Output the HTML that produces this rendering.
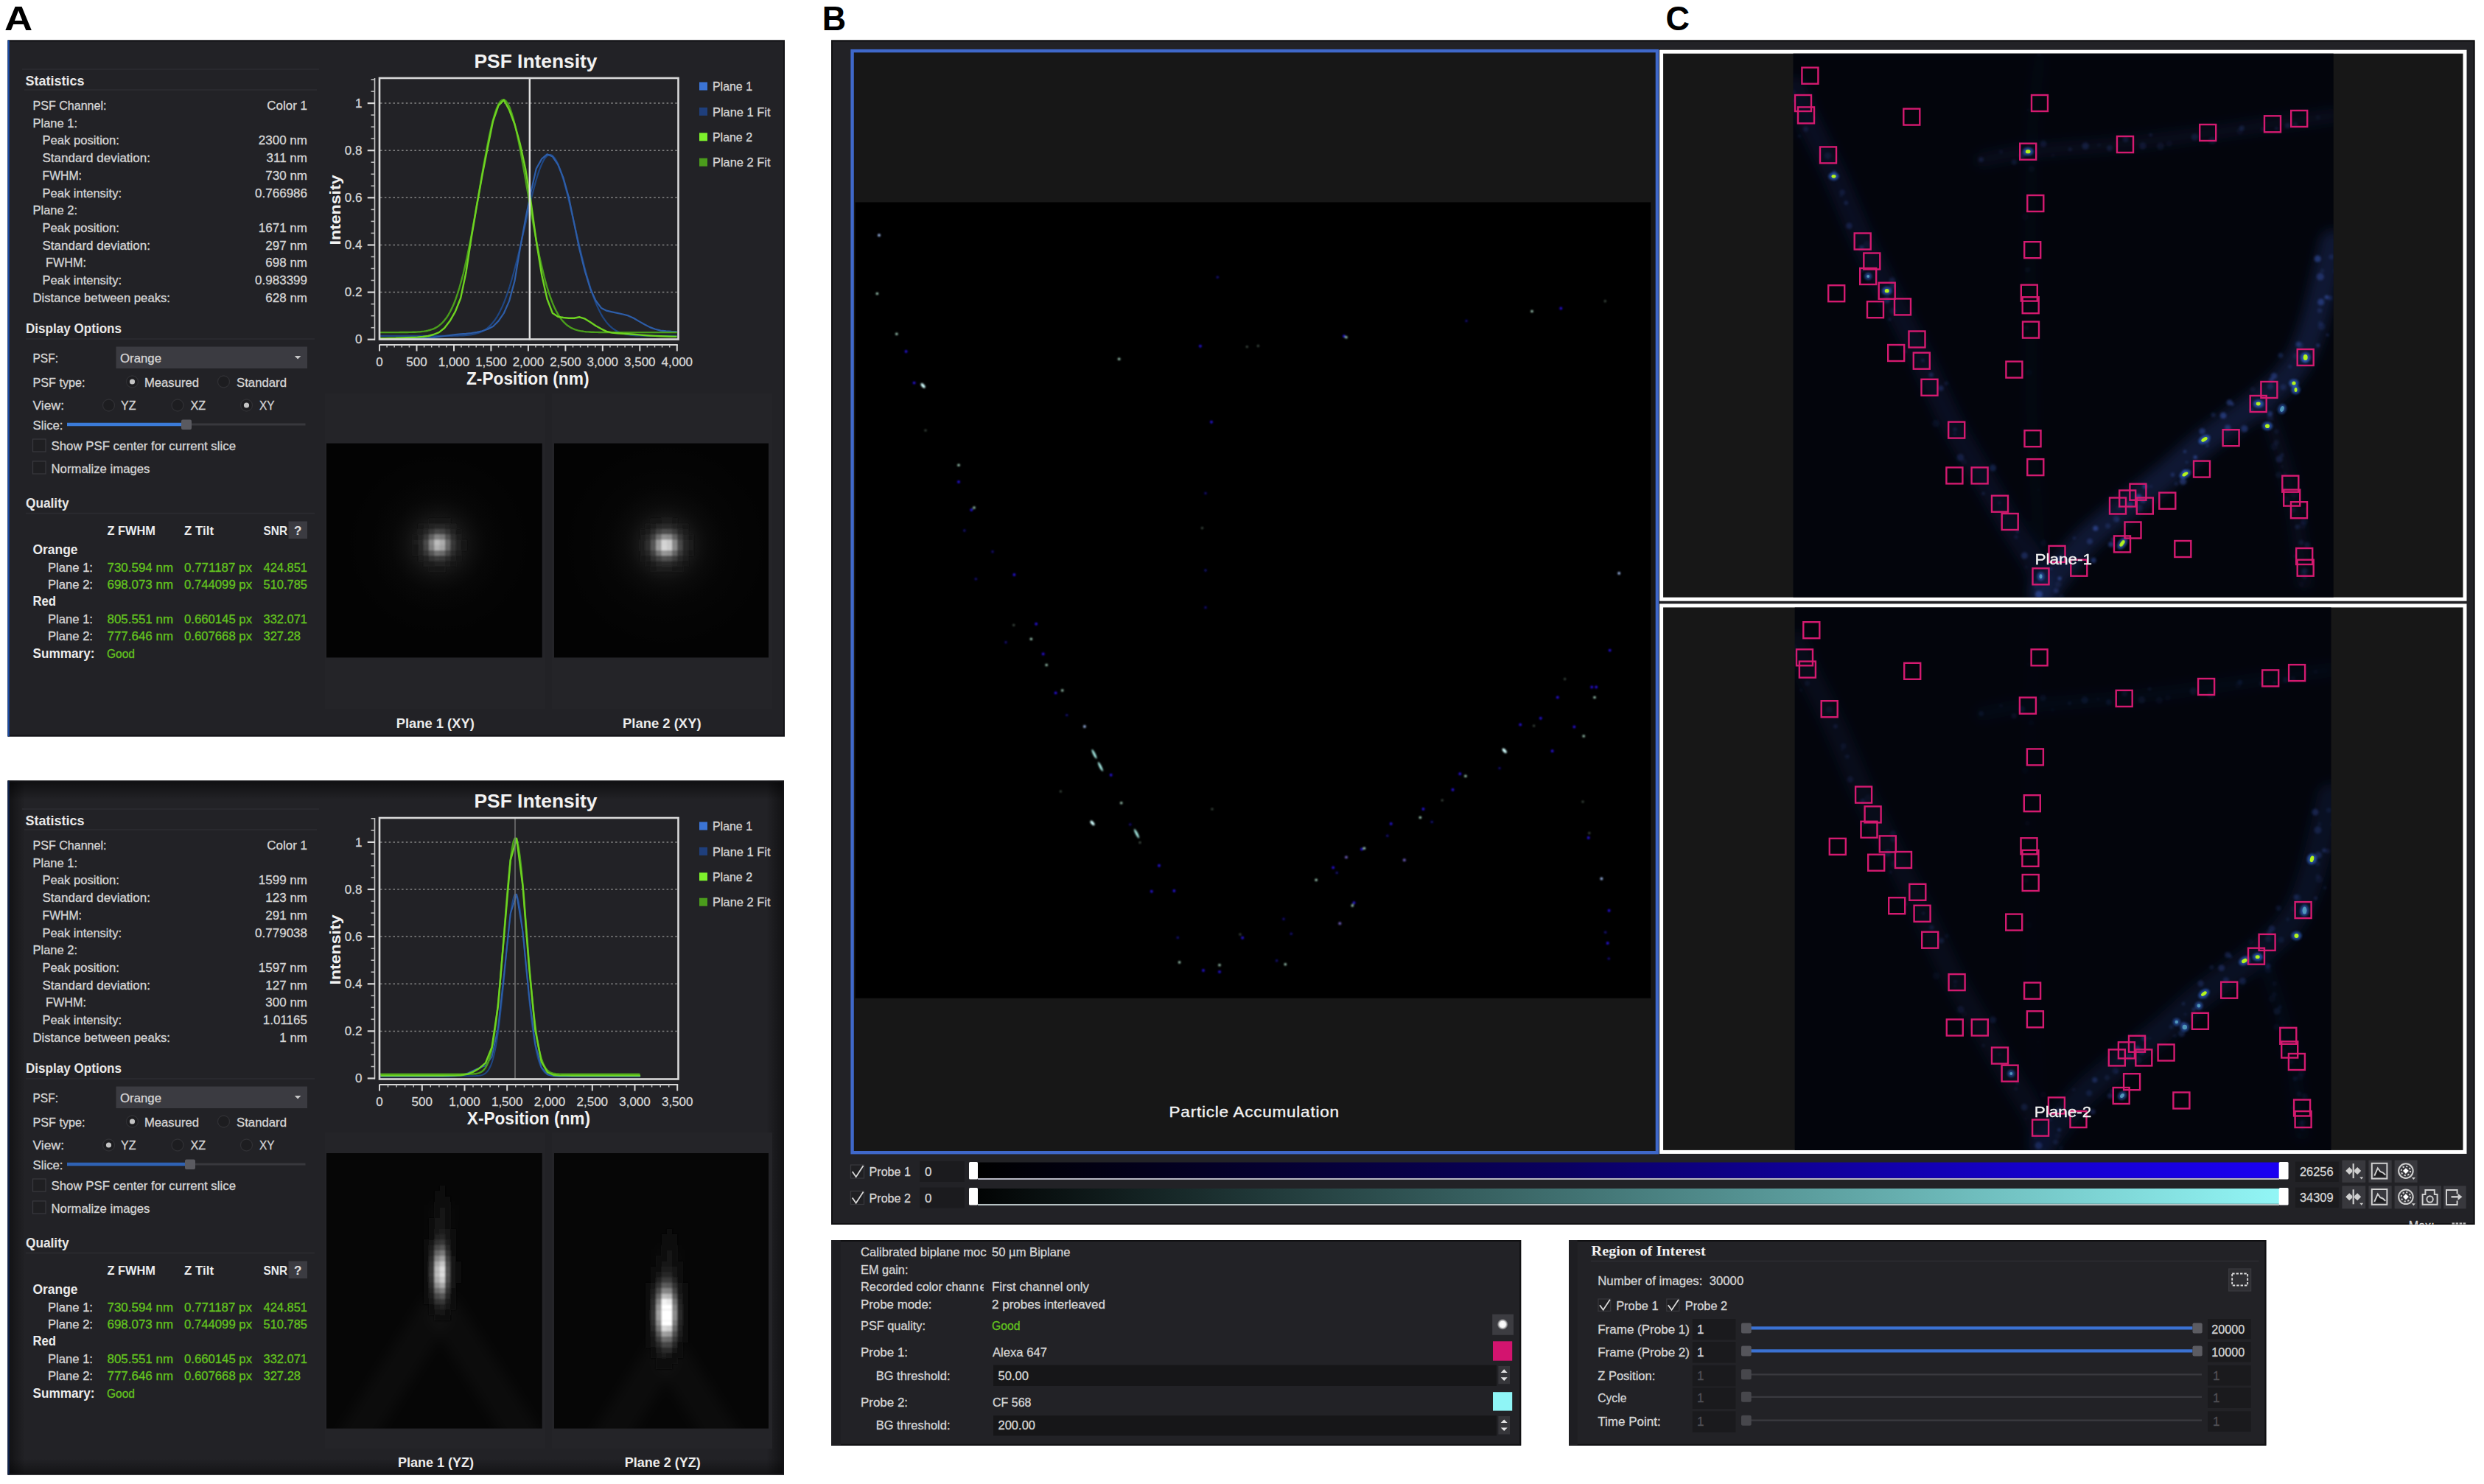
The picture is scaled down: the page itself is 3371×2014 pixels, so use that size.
<!DOCTYPE html>
<html><head><meta charset="utf-8"><title>Figure</title>
<style>
html,body{margin:0;padding:0;background:#ffffff;}
svg{display:block;font-family:"Liberation Sans",sans-serif;filter:blur(0.5px);}
</style></head><body>
<svg width="3371" height="2014" viewBox="0 0 3371 2014">
<defs>
<filter id="b07" x="-50%" y="-50%" width="200%" height="200%"><feGaussianBlur stdDeviation="0.7"/></filter>
<filter id="b1" x="-50%" y="-50%" width="200%" height="200%"><feGaussianBlur stdDeviation="1.0"/></filter>
<filter id="b2" x="-50%" y="-50%" width="200%" height="200%"><feGaussianBlur stdDeviation="1.8"/></filter>
<filter id="b9" x="-20%" y="-20%" width="140%" height="140%"><feGaussianBlur stdDeviation="8"/></filter>
</defs>
<rect x="0" y="0" width="3371" height="2014" fill="#ffffff"/>

<text x="6" y="40.6" font-size="47" font-weight="bold" fill="#000000" textLength="38.2" lengthAdjust="spacingAndGlyphs">A</text>
<text x="1115.8" y="40.6" font-size="47" font-weight="bold" fill="#000000" textLength="32.4" lengthAdjust="spacingAndGlyphs">B</text>
<text x="2260.6" y="40.6" font-size="47" font-weight="bold" fill="#000000" textLength="32.6" lengthAdjust="spacingAndGlyphs">C</text>
<rect x="10.5" y="54.5" width="1054.5" height="945.0" fill="#222226" />
<rect x="11.5" y="55.5" width="1052.5" height="943.0" fill="none" stroke="#131316" stroke-width="2"/>
<rect x="10.5" y="54.5" width="2.2" height="945.0" fill="#1d4ea6" />
<line x1="30.0" y1="94.0" x2="433.0" y2="94.0" stroke="#2d2d32" stroke-width="1.3" />
<line x1="33.0" y1="122.0" x2="430.0" y2="122.0" stroke="#2d2d32" stroke-width="1.3" />
<line x1="35.0" y1="460.0" x2="427.0" y2="460.0" stroke="#2d2d32" stroke-width="1.3" />
<line x1="35.0" y1="696.5" x2="427.0" y2="696.5" stroke="#2d2d32" stroke-width="1.3" />
<text x="34.5" y="115.9" font-size="18" font-weight="bold" textLength="80.0" lengthAdjust="spacingAndGlyphs" fill="#e8e8e8" >Statistics</text>
<text x="44.5" y="149.1" font-size="17" textLength="100.0" lengthAdjust="spacingAndGlyphs" fill="#d6d6d6"  stroke="#d6d6d6" stroke-width="0.3">PSF Channel:</text>
<text x="417.0" y="149.1" font-size="17" text-anchor="end" fill="#d6d6d6"  stroke="#d6d6d6" stroke-width="0.3">Color 1</text>
<text x="44.5" y="172.6" font-size="17" textLength="60.5" lengthAdjust="spacingAndGlyphs" fill="#d6d6d6"  stroke="#d6d6d6" stroke-width="0.3">Plane 1:</text>
<text x="57.5" y="196.1" font-size="17" textLength="104.5" lengthAdjust="spacingAndGlyphs" fill="#d6d6d6"  stroke="#d6d6d6" stroke-width="0.3">Peak position:</text>
<text x="417.0" y="196.1" font-size="17" text-anchor="end" fill="#d6d6d6"  stroke="#d6d6d6" stroke-width="0.3">2300 nm</text>
<text x="57.5" y="220.1" font-size="17" textLength="146.5" lengthAdjust="spacingAndGlyphs" fill="#d6d6d6"  stroke="#d6d6d6" stroke-width="0.3">Standard deviation:</text>
<text x="417.0" y="220.1" font-size="17" text-anchor="end" fill="#d6d6d6"  stroke="#d6d6d6" stroke-width="0.3">311 nm</text>
<text x="57.5" y="243.6" font-size="17" textLength="53.5" lengthAdjust="spacingAndGlyphs" fill="#d6d6d6"  stroke="#d6d6d6" stroke-width="0.3">FWHM:</text>
<text x="417.0" y="243.6" font-size="17" text-anchor="end" fill="#d6d6d6"  stroke="#d6d6d6" stroke-width="0.3">730 nm</text>
<text x="57.5" y="267.6" font-size="17" textLength="107.5" lengthAdjust="spacingAndGlyphs" fill="#d6d6d6"  stroke="#d6d6d6" stroke-width="0.3">Peak intensity:</text>
<text x="417.0" y="267.6" font-size="17" text-anchor="end" fill="#d6d6d6"  stroke="#d6d6d6" stroke-width="0.3">0.766986</text>
<text x="44.5" y="291.1" font-size="17" textLength="60.5" lengthAdjust="spacingAndGlyphs" fill="#d6d6d6"  stroke="#d6d6d6" stroke-width="0.3">Plane 2:</text>
<text x="57.5" y="315.1" font-size="17" textLength="104.5" lengthAdjust="spacingAndGlyphs" fill="#d6d6d6"  stroke="#d6d6d6" stroke-width="0.3">Peak position:</text>
<text x="417.0" y="315.1" font-size="17" text-anchor="end" fill="#d6d6d6"  stroke="#d6d6d6" stroke-width="0.3">1671 nm</text>
<text x="57.5" y="338.6" font-size="17" textLength="146.5" lengthAdjust="spacingAndGlyphs" fill="#d6d6d6"  stroke="#d6d6d6" stroke-width="0.3">Standard deviation:</text>
<text x="417.0" y="338.6" font-size="17" text-anchor="end" fill="#d6d6d6"  stroke="#d6d6d6" stroke-width="0.3">297 nm</text>
<text x="62.0" y="361.6" font-size="17" textLength="55.0" lengthAdjust="spacingAndGlyphs" fill="#d6d6d6"  stroke="#d6d6d6" stroke-width="0.3">FWHM:</text>
<text x="417.0" y="361.6" font-size="17" text-anchor="end" fill="#d6d6d6"  stroke="#d6d6d6" stroke-width="0.3">698 nm</text>
<text x="57.5" y="385.6" font-size="17" textLength="107.5" lengthAdjust="spacingAndGlyphs" fill="#d6d6d6"  stroke="#d6d6d6" stroke-width="0.3">Peak intensity:</text>
<text x="417.0" y="385.6" font-size="17" text-anchor="end" fill="#d6d6d6"  stroke="#d6d6d6" stroke-width="0.3">0.983399</text>
<text x="44.5" y="409.6" font-size="17" textLength="186.5" lengthAdjust="spacingAndGlyphs" fill="#d6d6d6"  stroke="#d6d6d6" stroke-width="0.3">Distance between peaks:</text>
<text x="417.0" y="409.6" font-size="17" text-anchor="end" fill="#d6d6d6"  stroke="#d6d6d6" stroke-width="0.3">628 nm</text>
<text x="35.0" y="451.9" font-size="18" font-weight="bold" textLength="130.0" lengthAdjust="spacingAndGlyphs" fill="#e8e8e8" >Display Options</text>
<text x="44.5" y="491.6" font-size="17" textLength="34.5" lengthAdjust="spacingAndGlyphs" fill="#d6d6d6"  stroke="#d6d6d6" stroke-width="0.3">PSF:</text>
<rect x="157.5" y="470.5" width="259.5" height="29.5" fill="#3b3b41" />
<text x="163.0" y="491.6" font-size="17" textLength="56.0" lengthAdjust="spacingAndGlyphs" fill="#d6d6d6"  stroke="#d6d6d6" stroke-width="0.3">Orange</text>
<path d="M399.8 483.0 h8.6 l-4.3 4.6z" fill="#c8c8c8"/>
<text x="44.5" y="524.6" font-size="17" textLength="71.0" lengthAdjust="spacingAndGlyphs" fill="#d6d6d6"  stroke="#d6d6d6" stroke-width="0.3">PSF type:</text>
<circle cx="179.5" cy="518.0" r="8" fill="#1d1d20" stroke="#303034" stroke-width="1.3"/>
<circle cx="179.5" cy="518.0" r="3.6" fill="#c4c4c4"/>
<text x="196.0" y="524.6" font-size="17" textLength="74.0" lengthAdjust="spacingAndGlyphs" fill="#d6d6d6"  stroke="#d6d6d6" stroke-width="0.3">Measured</text>
<circle cx="303.5" cy="518.0" r="8" fill="#1d1d20" stroke="#303034" stroke-width="1.3"/>
<text x="321.0" y="524.6" font-size="17" textLength="68.0" lengthAdjust="spacingAndGlyphs" fill="#d6d6d6"  stroke="#d6d6d6" stroke-width="0.3">Standard</text>
<text x="44.5" y="555.6" font-size="17" textLength="42.5" lengthAdjust="spacingAndGlyphs" fill="#d6d6d6"  stroke="#d6d6d6" stroke-width="0.3">View:</text>
<circle cx="147.5" cy="550.0" r="8" fill="#1d1d20" stroke="#303034" stroke-width="1.3"/>
<text x="164.0" y="555.6" font-size="17" textLength="20.5" lengthAdjust="spacingAndGlyphs" fill="#d6d6d6"  stroke="#d6d6d6" stroke-width="0.3">YZ</text>
<circle cx="241.0" cy="550.0" r="8" fill="#1d1d20" stroke="#303034" stroke-width="1.3"/>
<text x="258.5" y="555.6" font-size="17" textLength="20.5" lengthAdjust="spacingAndGlyphs" fill="#d6d6d6"  stroke="#d6d6d6" stroke-width="0.3">XZ</text>
<circle cx="334.5" cy="550.0" r="8" fill="#1d1d20" stroke="#303034" stroke-width="1.3"/>
<circle cx="334.5" cy="550.0" r="3.6" fill="#c4c4c4"/>
<text x="352.0" y="555.6" font-size="17" textLength="20.5" lengthAdjust="spacingAndGlyphs" fill="#d6d6d6"  stroke="#d6d6d6" stroke-width="0.3">XY</text>
<text x="44.5" y="583.1" font-size="17" textLength="41.0" lengthAdjust="spacingAndGlyphs" fill="#d6d6d6"  stroke="#d6d6d6" stroke-width="0.3">Slice:</text>
<line x1="260.0" y1="576.0" x2="414.5" y2="576.0" stroke="#38383d" stroke-width="3" />
<line x1="91.0" y1="576.0" x2="246.0" y2="576.0" stroke="#3b7bd8" stroke-width="4.5" />
<rect x="246.0" y="569.5" width="14.0" height="13.5" fill="#5a5a60" rx="2"/>
<rect x="44.5" y="596.0" width="17.5" height="17.0" fill="#1f1f22" stroke="#38383c" stroke-width="1.3"/>
<text x="69.5" y="611.1" font-size="17" textLength="250.5" lengthAdjust="spacingAndGlyphs" fill="#d6d6d6"  stroke="#d6d6d6" stroke-width="0.3">Show PSF center for current slice</text>
<rect x="44.5" y="626.0" width="17.5" height="17.0" fill="#1f1f22" stroke="#38383c" stroke-width="1.3"/>
<text x="69.5" y="641.6" font-size="17" textLength="134.0" lengthAdjust="spacingAndGlyphs" fill="#d6d6d6"  stroke="#d6d6d6" stroke-width="0.3">Normalize images</text>
<text x="35.0" y="688.9" font-size="18" font-weight="bold" textLength="58.5" lengthAdjust="spacingAndGlyphs" fill="#e8e8e8" >Quality</text>
<text x="145.5" y="725.6" font-size="17" font-weight="bold" textLength="65.5" lengthAdjust="spacingAndGlyphs" fill="#ececec" >Z FWHM</text>
<text x="250.0" y="725.6" font-size="17" font-weight="bold" textLength="40.0" lengthAdjust="spacingAndGlyphs" fill="#ececec" >Z Tilt</text>
<text x="357.5" y="725.6" font-size="17" font-weight="bold" textLength="32.5" lengthAdjust="spacingAndGlyphs" fill="#ececec" >SNR</text>
<rect x="391.5" y="707.5" width="25.5" height="23.5" fill="#3b3b41" />
<text x="404.3" y="725.6" font-size="17" font-weight="bold" text-anchor="middle" fill="#e0e0e0" >?</text>
<text x="44.5" y="751.9" font-size="18" font-weight="bold" textLength="61.0" lengthAdjust="spacingAndGlyphs" fill="#ececec" >Orange</text>
<text x="44.5" y="821.9" font-size="18" font-weight="bold" textLength="31.5" lengthAdjust="spacingAndGlyphs" fill="#ececec" >Red</text>
<text x="65.0" y="775.6" font-size="17" textLength="61.0" lengthAdjust="spacingAndGlyphs" fill="#d6d6d6"  stroke="#d6d6d6" stroke-width="0.3">Plane 1:</text>
<text x="145.5" y="775.6" font-size="17" textLength="89.5" lengthAdjust="spacingAndGlyphs" fill="#63c41f"  stroke="#63c41f" stroke-width="0.3">730.594 nm</text>
<text x="250.0" y="775.6" font-size="17" textLength="92.0" lengthAdjust="spacingAndGlyphs" fill="#63c41f"  stroke="#63c41f" stroke-width="0.3">0.771187 px</text>
<text x="357.5" y="775.6" font-size="17" textLength="59.5" lengthAdjust="spacingAndGlyphs" fill="#63c41f"  stroke="#63c41f" stroke-width="0.3">424.851</text>
<text x="65.0" y="798.6" font-size="17" textLength="61.0" lengthAdjust="spacingAndGlyphs" fill="#d6d6d6"  stroke="#d6d6d6" stroke-width="0.3">Plane 2:</text>
<text x="145.5" y="798.6" font-size="17" textLength="89.5" lengthAdjust="spacingAndGlyphs" fill="#63c41f"  stroke="#63c41f" stroke-width="0.3">698.073 nm</text>
<text x="250.0" y="798.6" font-size="17" textLength="92.0" lengthAdjust="spacingAndGlyphs" fill="#63c41f"  stroke="#63c41f" stroke-width="0.3">0.744099 px</text>
<text x="357.5" y="798.6" font-size="17" textLength="59.5" lengthAdjust="spacingAndGlyphs" fill="#63c41f"  stroke="#63c41f" stroke-width="0.3">510.785</text>
<text x="65.0" y="846.1" font-size="17" textLength="61.0" lengthAdjust="spacingAndGlyphs" fill="#d6d6d6"  stroke="#d6d6d6" stroke-width="0.3">Plane 1:</text>
<text x="145.5" y="846.1" font-size="17" textLength="89.5" lengthAdjust="spacingAndGlyphs" fill="#63c41f"  stroke="#63c41f" stroke-width="0.3">805.551 nm</text>
<text x="250.0" y="846.1" font-size="17" textLength="92.0" lengthAdjust="spacingAndGlyphs" fill="#63c41f"  stroke="#63c41f" stroke-width="0.3">0.660145 px</text>
<text x="357.5" y="846.1" font-size="17" textLength="59.5" lengthAdjust="spacingAndGlyphs" fill="#63c41f"  stroke="#63c41f" stroke-width="0.3">332.071</text>
<text x="65.0" y="869.1" font-size="17" textLength="61.0" lengthAdjust="spacingAndGlyphs" fill="#d6d6d6"  stroke="#d6d6d6" stroke-width="0.3">Plane 2:</text>
<text x="145.5" y="869.1" font-size="17" textLength="89.5" lengthAdjust="spacingAndGlyphs" fill="#63c41f"  stroke="#63c41f" stroke-width="0.3">777.646 nm</text>
<text x="250.0" y="869.1" font-size="17" textLength="92.0" lengthAdjust="spacingAndGlyphs" fill="#63c41f"  stroke="#63c41f" stroke-width="0.3">0.607668 px</text>
<text x="357.5" y="869.1" font-size="17" textLength="50.5" lengthAdjust="spacingAndGlyphs" fill="#63c41f"  stroke="#63c41f" stroke-width="0.3">327.28</text>
<text x="44.5" y="893.4" font-size="18" font-weight="bold" textLength="84.0" lengthAdjust="spacingAndGlyphs" fill="#ececec" >Summary:</text>
<text x="145.0" y="893.1" font-size="17" textLength="38.0" lengthAdjust="spacingAndGlyphs" fill="#63c41f"  stroke="#63c41f" stroke-width="0.3">Good</text>
<text x="643.5" y="91.6" font-size="26" font-weight="bold" textLength="167.0" lengthAdjust="spacingAndGlyphs" fill="#f2f2f2" >PSF Intensity</text>
<line x1="516.0" y1="396.6" x2="920.5" y2="396.6" stroke="#828282" stroke-width="1.5" stroke-dasharray="2.6 3.2"/>
<line x1="516.0" y1="332.5" x2="920.5" y2="332.5" stroke="#828282" stroke-width="1.5" stroke-dasharray="2.6 3.2"/>
<line x1="516.0" y1="268.3" x2="920.5" y2="268.3" stroke="#828282" stroke-width="1.5" stroke-dasharray="2.6 3.2"/>
<line x1="516.0" y1="204.2" x2="920.5" y2="204.2" stroke="#828282" stroke-width="1.5" stroke-dasharray="2.6 3.2"/>
<line x1="516.0" y1="140.1" x2="920.5" y2="140.1" stroke="#828282" stroke-width="1.5" stroke-dasharray="2.6 3.2"/>
<clipPath id="clip0"><rect x="515.0" y="106.0" width="405.5" height="354.5"/></clipPath>
<g clip-path="url(#clip0)" fill="none" stroke-linejoin="round">
<path d="M515.0,455.9 L517.5,455.9 L520.0,455.9 L522.6,455.9 L525.1,455.9 L527.6,455.9 L530.1,455.9 L532.7,455.9 L535.2,455.9 L537.7,455.9 L540.2,455.9 L542.8,455.9 L545.3,455.9 L547.8,455.9 L550.3,455.9 L552.9,455.9 L555.4,455.9 L557.9,455.9 L560.4,455.9 L563.0,455.9 L565.5,455.9 L568.0,455.9 L570.5,455.9 L573.0,455.9 L575.6,455.9 L578.1,455.9 L580.6,455.9 L583.1,455.9 L585.7,455.9 L588.2,455.9 L590.7,455.9 L593.2,455.9 L595.8,455.9 L598.3,455.9 L600.8,455.9 L603.3,455.9 L605.9,455.8 L608.4,455.8 L610.9,455.8 L613.4,455.8 L616.0,455.7 L618.5,455.7 L621.0,455.6 L623.5,455.5 L626.0,455.4 L628.6,455.3 L631.1,455.1 L633.6,454.9 L636.1,454.7 L638.7,454.3 L641.2,453.9 L643.7,453.4 L646.2,452.8 L648.8,452.0 L651.3,451.1 L653.8,450.0 L656.3,448.7 L658.9,447.1 L661.4,445.3 L663.9,443.1 L666.4,440.6 L668.9,437.8 L671.5,434.5 L674.0,430.7 L676.5,426.4 L679.0,421.6 L681.6,416.2 L684.1,410.3 L686.6,403.7 L689.1,396.6 L691.7,388.8 L694.2,380.5 L696.7,371.5 L699.2,362.1 L701.8,352.1 L704.3,341.7 L706.8,331.0 L709.3,320.1 L711.9,309.0 L714.4,297.9 L716.9,286.8 L719.4,276.1 L721.9,265.6 L724.5,255.8 L727.0,246.5 L729.5,238.1 L732.0,230.6 L734.6,224.1 L737.1,218.7 L739.6,214.6 L742.1,211.7 L744.7,210.2 L747.2,210.1 L749.7,211.3 L752.2,213.9 L754.8,217.8 L757.3,222.9 L759.8,229.2 L762.3,236.5 L764.9,244.8 L767.4,253.9 L769.9,263.6 L772.4,273.9 L774.9,284.7 L777.5,295.6 L780.0,306.7 L782.5,317.9 L785.0,328.8 L787.6,339.6 L790.1,350.1 L792.6,360.1 L795.1,369.7 L797.7,378.7 L800.2,387.2 L802.7,395.1 L805.2,402.4 L807.8,409.0 L810.3,415.1 L812.8,420.6 L815.3,425.5 L817.8,429.9 L820.4,433.7 L822.9,437.1 L825.4,440.1 L827.9,442.7 L830.5,444.9 L833.0,446.8 L835.5,448.4 L838.0,449.7 L840.6,450.9 L843.1,451.8 L845.6,452.6 L848.1,453.3 L850.7,453.8 L853.2,454.2 L855.7,454.6 L858.2,454.9 L860.8,455.1 L863.3,455.3 L865.8,455.4 L868.3,455.5 L870.8,455.6 L873.4,455.7 L875.9,455.7 L878.4,455.8 L880.9,455.8 L883.5,455.8 L886.0,455.8 L888.5,455.9 L891.0,455.9 L893.6,455.9 L896.1,455.9 L898.6,455.9 L901.1,455.9 L903.7,455.9 L906.2,455.9 L908.7,455.9 L911.2,455.9 L913.8,455.9 L916.3,455.9 L918.8,455.9" stroke="#1f4682" stroke-width="2.2"/>
<path d="M515.0,460.7 L522.3,460.7 L529.7,460.6 L537.0,460.4 L544.4,460.3 L551.7,460.0 L559.0,459.8 L566.4,459.5 L573.7,459.2 L581.1,458.7 L588.4,458.0 L595.7,457.0 L603.1,456.0 L610.4,455.0 L617.7,454.1 L625.1,453.4 L632.4,452.8 L639.8,452.0 L647.1,450.9 L654.4,449.3 L661.8,446.8 L669.1,443.0 L676.5,435.6 L683.8,425.0 L691.1,408.4 L698.5,381.1 L705.8,337.4 L713.2,297.0 L720.5,260.5 L727.8,228.7 L735.2,215.6 L742.5,209.3 L749.9,212.6 L757.2,223.3 L764.5,241.5 L771.9,267.8 L779.2,303.4 L786.5,338.7 L793.9,368.2 L801.2,392.1 L808.6,408.2 L815.9,417.9 L823.2,421.7 L830.6,423.3 L837.9,424.9 L845.3,426.5 L852.6,428.4 L859.9,431.8 L867.3,436.1 L874.6,440.2 L882.0,444.1 L889.3,446.7 L896.6,448.6 L904.0,449.4 L911.3,449.9 L918.6,450.1" stroke="#2d5da8" stroke-width="2.2"/>
<path d="M515.0,451.1 L517.5,451.1 L520.0,451.1 L522.6,451.1 L525.1,451.1 L527.6,451.1 L530.1,451.1 L532.7,451.1 L535.2,451.1 L537.7,451.1 L540.2,451.1 L542.8,451.0 L545.3,451.0 L547.8,451.0 L550.3,451.0 L552.9,451.0 L555.4,450.9 L557.9,450.9 L560.4,450.8 L563.0,450.7 L565.5,450.6 L568.0,450.4 L570.5,450.2 L573.0,449.9 L575.6,449.6 L578.1,449.2 L580.6,448.7 L583.1,448.0 L585.7,447.2 L588.2,446.3 L590.7,445.1 L593.2,443.7 L595.8,441.9 L598.3,439.9 L600.8,437.5 L603.3,434.6 L605.9,431.3 L608.4,427.4 L610.9,423.0 L613.4,417.9 L616.0,412.2 L618.5,405.7 L621.0,398.4 L623.5,390.3 L626.0,381.4 L628.6,371.7 L631.1,361.1 L633.6,349.7 L636.1,337.6 L638.7,324.8 L641.2,311.3 L643.7,297.4 L646.2,283.0 L648.8,268.4 L651.3,253.7 L653.8,239.0 L656.3,224.6 L658.9,210.7 L661.4,197.4 L663.9,184.9 L666.4,173.5 L668.9,163.3 L671.5,154.5 L674.0,147.2 L676.5,141.5 L679.0,137.7 L681.6,135.6 L684.1,135.4 L686.6,137.1 L689.1,140.6 L691.7,145.9 L694.2,152.9 L696.7,161.4 L699.2,171.3 L701.8,182.5 L704.3,194.8 L706.8,207.9 L709.3,221.8 L711.9,236.1 L714.4,250.7 L716.9,265.4 L719.4,280.1 L721.9,294.5 L724.5,308.6 L727.0,322.1 L729.5,335.1 L732.0,347.4 L734.6,358.9 L737.1,369.6 L739.6,379.5 L742.1,388.6 L744.7,396.8 L747.2,404.3 L749.7,410.9 L752.2,416.8 L754.8,422.0 L757.3,426.6 L759.8,430.6 L762.3,434.0 L764.9,436.9 L767.4,439.4 L769.9,441.6 L772.4,443.3 L774.9,444.8 L777.5,446.0 L780.0,447.1 L782.5,447.9 L785.0,448.6 L787.6,449.1 L790.1,449.5 L792.6,449.9 L795.1,450.2 L797.7,450.4 L800.2,450.5 L802.7,450.7 L805.2,450.8 L807.8,450.9 L810.3,450.9 L812.8,451.0 L815.3,451.0 L817.8,451.0 L820.4,451.0 L822.9,451.0 L825.4,451.1 L827.9,451.1 L830.5,451.1 L833.0,451.1 L835.5,451.1 L838.0,451.1 L840.6,451.1 L843.1,451.1 L845.6,451.1 L848.1,451.1 L850.7,451.1 L853.2,451.1 L855.7,451.1 L858.2,451.1 L860.8,451.1 L863.3,451.1 L865.8,451.1 L868.3,451.1 L870.8,451.1 L873.4,451.1 L875.9,451.1 L878.4,451.1 L880.9,451.1 L883.5,451.1 L886.0,451.1 L888.5,451.1 L891.0,451.1 L893.6,451.1 L896.1,451.1 L898.6,451.1 L901.1,451.1 L903.7,451.1 L906.2,451.1 L908.7,451.1 L911.2,451.1 L913.8,451.1 L916.3,451.1 L918.8,451.1" stroke="#4a9e1c" stroke-width="2.4"/>
<path d="M515.0,459.1 L522.3,459.1 L529.7,458.9 L537.0,458.8 L544.4,458.5 L551.7,458.3 L559.0,458.0 L566.4,457.6 L573.7,457.0 L581.1,456.0 L588.4,454.0 L595.7,451.1 L603.1,445.2 L610.4,435.8 L617.7,423.2 L625.1,404.7 L632.4,370.1 L639.8,321.7 L647.1,278.8 L654.4,238.0 L661.8,200.2 L669.1,164.3 L676.5,143.2 L683.8,135.7 L691.1,149.3 L698.5,168.7 L705.8,195.2 L713.2,229.6 L720.5,274.0 L727.8,327.4 L735.2,373.2 L742.5,405.8 L749.9,425.1 L757.2,429.7 L764.5,431.0 L771.9,431.7 L779.2,431.7 L786.5,430.3 L793.9,432.7 L801.2,437.2 L808.6,442.2 L815.9,446.3 L823.2,449.8 L830.6,451.5 L837.9,452.2 L845.3,452.8 L852.6,453.2 L859.9,453.8 L867.3,454.4 L874.6,455.0 L882.0,455.5 L889.3,455.9 L896.6,456.2 L904.0,456.5 L911.3,456.7 L918.6,456.9" stroke="#6ed321" stroke-width="2.4"/>
</g>
<line x1="718.8" y1="105.0" x2="718.8" y2="461.5" stroke="#e0e0e0" stroke-width="2.4" />
<rect x="515.0" y="106.0" width="405.5" height="354.5" fill="none" stroke="#d9d9d9" stroke-width="2.6"/>
<line x1="508.5" y1="106.0" x2="508.5" y2="461.7" stroke="#c8c8c8" stroke-width="1.6" />
<line x1="498.7" y1="460.7" x2="509.0" y2="460.7" stroke="#d8d8d8" stroke-width="2.2" />
<line x1="503.5" y1="444.7" x2="509.0" y2="444.7" stroke="#bdbdbd" stroke-width="1.6" />
<line x1="503.5" y1="428.6" x2="509.0" y2="428.6" stroke="#bdbdbd" stroke-width="1.6" />
<line x1="503.5" y1="412.6" x2="509.0" y2="412.6" stroke="#bdbdbd" stroke-width="1.6" />
<line x1="498.7" y1="396.6" x2="509.0" y2="396.6" stroke="#d8d8d8" stroke-width="2.2" />
<line x1="503.5" y1="380.5" x2="509.0" y2="380.5" stroke="#bdbdbd" stroke-width="1.6" />
<line x1="503.5" y1="364.5" x2="509.0" y2="364.5" stroke="#bdbdbd" stroke-width="1.6" />
<line x1="503.5" y1="348.5" x2="509.0" y2="348.5" stroke="#bdbdbd" stroke-width="1.6" />
<line x1="498.7" y1="332.5" x2="509.0" y2="332.5" stroke="#d8d8d8" stroke-width="2.2" />
<line x1="503.5" y1="316.4" x2="509.0" y2="316.4" stroke="#bdbdbd" stroke-width="1.6" />
<line x1="503.5" y1="300.4" x2="509.0" y2="300.4" stroke="#bdbdbd" stroke-width="1.6" />
<line x1="503.5" y1="284.4" x2="509.0" y2="284.4" stroke="#bdbdbd" stroke-width="1.6" />
<line x1="498.7" y1="268.3" x2="509.0" y2="268.3" stroke="#d8d8d8" stroke-width="2.2" />
<line x1="503.5" y1="252.3" x2="509.0" y2="252.3" stroke="#bdbdbd" stroke-width="1.6" />
<line x1="503.5" y1="236.3" x2="509.0" y2="236.3" stroke="#bdbdbd" stroke-width="1.6" />
<line x1="503.5" y1="220.2" x2="509.0" y2="220.2" stroke="#bdbdbd" stroke-width="1.6" />
<line x1="498.7" y1="204.2" x2="509.0" y2="204.2" stroke="#d8d8d8" stroke-width="2.2" />
<line x1="503.5" y1="188.2" x2="509.0" y2="188.2" stroke="#bdbdbd" stroke-width="1.6" />
<line x1="503.5" y1="172.2" x2="509.0" y2="172.2" stroke="#bdbdbd" stroke-width="1.6" />
<line x1="503.5" y1="156.1" x2="509.0" y2="156.1" stroke="#bdbdbd" stroke-width="1.6" />
<line x1="498.7" y1="140.1" x2="509.0" y2="140.1" stroke="#d8d8d8" stroke-width="2.2" />
<line x1="503.5" y1="124.1" x2="509.0" y2="124.1" stroke="#bdbdbd" stroke-width="1.6" />
<line x1="503.5" y1="108.0" x2="509.0" y2="108.0" stroke="#bdbdbd" stroke-width="1.6" />
<text x="491.5" y="466.3" font-size="17" text-anchor="end" fill="#d6d6d6"  stroke="#d6d6d6" stroke-width="0.3">0</text>
<text x="491.5" y="402.2" font-size="17" text-anchor="end" fill="#d6d6d6"  stroke="#d6d6d6" stroke-width="0.3">0.2</text>
<text x="491.5" y="338.1" font-size="17" text-anchor="end" fill="#d6d6d6"  stroke="#d6d6d6" stroke-width="0.3">0.4</text>
<text x="491.5" y="273.9" font-size="17" text-anchor="end" fill="#d6d6d6"  stroke="#d6d6d6" stroke-width="0.3">0.6</text>
<text x="491.5" y="209.8" font-size="17" text-anchor="end" fill="#d6d6d6"  stroke="#d6d6d6" stroke-width="0.3">0.8</text>
<text x="491.5" y="145.7" font-size="17" text-anchor="end" fill="#d6d6d6"  stroke="#d6d6d6" stroke-width="0.3">1</text>
<text transform="translate(461.9,285.0) rotate(-90)" font-size="21" font-weight="bold" text-anchor="middle" textLength="95" lengthAdjust="spacingAndGlyphs" fill="#f2f2f2">Intensity</text>
<line x1="514.5" y1="468.0" x2="919.8" y2="468.0" stroke="#d8d8d8" stroke-width="2" />
<line x1="515.0" y1="468.0" x2="515.0" y2="476.5" stroke="#d8d8d8" stroke-width="2" />
<text x="515.0" y="496.6" font-size="17" text-anchor="middle" fill="#d6d6d6"  stroke="#d6d6d6" stroke-width="0.3">0</text>
<line x1="525.1" y1="468.0" x2="525.1" y2="471.5" stroke="#c0c0c0" stroke-width="1.5" />
<line x1="535.2" y1="468.0" x2="535.2" y2="471.5" stroke="#c0c0c0" stroke-width="1.5" />
<line x1="545.3" y1="468.0" x2="545.3" y2="471.5" stroke="#c0c0c0" stroke-width="1.5" />
<line x1="555.4" y1="468.0" x2="555.4" y2="471.5" stroke="#c0c0c0" stroke-width="1.5" />
<line x1="565.5" y1="468.0" x2="565.5" y2="476.5" stroke="#d8d8d8" stroke-width="2" />
<text x="565.5" y="496.6" font-size="17" text-anchor="middle" fill="#d6d6d6"  stroke="#d6d6d6" stroke-width="0.3">500</text>
<line x1="575.6" y1="468.0" x2="575.6" y2="471.5" stroke="#c0c0c0" stroke-width="1.5" />
<line x1="585.7" y1="468.0" x2="585.7" y2="471.5" stroke="#c0c0c0" stroke-width="1.5" />
<line x1="595.8" y1="468.0" x2="595.8" y2="471.5" stroke="#c0c0c0" stroke-width="1.5" />
<line x1="605.9" y1="468.0" x2="605.9" y2="471.5" stroke="#c0c0c0" stroke-width="1.5" />
<line x1="616.0" y1="468.0" x2="616.0" y2="476.5" stroke="#d8d8d8" stroke-width="2" />
<text x="616.0" y="496.6" font-size="17" text-anchor="middle" fill="#d6d6d6"  stroke="#d6d6d6" stroke-width="0.3">1,000</text>
<line x1="626.0" y1="468.0" x2="626.0" y2="471.5" stroke="#c0c0c0" stroke-width="1.5" />
<line x1="636.1" y1="468.0" x2="636.1" y2="471.5" stroke="#c0c0c0" stroke-width="1.5" />
<line x1="646.2" y1="468.0" x2="646.2" y2="471.5" stroke="#c0c0c0" stroke-width="1.5" />
<line x1="656.3" y1="468.0" x2="656.3" y2="471.5" stroke="#c0c0c0" stroke-width="1.5" />
<line x1="666.4" y1="468.0" x2="666.4" y2="476.5" stroke="#d8d8d8" stroke-width="2" />
<text x="666.4" y="496.6" font-size="17" text-anchor="middle" fill="#d6d6d6"  stroke="#d6d6d6" stroke-width="0.3">1,500</text>
<line x1="676.5" y1="468.0" x2="676.5" y2="471.5" stroke="#c0c0c0" stroke-width="1.5" />
<line x1="686.6" y1="468.0" x2="686.6" y2="471.5" stroke="#c0c0c0" stroke-width="1.5" />
<line x1="696.7" y1="468.0" x2="696.7" y2="471.5" stroke="#c0c0c0" stroke-width="1.5" />
<line x1="706.8" y1="468.0" x2="706.8" y2="471.5" stroke="#c0c0c0" stroke-width="1.5" />
<line x1="716.9" y1="468.0" x2="716.9" y2="476.5" stroke="#d8d8d8" stroke-width="2" />
<text x="716.9" y="496.6" font-size="17" text-anchor="middle" fill="#d6d6d6"  stroke="#d6d6d6" stroke-width="0.3">2,000</text>
<line x1="727.0" y1="468.0" x2="727.0" y2="471.5" stroke="#c0c0c0" stroke-width="1.5" />
<line x1="737.1" y1="468.0" x2="737.1" y2="471.5" stroke="#c0c0c0" stroke-width="1.5" />
<line x1="747.2" y1="468.0" x2="747.2" y2="471.5" stroke="#c0c0c0" stroke-width="1.5" />
<line x1="757.3" y1="468.0" x2="757.3" y2="471.5" stroke="#c0c0c0" stroke-width="1.5" />
<line x1="767.4" y1="468.0" x2="767.4" y2="476.5" stroke="#d8d8d8" stroke-width="2" />
<text x="767.4" y="496.6" font-size="17" text-anchor="middle" fill="#d6d6d6"  stroke="#d6d6d6" stroke-width="0.3">2,500</text>
<line x1="777.5" y1="468.0" x2="777.5" y2="471.5" stroke="#c0c0c0" stroke-width="1.5" />
<line x1="787.6" y1="468.0" x2="787.6" y2="471.5" stroke="#c0c0c0" stroke-width="1.5" />
<line x1="797.7" y1="468.0" x2="797.7" y2="471.5" stroke="#c0c0c0" stroke-width="1.5" />
<line x1="807.8" y1="468.0" x2="807.8" y2="471.5" stroke="#c0c0c0" stroke-width="1.5" />
<line x1="817.8" y1="468.0" x2="817.8" y2="476.5" stroke="#d8d8d8" stroke-width="2" />
<text x="817.8" y="496.6" font-size="17" text-anchor="middle" fill="#d6d6d6"  stroke="#d6d6d6" stroke-width="0.3">3,000</text>
<line x1="827.9" y1="468.0" x2="827.9" y2="471.5" stroke="#c0c0c0" stroke-width="1.5" />
<line x1="838.0" y1="468.0" x2="838.0" y2="471.5" stroke="#c0c0c0" stroke-width="1.5" />
<line x1="848.1" y1="468.0" x2="848.1" y2="471.5" stroke="#c0c0c0" stroke-width="1.5" />
<line x1="858.2" y1="468.0" x2="858.2" y2="471.5" stroke="#c0c0c0" stroke-width="1.5" />
<line x1="868.3" y1="468.0" x2="868.3" y2="476.5" stroke="#d8d8d8" stroke-width="2" />
<text x="868.3" y="496.6" font-size="17" text-anchor="middle" fill="#d6d6d6"  stroke="#d6d6d6" stroke-width="0.3">3,500</text>
<line x1="878.4" y1="468.0" x2="878.4" y2="471.5" stroke="#c0c0c0" stroke-width="1.5" />
<line x1="888.5" y1="468.0" x2="888.5" y2="471.5" stroke="#c0c0c0" stroke-width="1.5" />
<line x1="898.6" y1="468.0" x2="898.6" y2="471.5" stroke="#c0c0c0" stroke-width="1.5" />
<line x1="908.7" y1="468.0" x2="908.7" y2="471.5" stroke="#c0c0c0" stroke-width="1.5" />
<line x1="918.8" y1="468.0" x2="918.8" y2="476.5" stroke="#d8d8d8" stroke-width="2" />
<text x="918.8" y="496.6" font-size="17" text-anchor="middle" fill="#d6d6d6"  stroke="#d6d6d6" stroke-width="0.3">4,000</text>
<text x="633.0" y="521.6" font-size="23" font-weight="bold" textLength="166.5" lengthAdjust="spacingAndGlyphs" fill="#f2f2f2" >Z-Position (nm)</text>
<rect x="949.0" y="111.5" width="11.0" height="11.0" fill="#3b74d6" />
<text x="967.0" y="123.1" font-size="17" textLength="54.0" lengthAdjust="spacingAndGlyphs" fill="#d6d6d6"  stroke="#d6d6d6" stroke-width="0.3">Plane 1</text>
<rect x="949.0" y="145.9" width="11.0" height="11.0" fill="#1f3f7c" />
<text x="967.0" y="157.5" font-size="17" textLength="78.5" lengthAdjust="spacingAndGlyphs" fill="#d6d6d6"  stroke="#d6d6d6" stroke-width="0.3">Plane 1 Fit</text>
<rect x="949.0" y="180.3" width="11.0" height="11.0" fill="#7df02c" />
<text x="967.0" y="191.9" font-size="17" textLength="54.0" lengthAdjust="spacingAndGlyphs" fill="#d6d6d6"  stroke="#d6d6d6" stroke-width="0.3">Plane 2</text>
<rect x="949.0" y="214.7" width="11.0" height="11.0" fill="#4b9c1c" />
<text x="967.0" y="226.3" font-size="17" textLength="78.5" lengthAdjust="spacingAndGlyphs" fill="#d6d6d6"  stroke="#d6d6d6" stroke-width="0.3">Plane 2 Fit</text>
<rect x="440.6" y="534.0" width="299.4" height="428.0" fill="#242428" />
<rect x="749.0" y="534.0" width="299.0" height="428.0" fill="#242428" />
<rect x="443.0" y="601.7" width="292.7" height="290.7" fill="#030303" />
<rect x="752.0" y="601.7" width="291.0" height="290.7" fill="#030303" />
<radialGradient id="sp1" cx="595.2" cy="738.8" r="130" gradientUnits="userSpaceOnUse"><stop offset="0.000" stop-color="#c5c5c5"/><stop offset="0.071" stop-color="#8c8c8c"/><stop offset="0.143" stop-color="#3e3e3e"/><stop offset="0.214" stop-color="#1f1f1f"/><stop offset="0.286" stop-color="#141414"/><stop offset="0.357" stop-color="#0e0e0e"/><stop offset="0.429" stop-color="#0a0a0a"/><stop offset="0.500" stop-color="#070707"/><stop offset="0.571" stop-color="#060606"/><stop offset="0.643" stop-color="#050505"/><stop offset="0.714" stop-color="#040404"/><stop offset="0.786" stop-color="#040404"/><stop offset="0.857" stop-color="#040404"/><stop offset="0.929" stop-color="#030303"/><stop offset="1.000" stop-color="#030303"/></radialGradient><circle cx="595.2" cy="738.8" r="130" fill="url(#sp1)"/><radialGradient id="sp2" cx="903.8" cy="740" r="135" gradientUnits="userSpaceOnUse"><stop offset="0.000" stop-color="#e5e5e5"/><stop offset="0.071" stop-color="#a5a5a5"/><stop offset="0.143" stop-color="#494949"/><stop offset="0.214" stop-color="#222222"/><stop offset="0.286" stop-color="#151515"/><stop offset="0.357" stop-color="#0e0e0e"/><stop offset="0.429" stop-color="#0a0a0a"/><stop offset="0.500" stop-color="#080808"/><stop offset="0.571" stop-color="#060606"/><stop offset="0.643" stop-color="#050505"/><stop offset="0.714" stop-color="#050505"/><stop offset="0.786" stop-color="#040404"/><stop offset="0.857" stop-color="#040404"/><stop offset="0.929" stop-color="#040404"/><stop offset="1.000" stop-color="#030303"/></radialGradient><circle cx="903.8" cy="740" r="135" fill="url(#sp2)"/><g filter="url(#b1)"><rect x="582.0" y="703.4" width="7.6" height="7.6" fill="#181818"/><rect x="589.4" y="703.4" width="7.6" height="7.6" fill="#191919"/><rect x="596.7" y="703.4" width="7.6" height="7.6" fill="#191919"/><rect x="604.0" y="703.4" width="7.6" height="7.6" fill="#171717"/><rect x="567.4" y="710.7" width="7.6" height="7.6" fill="#171717"/><rect x="574.7" y="710.7" width="7.6" height="7.6" fill="#1c1c1c"/><rect x="582.0" y="710.7" width="7.6" height="7.6" fill="#222222"/><rect x="589.4" y="710.7" width="7.6" height="7.6" fill="#262626"/><rect x="596.7" y="710.7" width="7.6" height="7.6" fill="#252525"/><rect x="604.0" y="710.7" width="7.6" height="7.6" fill="#202020"/><rect x="611.3" y="710.7" width="7.6" height="7.6" fill="#1a1a1a"/><rect x="567.4" y="718.0" width="7.6" height="7.6" fill="#1c1c1c"/><rect x="574.7" y="718.0" width="7.6" height="7.6" fill="#272727"/><rect x="582.0" y="718.0" width="7.6" height="7.6" fill="#383838"/><rect x="589.4" y="718.0" width="7.6" height="7.6" fill="#464646"/><rect x="596.7" y="718.0" width="7.6" height="7.6" fill="#424242"/><rect x="604.0" y="718.0" width="7.6" height="7.6" fill="#313131"/><rect x="611.3" y="718.0" width="7.6" height="7.6" fill="#222222"/><rect x="618.6" y="718.0" width="7.6" height="7.6" fill="#191919"/><rect x="560.1" y="725.2" width="7.6" height="7.6" fill="#181818"/><rect x="567.4" y="725.2" width="7.6" height="7.6" fill="#222222"/><rect x="574.7" y="725.2" width="7.6" height="7.6" fill="#393939"/><rect x="582.0" y="725.2" width="7.6" height="7.6" fill="#616161"/><rect x="589.4" y="725.2" width="7.6" height="7.6" fill="#838383"/><rect x="596.7" y="725.2" width="7.6" height="7.6" fill="#797979"/><rect x="604.0" y="725.2" width="7.6" height="7.6" fill="#505050"/><rect x="611.3" y="725.2" width="7.6" height="7.6" fill="#2e2e2e"/><rect x="618.6" y="725.2" width="7.6" height="7.6" fill="#1d1d1d"/><rect x="560.1" y="732.5" width="7.6" height="7.6" fill="#1a1a1a"/><rect x="567.4" y="732.5" width="7.6" height="7.6" fill="#272727"/><rect x="574.7" y="732.5" width="7.6" height="7.6" fill="#484848"/><rect x="582.0" y="732.5" width="7.6" height="7.6" fill="#868686"/><rect x="589.4" y="732.5" width="7.6" height="7.6" fill="#bcbcbc"/><rect x="596.7" y="732.5" width="7.6" height="7.6" fill="#acacac"/><rect x="604.0" y="732.5" width="7.6" height="7.6" fill="#6b6b6b"/><rect x="611.3" y="732.5" width="7.6" height="7.6" fill="#373737"/><rect x="618.6" y="732.5" width="7.6" height="7.6" fill="#202020"/><rect x="625.9" y="732.5" width="7.6" height="7.6" fill="#161616"/><rect x="560.1" y="739.8" width="7.6" height="7.6" fill="#191919"/><rect x="567.4" y="739.8" width="7.6" height="7.6" fill="#262626"/><rect x="574.7" y="739.8" width="7.6" height="7.6" fill="#454545"/><rect x="582.0" y="739.8" width="7.6" height="7.6" fill="#7f7f7f"/><rect x="589.4" y="739.8" width="7.6" height="7.6" fill="#b1b1b1"/><rect x="596.7" y="739.8" width="7.6" height="7.6" fill="#a3a3a3"/><rect x="604.0" y="739.8" width="7.6" height="7.6" fill="#666666"/><rect x="611.3" y="739.8" width="7.6" height="7.6" fill="#353535"/><rect x="618.6" y="739.8" width="7.6" height="7.6" fill="#202020"/><rect x="625.9" y="739.8" width="7.6" height="7.6" fill="#161616"/><rect x="560.1" y="747.0" width="7.6" height="7.6" fill="#171717"/><rect x="567.4" y="747.0" width="7.6" height="7.6" fill="#212121"/><rect x="574.7" y="747.0" width="7.6" height="7.6" fill="#343434"/><rect x="582.0" y="747.0" width="7.6" height="7.6" fill="#555555"/><rect x="589.4" y="747.0" width="7.6" height="7.6" fill="#717171"/><rect x="596.7" y="747.0" width="7.6" height="7.6" fill="#696969"/><rect x="604.0" y="747.0" width="7.6" height="7.6" fill="#464646"/><rect x="611.3" y="747.0" width="7.6" height="7.6" fill="#2a2a2a"/><rect x="618.6" y="747.0" width="7.6" height="7.6" fill="#1c1c1c"/><rect x="567.4" y="754.3" width="7.6" height="7.6" fill="#1a1a1a"/><rect x="574.7" y="754.3" width="7.6" height="7.6" fill="#242424"/><rect x="582.0" y="754.3" width="7.6" height="7.6" fill="#303030"/><rect x="589.4" y="754.3" width="7.6" height="7.6" fill="#3a3a3a"/><rect x="596.7" y="754.3" width="7.6" height="7.6" fill="#373737"/><rect x="604.0" y="754.3" width="7.6" height="7.6" fill="#2b2b2b"/><rect x="611.3" y="754.3" width="7.6" height="7.6" fill="#1f1f1f"/><rect x="618.6" y="754.3" width="7.6" height="7.6" fill="#181818"/><rect x="574.7" y="761.6" width="7.6" height="7.6" fill="#1a1a1a"/><rect x="582.0" y="761.6" width="7.6" height="7.6" fill="#1e1e1e"/><rect x="589.4" y="761.6" width="7.6" height="7.6" fill="#212121"/><rect x="596.7" y="761.6" width="7.6" height="7.6" fill="#212121"/><rect x="604.0" y="761.6" width="7.6" height="7.6" fill="#1d1d1d"/><rect x="611.3" y="761.6" width="7.6" height="7.6" fill="#181818"/><rect x="582.0" y="768.9" width="7.6" height="7.6" fill="#161616"/><rect x="589.4" y="768.9" width="7.6" height="7.6" fill="#171717"/><rect x="596.7" y="768.9" width="7.6" height="7.6" fill="#171717"/><rect x="883.0" y="703.4" width="7.6" height="7.6" fill="#161616"/><rect x="890.2" y="703.4" width="7.6" height="7.6" fill="#191919"/><rect x="897.5" y="703.4" width="7.6" height="7.6" fill="#1b1b1b"/><rect x="904.8" y="703.4" width="7.6" height="7.6" fill="#1b1b1b"/><rect x="912.0" y="703.4" width="7.6" height="7.6" fill="#191919"/><rect x="875.7" y="710.7" width="7.6" height="7.6" fill="#181818"/><rect x="883.0" y="710.7" width="7.6" height="7.6" fill="#1e1e1e"/><rect x="890.2" y="710.7" width="7.6" height="7.6" fill="#252525"/><rect x="897.5" y="710.7" width="7.6" height="7.6" fill="#2a2a2a"/><rect x="904.8" y="710.7" width="7.6" height="7.6" fill="#292929"/><rect x="912.0" y="710.7" width="7.6" height="7.6" fill="#232323"/><rect x="919.3" y="710.7" width="7.6" height="7.6" fill="#1c1c1c"/><rect x="926.6" y="710.7" width="7.6" height="7.6" fill="#171717"/><rect x="868.4" y="718.0" width="7.6" height="7.6" fill="#171717"/><rect x="875.7" y="718.0" width="7.6" height="7.6" fill="#1f1f1f"/><rect x="883.0" y="718.0" width="7.6" height="7.6" fill="#2c2c2c"/><rect x="890.2" y="718.0" width="7.6" height="7.6" fill="#3f3f3f"/><rect x="897.5" y="718.0" width="7.6" height="7.6" fill="#4e4e4e"/><rect x="904.8" y="718.0" width="7.6" height="7.6" fill="#4b4b4b"/><rect x="912.0" y="718.0" width="7.6" height="7.6" fill="#3a3a3a"/><rect x="919.3" y="718.0" width="7.6" height="7.6" fill="#282828"/><rect x="926.6" y="718.0" width="7.6" height="7.6" fill="#1c1c1c"/><rect x="868.4" y="725.2" width="7.6" height="7.6" fill="#1a1a1a"/><rect x="875.7" y="725.2" width="7.6" height="7.6" fill="#272727"/><rect x="883.0" y="725.2" width="7.6" height="7.6" fill="#414141"/><rect x="890.2" y="725.2" width="7.6" height="7.6" fill="#6d6d6d"/><rect x="897.5" y="725.2" width="7.6" height="7.6" fill="#929292"/><rect x="904.8" y="725.2" width="7.6" height="7.6" fill="#8b8b8b"/><rect x="912.0" y="725.2" width="7.6" height="7.6" fill="#616161"/><rect x="919.3" y="725.2" width="7.6" height="7.6" fill="#383838"/><rect x="926.6" y="725.2" width="7.6" height="7.6" fill="#222222"/><rect x="933.9" y="725.2" width="7.6" height="7.6" fill="#181818"/><rect x="868.4" y="732.5" width="7.6" height="7.6" fill="#1c1c1c"/><rect x="875.7" y="732.5" width="7.6" height="7.6" fill="#2d2d2d"/><rect x="883.0" y="732.5" width="7.6" height="7.6" fill="#555555"/><rect x="890.2" y="732.5" width="7.6" height="7.6" fill="#9a9a9a"/><rect x="897.5" y="732.5" width="7.6" height="7.6" fill="#d4d4d4"/><rect x="904.8" y="732.5" width="7.6" height="7.6" fill="#c9c9c9"/><rect x="912.0" y="732.5" width="7.6" height="7.6" fill="#868686"/><rect x="919.3" y="732.5" width="7.6" height="7.6" fill="#474747"/><rect x="926.6" y="732.5" width="7.6" height="7.6" fill="#272727"/><rect x="933.9" y="732.5" width="7.6" height="7.6" fill="#1a1a1a"/><rect x="868.4" y="739.8" width="7.6" height="7.6" fill="#1c1c1c"/><rect x="875.7" y="739.8" width="7.6" height="7.6" fill="#2d2d2d"/><rect x="883.0" y="739.8" width="7.6" height="7.6" fill="#565656"/><rect x="890.2" y="739.8" width="7.6" height="7.6" fill="#9c9c9c"/><rect x="897.5" y="739.8" width="7.6" height="7.6" fill="#d6d6d6"/><rect x="904.8" y="739.8" width="7.6" height="7.6" fill="#cbcbcb"/><rect x="912.0" y="739.8" width="7.6" height="7.6" fill="#888888"/><rect x="919.3" y="739.8" width="7.6" height="7.6" fill="#484848"/><rect x="926.6" y="739.8" width="7.6" height="7.6" fill="#272727"/><rect x="933.9" y="739.8" width="7.6" height="7.6" fill="#1a1a1a"/><rect x="868.4" y="747.0" width="7.6" height="7.6" fill="#1a1a1a"/><rect x="875.7" y="747.0" width="7.6" height="7.6" fill="#272727"/><rect x="883.0" y="747.0" width="7.6" height="7.6" fill="#434343"/><rect x="890.2" y="747.0" width="7.6" height="7.6" fill="#717171"/><rect x="897.5" y="747.0" width="7.6" height="7.6" fill="#969696"/><rect x="904.8" y="747.0" width="7.6" height="7.6" fill="#8f8f8f"/><rect x="912.0" y="747.0" width="7.6" height="7.6" fill="#636363"/><rect x="919.3" y="747.0" width="7.6" height="7.6" fill="#393939"/><rect x="926.6" y="747.0" width="7.6" height="7.6" fill="#232323"/><rect x="933.9" y="747.0" width="7.6" height="7.6" fill="#181818"/><rect x="868.4" y="754.3" width="7.6" height="7.6" fill="#171717"/><rect x="875.7" y="754.3" width="7.6" height="7.6" fill="#1f1f1f"/><rect x="883.0" y="754.3" width="7.6" height="7.6" fill="#2d2d2d"/><rect x="890.2" y="754.3" width="7.6" height="7.6" fill="#414141"/><rect x="897.5" y="754.3" width="7.6" height="7.6" fill="#515151"/><rect x="904.8" y="754.3" width="7.6" height="7.6" fill="#4e4e4e"/><rect x="912.0" y="754.3" width="7.6" height="7.6" fill="#3b3b3b"/><rect x="919.3" y="754.3" width="7.6" height="7.6" fill="#282828"/><rect x="926.6" y="754.3" width="7.6" height="7.6" fill="#1c1c1c"/><rect x="875.7" y="761.6" width="7.6" height="7.6" fill="#181818"/><rect x="883.0" y="761.6" width="7.6" height="7.6" fill="#1f1f1f"/><rect x="890.2" y="761.6" width="7.6" height="7.6" fill="#262626"/><rect x="897.5" y="761.6" width="7.6" height="7.6" fill="#2b2b2b"/><rect x="904.8" y="761.6" width="7.6" height="7.6" fill="#2a2a2a"/><rect x="912.0" y="761.6" width="7.6" height="7.6" fill="#242424"/><rect x="919.3" y="761.6" width="7.6" height="7.6" fill="#1d1d1d"/><rect x="926.6" y="761.6" width="7.6" height="7.6" fill="#171717"/><rect x="883.0" y="768.9" width="7.6" height="7.6" fill="#171717"/><rect x="890.2" y="768.9" width="7.6" height="7.6" fill="#1a1a1a"/><rect x="897.5" y="768.9" width="7.6" height="7.6" fill="#1c1c1c"/><rect x="904.8" y="768.9" width="7.6" height="7.6" fill="#1b1b1b"/><rect x="912.0" y="768.9" width="7.6" height="7.6" fill="#191919"/><rect x="919.3" y="768.9" width="7.6" height="7.6" fill="#161616"/></g>
<text x="537.8" y="987.9" font-size="18" font-weight="bold" textLength="106.0" lengthAdjust="spacingAndGlyphs" fill="#ececec" >Plane 1 (XY)</text>
<text x="845.0" y="987.9" font-size="18" font-weight="bold" textLength="106.6" lengthAdjust="spacingAndGlyphs" fill="#ececec" >Plane 2 (XY)</text>
<rect x="10.5" y="1059.5" width="1053.5" height="942.0" fill="#222226" />
<linearGradient id="shT" x1="0" y1="0" x2="0" y2="1"><stop offset="0" stop-color="#000" stop-opacity="0.55"/><stop offset="1" stop-color="#000" stop-opacity="0"/></linearGradient>
<linearGradient id="shB" x1="0" y1="1" x2="0" y2="0"><stop offset="0" stop-color="#000" stop-opacity="0.45"/><stop offset="1" stop-color="#000" stop-opacity="0"/></linearGradient>
<linearGradient id="shL" x1="0" y1="0" x2="1" y2="0"><stop offset="0" stop-color="#000" stop-opacity="0.5"/><stop offset="1" stop-color="#000" stop-opacity="0"/></linearGradient>
<linearGradient id="shR" x1="1" y1="0" x2="0" y2="0"><stop offset="0" stop-color="#000" stop-opacity="0.5"/><stop offset="1" stop-color="#000" stop-opacity="0"/></linearGradient>
<rect x="10.5" y="1059.5" width="1053.5" height="26.0" fill="url(#shT)" />
<rect x="10.5" y="1979.5" width="1053.5" height="22.0" fill="url(#shB)" />
<rect x="10.5" y="1059.5" width="23.5" height="942.0" fill="url(#shL)" />
<rect x="1040.0" y="1059.5" width="24.0" height="942.0" fill="url(#shR)" />
<rect x="11.5" y="1060.5" width="1051.5" height="940.0" fill="none" stroke="#131316" stroke-width="2"/>
<rect x="10.5" y="1059.5" width="2.2" height="942.0" fill="#10244f" />
<line x1="30.0" y1="1098.0" x2="433.0" y2="1098.0" stroke="#2d2d32" stroke-width="1.3" />
<line x1="33.0" y1="1126.0" x2="430.0" y2="1126.0" stroke="#2d2d32" stroke-width="1.3" />
<line x1="35.0" y1="1464.0" x2="427.0" y2="1464.0" stroke="#2d2d32" stroke-width="1.3" />
<line x1="35.0" y1="1700.5" x2="427.0" y2="1700.5" stroke="#2d2d32" stroke-width="1.3" />
<text x="34.5" y="1119.9" font-size="18" font-weight="bold" textLength="80.0" lengthAdjust="spacingAndGlyphs" fill="#e8e8e8" >Statistics</text>
<text x="44.5" y="1153.1" font-size="17" textLength="100.0" lengthAdjust="spacingAndGlyphs" fill="#d6d6d6"  stroke="#d6d6d6" stroke-width="0.3">PSF Channel:</text>
<text x="417.0" y="1153.1" font-size="17" text-anchor="end" fill="#d6d6d6"  stroke="#d6d6d6" stroke-width="0.3">Color 1</text>
<text x="44.5" y="1176.6" font-size="17" textLength="60.5" lengthAdjust="spacingAndGlyphs" fill="#d6d6d6"  stroke="#d6d6d6" stroke-width="0.3">Plane 1:</text>
<text x="57.5" y="1200.1" font-size="17" textLength="104.5" lengthAdjust="spacingAndGlyphs" fill="#d6d6d6"  stroke="#d6d6d6" stroke-width="0.3">Peak position:</text>
<text x="417.0" y="1200.1" font-size="17" text-anchor="end" fill="#d6d6d6"  stroke="#d6d6d6" stroke-width="0.3">1599 nm</text>
<text x="57.5" y="1224.1" font-size="17" textLength="146.5" lengthAdjust="spacingAndGlyphs" fill="#d6d6d6"  stroke="#d6d6d6" stroke-width="0.3">Standard deviation:</text>
<text x="417.0" y="1224.1" font-size="17" text-anchor="end" fill="#d6d6d6"  stroke="#d6d6d6" stroke-width="0.3">123 nm</text>
<text x="57.5" y="1247.6" font-size="17" textLength="53.5" lengthAdjust="spacingAndGlyphs" fill="#d6d6d6"  stroke="#d6d6d6" stroke-width="0.3">FWHM:</text>
<text x="417.0" y="1247.6" font-size="17" text-anchor="end" fill="#d6d6d6"  stroke="#d6d6d6" stroke-width="0.3">291 nm</text>
<text x="57.5" y="1271.6" font-size="17" textLength="107.5" lengthAdjust="spacingAndGlyphs" fill="#d6d6d6"  stroke="#d6d6d6" stroke-width="0.3">Peak intensity:</text>
<text x="417.0" y="1271.6" font-size="17" text-anchor="end" fill="#d6d6d6"  stroke="#d6d6d6" stroke-width="0.3">0.779038</text>
<text x="44.5" y="1295.1" font-size="17" textLength="60.5" lengthAdjust="spacingAndGlyphs" fill="#d6d6d6"  stroke="#d6d6d6" stroke-width="0.3">Plane 2:</text>
<text x="57.5" y="1319.1" font-size="17" textLength="104.5" lengthAdjust="spacingAndGlyphs" fill="#d6d6d6"  stroke="#d6d6d6" stroke-width="0.3">Peak position:</text>
<text x="417.0" y="1319.1" font-size="17" text-anchor="end" fill="#d6d6d6"  stroke="#d6d6d6" stroke-width="0.3">1597 nm</text>
<text x="57.5" y="1342.6" font-size="17" textLength="146.5" lengthAdjust="spacingAndGlyphs" fill="#d6d6d6"  stroke="#d6d6d6" stroke-width="0.3">Standard deviation:</text>
<text x="417.0" y="1342.6" font-size="17" text-anchor="end" fill="#d6d6d6"  stroke="#d6d6d6" stroke-width="0.3">127 nm</text>
<text x="62.0" y="1365.6" font-size="17" textLength="55.0" lengthAdjust="spacingAndGlyphs" fill="#d6d6d6"  stroke="#d6d6d6" stroke-width="0.3">FWHM:</text>
<text x="417.0" y="1365.6" font-size="17" text-anchor="end" fill="#d6d6d6"  stroke="#d6d6d6" stroke-width="0.3">300 nm</text>
<text x="57.5" y="1389.6" font-size="17" textLength="107.5" lengthAdjust="spacingAndGlyphs" fill="#d6d6d6"  stroke="#d6d6d6" stroke-width="0.3">Peak intensity:</text>
<text x="417.0" y="1389.6" font-size="17" text-anchor="end" fill="#d6d6d6"  stroke="#d6d6d6" stroke-width="0.3">1.01165</text>
<text x="44.5" y="1413.6" font-size="17" textLength="186.5" lengthAdjust="spacingAndGlyphs" fill="#d6d6d6"  stroke="#d6d6d6" stroke-width="0.3">Distance between peaks:</text>
<text x="417.0" y="1413.6" font-size="17" text-anchor="end" fill="#d6d6d6"  stroke="#d6d6d6" stroke-width="0.3">1 nm</text>
<text x="35.0" y="1455.9" font-size="18" font-weight="bold" textLength="130.0" lengthAdjust="spacingAndGlyphs" fill="#e8e8e8" >Display Options</text>
<text x="44.5" y="1495.6" font-size="17" textLength="34.5" lengthAdjust="spacingAndGlyphs" fill="#d6d6d6"  stroke="#d6d6d6" stroke-width="0.3">PSF:</text>
<rect x="157.5" y="1474.5" width="259.5" height="29.5" fill="#3b3b41" />
<text x="163.0" y="1495.6" font-size="17" textLength="56.0" lengthAdjust="spacingAndGlyphs" fill="#d6d6d6"  stroke="#d6d6d6" stroke-width="0.3">Orange</text>
<path d="M399.8 1487.0 h8.6 l-4.3 4.6z" fill="#c8c8c8"/>
<text x="44.5" y="1528.6" font-size="17" textLength="71.0" lengthAdjust="spacingAndGlyphs" fill="#d6d6d6"  stroke="#d6d6d6" stroke-width="0.3">PSF type:</text>
<circle cx="179.5" cy="1522.0" r="8" fill="#1d1d20" stroke="#303034" stroke-width="1.3"/>
<circle cx="179.5" cy="1522.0" r="3.6" fill="#c4c4c4"/>
<text x="196.0" y="1528.6" font-size="17" textLength="74.0" lengthAdjust="spacingAndGlyphs" fill="#d6d6d6"  stroke="#d6d6d6" stroke-width="0.3">Measured</text>
<circle cx="303.5" cy="1522.0" r="8" fill="#1d1d20" stroke="#303034" stroke-width="1.3"/>
<text x="321.0" y="1528.6" font-size="17" textLength="68.0" lengthAdjust="spacingAndGlyphs" fill="#d6d6d6"  stroke="#d6d6d6" stroke-width="0.3">Standard</text>
<text x="44.5" y="1559.6" font-size="17" textLength="42.5" lengthAdjust="spacingAndGlyphs" fill="#d6d6d6"  stroke="#d6d6d6" stroke-width="0.3">View:</text>
<circle cx="147.5" cy="1554.0" r="8" fill="#1d1d20" stroke="#303034" stroke-width="1.3"/>
<circle cx="147.5" cy="1554.0" r="3.6" fill="#c4c4c4"/>
<text x="164.0" y="1559.6" font-size="17" textLength="20.5" lengthAdjust="spacingAndGlyphs" fill="#d6d6d6"  stroke="#d6d6d6" stroke-width="0.3">YZ</text>
<circle cx="241.0" cy="1554.0" r="8" fill="#1d1d20" stroke="#303034" stroke-width="1.3"/>
<text x="258.5" y="1559.6" font-size="17" textLength="20.5" lengthAdjust="spacingAndGlyphs" fill="#d6d6d6"  stroke="#d6d6d6" stroke-width="0.3">XZ</text>
<circle cx="334.5" cy="1554.0" r="8" fill="#1d1d20" stroke="#303034" stroke-width="1.3"/>
<text x="352.0" y="1559.6" font-size="17" textLength="20.5" lengthAdjust="spacingAndGlyphs" fill="#d6d6d6"  stroke="#d6d6d6" stroke-width="0.3">XY</text>
<text x="44.5" y="1587.1" font-size="17" textLength="41.0" lengthAdjust="spacingAndGlyphs" fill="#d6d6d6"  stroke="#d6d6d6" stroke-width="0.3">Slice:</text>
<line x1="265.0" y1="1580.0" x2="414.5" y2="1580.0" stroke="#38383d" stroke-width="3" />
<line x1="91.0" y1="1580.0" x2="251.0" y2="1580.0" stroke="#2f62b4" stroke-width="4.5" />
<rect x="251.0" y="1573.5" width="14.0" height="13.5" fill="#5a5a60" rx="2"/>
<rect x="44.5" y="1600.0" width="17.5" height="17.0" fill="#1f1f22" stroke="#38383c" stroke-width="1.3"/>
<text x="69.5" y="1615.1" font-size="17" textLength="250.5" lengthAdjust="spacingAndGlyphs" fill="#d6d6d6"  stroke="#d6d6d6" stroke-width="0.3">Show PSF center for current slice</text>
<rect x="44.5" y="1630.0" width="17.5" height="17.0" fill="#1f1f22" stroke="#38383c" stroke-width="1.3"/>
<text x="69.5" y="1645.6" font-size="17" textLength="134.0" lengthAdjust="spacingAndGlyphs" fill="#d6d6d6"  stroke="#d6d6d6" stroke-width="0.3">Normalize images</text>
<text x="35.0" y="1692.9" font-size="18" font-weight="bold" textLength="58.5" lengthAdjust="spacingAndGlyphs" fill="#e8e8e8" >Quality</text>
<text x="145.5" y="1729.6" font-size="17" font-weight="bold" textLength="65.5" lengthAdjust="spacingAndGlyphs" fill="#ececec" >Z FWHM</text>
<text x="250.0" y="1729.6" font-size="17" font-weight="bold" textLength="40.0" lengthAdjust="spacingAndGlyphs" fill="#ececec" >Z Tilt</text>
<text x="357.5" y="1729.6" font-size="17" font-weight="bold" textLength="32.5" lengthAdjust="spacingAndGlyphs" fill="#ececec" >SNR</text>
<rect x="391.5" y="1711.5" width="25.5" height="23.5" fill="#3b3b41" />
<text x="404.3" y="1729.6" font-size="17" font-weight="bold" text-anchor="middle" fill="#e0e0e0" >?</text>
<text x="44.5" y="1755.9" font-size="18" font-weight="bold" textLength="61.0" lengthAdjust="spacingAndGlyphs" fill="#ececec" >Orange</text>
<text x="44.5" y="1825.9" font-size="18" font-weight="bold" textLength="31.5" lengthAdjust="spacingAndGlyphs" fill="#ececec" >Red</text>
<text x="65.0" y="1779.6" font-size="17" textLength="61.0" lengthAdjust="spacingAndGlyphs" fill="#d6d6d6"  stroke="#d6d6d6" stroke-width="0.3">Plane 1:</text>
<text x="145.5" y="1779.6" font-size="17" textLength="89.5" lengthAdjust="spacingAndGlyphs" fill="#63c41f"  stroke="#63c41f" stroke-width="0.3">730.594 nm</text>
<text x="250.0" y="1779.6" font-size="17" textLength="92.0" lengthAdjust="spacingAndGlyphs" fill="#63c41f"  stroke="#63c41f" stroke-width="0.3">0.771187 px</text>
<text x="357.5" y="1779.6" font-size="17" textLength="59.5" lengthAdjust="spacingAndGlyphs" fill="#63c41f"  stroke="#63c41f" stroke-width="0.3">424.851</text>
<text x="65.0" y="1802.6" font-size="17" textLength="61.0" lengthAdjust="spacingAndGlyphs" fill="#d6d6d6"  stroke="#d6d6d6" stroke-width="0.3">Plane 2:</text>
<text x="145.5" y="1802.6" font-size="17" textLength="89.5" lengthAdjust="spacingAndGlyphs" fill="#63c41f"  stroke="#63c41f" stroke-width="0.3">698.073 nm</text>
<text x="250.0" y="1802.6" font-size="17" textLength="92.0" lengthAdjust="spacingAndGlyphs" fill="#63c41f"  stroke="#63c41f" stroke-width="0.3">0.744099 px</text>
<text x="357.5" y="1802.6" font-size="17" textLength="59.5" lengthAdjust="spacingAndGlyphs" fill="#63c41f"  stroke="#63c41f" stroke-width="0.3">510.785</text>
<text x="65.0" y="1850.1" font-size="17" textLength="61.0" lengthAdjust="spacingAndGlyphs" fill="#d6d6d6"  stroke="#d6d6d6" stroke-width="0.3">Plane 1:</text>
<text x="145.5" y="1850.1" font-size="17" textLength="89.5" lengthAdjust="spacingAndGlyphs" fill="#63c41f"  stroke="#63c41f" stroke-width="0.3">805.551 nm</text>
<text x="250.0" y="1850.1" font-size="17" textLength="92.0" lengthAdjust="spacingAndGlyphs" fill="#63c41f"  stroke="#63c41f" stroke-width="0.3">0.660145 px</text>
<text x="357.5" y="1850.1" font-size="17" textLength="59.5" lengthAdjust="spacingAndGlyphs" fill="#63c41f"  stroke="#63c41f" stroke-width="0.3">332.071</text>
<text x="65.0" y="1873.1" font-size="17" textLength="61.0" lengthAdjust="spacingAndGlyphs" fill="#d6d6d6"  stroke="#d6d6d6" stroke-width="0.3">Plane 2:</text>
<text x="145.5" y="1873.1" font-size="17" textLength="89.5" lengthAdjust="spacingAndGlyphs" fill="#63c41f"  stroke="#63c41f" stroke-width="0.3">777.646 nm</text>
<text x="250.0" y="1873.1" font-size="17" textLength="92.0" lengthAdjust="spacingAndGlyphs" fill="#63c41f"  stroke="#63c41f" stroke-width="0.3">0.607668 px</text>
<text x="357.5" y="1873.1" font-size="17" textLength="50.5" lengthAdjust="spacingAndGlyphs" fill="#63c41f"  stroke="#63c41f" stroke-width="0.3">327.28</text>
<text x="44.5" y="1897.4" font-size="18" font-weight="bold" textLength="84.0" lengthAdjust="spacingAndGlyphs" fill="#ececec" >Summary:</text>
<text x="145.0" y="1897.1" font-size="17" textLength="38.0" lengthAdjust="spacingAndGlyphs" fill="#63c41f"  stroke="#63c41f" stroke-width="0.3">Good</text>
<text x="643.5" y="1095.6" font-size="26" font-weight="bold" textLength="167.0" lengthAdjust="spacingAndGlyphs" fill="#f2f2f2" >PSF Intensity</text>
<line x1="516.0" y1="1399.4" x2="920.5" y2="1399.4" stroke="#828282" stroke-width="1.5" stroke-dasharray="2.6 3.2"/>
<line x1="516.0" y1="1335.3" x2="920.5" y2="1335.3" stroke="#828282" stroke-width="1.5" stroke-dasharray="2.6 3.2"/>
<line x1="516.0" y1="1271.1" x2="920.5" y2="1271.1" stroke="#828282" stroke-width="1.5" stroke-dasharray="2.6 3.2"/>
<line x1="516.0" y1="1207.0" x2="920.5" y2="1207.0" stroke="#828282" stroke-width="1.5" stroke-dasharray="2.6 3.2"/>
<line x1="516.0" y1="1142.9" x2="920.5" y2="1142.9" stroke="#828282" stroke-width="1.5" stroke-dasharray="2.6 3.2"/>
<clipPath id="clip1004"><rect x="515.0" y="1110.0" width="405.5" height="354.5"/></clipPath>
<g clip-path="url(#clip1004)" fill="none" stroke-linejoin="round">
<path d="M515.0,1460.3 L516.7,1460.3 L518.5,1460.3 L520.2,1460.3 L521.9,1460.3 L523.7,1460.3 L525.4,1460.3 L527.1,1460.3 L528.9,1460.3 L530.6,1460.3 L532.3,1460.3 L534.1,1460.3 L535.8,1460.3 L537.5,1460.3 L539.3,1460.3 L541.0,1460.3 L542.7,1460.3 L544.5,1460.3 L546.2,1460.3 L547.9,1460.3 L549.6,1460.3 L551.4,1460.3 L553.1,1460.3 L554.8,1460.3 L556.6,1460.3 L558.3,1460.3 L560.0,1460.3 L561.8,1460.3 L563.5,1460.3 L565.2,1460.3 L567.0,1460.3 L568.7,1460.3 L570.4,1460.3 L572.2,1460.3 L573.9,1460.3 L575.6,1460.3 L577.4,1460.3 L579.1,1460.3 L580.8,1460.3 L582.6,1460.3 L584.3,1460.3 L586.0,1460.3 L587.8,1460.3 L589.5,1460.3 L591.2,1460.3 L593.0,1460.3 L594.7,1460.3 L596.4,1460.3 L598.2,1460.3 L599.9,1460.3 L601.6,1460.3 L603.4,1460.3 L605.1,1460.3 L606.8,1460.3 L608.6,1460.3 L610.3,1460.3 L612.0,1460.3 L613.8,1460.3 L615.5,1460.3 L617.2,1460.3 L619.0,1460.3 L620.7,1460.3 L622.4,1460.3 L624.1,1460.3 L625.9,1460.3 L627.6,1460.3 L629.3,1460.3 L631.1,1460.3 L632.8,1460.3 L634.5,1460.3 L636.3,1460.3 L638.0,1460.3 L639.7,1460.3 L641.5,1460.2 L643.2,1460.2 L644.9,1460.2 L646.7,1460.1 L648.4,1460.0 L650.1,1459.8 L651.9,1459.5 L653.6,1459.1 L655.3,1458.6 L657.1,1457.7 L658.8,1456.6 L660.5,1455.1 L662.3,1453.0 L664.0,1450.3 L665.7,1446.8 L667.5,1442.2 L669.2,1436.5 L670.9,1429.5 L672.7,1421.1 L674.4,1411.0 L676.1,1399.3 L677.9,1385.9 L679.6,1371.0 L681.3,1354.7 L683.1,1337.3 L684.8,1319.1 L686.5,1300.8 L688.2,1282.7 L690.0,1265.5 L691.7,1249.9 L693.4,1236.5 L695.2,1225.7 L696.9,1218.2 L698.6,1214.1 L700.4,1213.7 L702.1,1217.1 L703.8,1223.9 L705.6,1234.1 L707.3,1247.0 L709.0,1262.3 L710.8,1279.2 L712.5,1297.1 L714.2,1315.5 L716.0,1333.7 L717.7,1351.3 L719.4,1367.9 L721.2,1383.1 L722.9,1396.8 L724.6,1408.8 L726.4,1419.2 L728.1,1428.0 L729.8,1435.3 L731.6,1441.2 L733.3,1445.9 L735.0,1449.7 L736.8,1452.5 L738.5,1454.7 L740.2,1456.4 L742.0,1457.6 L743.7,1458.4 L745.4,1459.0 L747.2,1459.4 L748.9,1459.7 L750.6,1459.9 L752.4,1460.1 L754.1,1460.2 L755.8,1460.2 L757.5,1460.2 L759.3,1460.3 L761.0,1460.3 L762.7,1460.3 L764.5,1460.3 L766.2,1460.3 L767.9,1460.3 L769.7,1460.3 L771.4,1460.3 L773.1,1460.3 L774.9,1460.3 L776.6,1460.3 L778.3,1460.3 L780.1,1460.3 L781.8,1460.3 L783.5,1460.3 L785.3,1460.3 L787.0,1460.3 L788.7,1460.3 L790.5,1460.3 L792.2,1460.3 L793.9,1460.3 L795.7,1460.3 L797.4,1460.3 L799.1,1460.3 L800.9,1460.3 L802.6,1460.3 L804.3,1460.3 L806.1,1460.3 L807.8,1460.3 L809.5,1460.3 L811.3,1460.3 L813.0,1460.3 L814.7,1460.3 L816.5,1460.3 L818.2,1460.3 L819.9,1460.3 L821.7,1460.3 L823.4,1460.3 L825.1,1460.3 L826.9,1460.3 L828.6,1460.3 L830.3,1460.3 L832.0,1460.3 L833.8,1460.3 L835.5,1460.3 L837.2,1460.3 L839.0,1460.3 L840.7,1460.3 L842.4,1460.3 L844.2,1460.3 L845.9,1460.3 L847.6,1460.3 L849.4,1460.3 L851.1,1460.3 L852.8,1460.3 L854.6,1460.3 L856.3,1460.3 L858.0,1460.3 L859.8,1460.3 L861.5,1460.3 L863.2,1460.3 L865.0,1460.3 L866.7,1460.3 L868.4,1460.3" stroke="#1f4682" stroke-width="2.0"/>
<path d="M516.4,1460.9 L524.8,1460.9 L533.2,1460.9 L541.6,1460.9 L550.0,1460.9 L558.4,1460.9 L566.8,1460.9 L575.2,1460.9 L583.6,1460.9 L592.0,1460.9 L600.4,1460.9 L608.8,1460.9 L617.1,1460.6 L625.5,1459.5 L633.9,1456.8 L642.3,1452.8 L650.7,1449.2 L659.1,1446.1 L667.5,1434.2 L675.9,1395.1 L684.3,1320.2 L692.7,1240.0 L701.1,1213.7 L709.5,1264.6 L717.9,1350.4 L726.3,1416.8 L734.7,1448.4 L743.1,1458.4 L751.5,1460.6 L759.9,1460.9 L768.3,1460.9 L776.7,1460.9 L785.1,1460.9 L793.5,1460.9 L801.9,1460.9 L810.3,1460.9 L818.7,1460.9 L827.1,1460.9 L835.5,1460.9 L843.9,1460.9 L852.3,1460.9 L860.7,1460.9 L869.1,1460.9" stroke="#2d5da8" stroke-width="2.0"/>
<path d="M515.0,1457.7 L516.7,1457.7 L518.5,1457.7 L520.2,1457.7 L521.9,1457.7 L523.7,1457.7 L525.4,1457.7 L527.1,1457.7 L528.9,1457.7 L530.6,1457.7 L532.3,1457.7 L534.1,1457.7 L535.8,1457.7 L537.5,1457.7 L539.3,1457.7 L541.0,1457.7 L542.7,1457.7 L544.5,1457.7 L546.2,1457.7 L547.9,1457.7 L549.6,1457.7 L551.4,1457.7 L553.1,1457.7 L554.8,1457.7 L556.6,1457.7 L558.3,1457.7 L560.0,1457.7 L561.8,1457.7 L563.5,1457.7 L565.2,1457.7 L567.0,1457.7 L568.7,1457.7 L570.4,1457.7 L572.2,1457.7 L573.9,1457.7 L575.6,1457.7 L577.4,1457.7 L579.1,1457.7 L580.8,1457.7 L582.6,1457.7 L584.3,1457.7 L586.0,1457.7 L587.8,1457.7 L589.5,1457.7 L591.2,1457.7 L593.0,1457.7 L594.7,1457.7 L596.4,1457.7 L598.2,1457.7 L599.9,1457.7 L601.6,1457.7 L603.4,1457.7 L605.1,1457.7 L606.8,1457.7 L608.6,1457.7 L610.3,1457.7 L612.0,1457.7 L613.8,1457.7 L615.5,1457.7 L617.2,1457.7 L619.0,1457.7 L620.7,1457.7 L622.4,1457.7 L624.1,1457.7 L625.9,1457.7 L627.6,1457.7 L629.3,1457.7 L631.1,1457.7 L632.8,1457.7 L634.5,1457.7 L636.3,1457.7 L638.0,1457.6 L639.7,1457.6 L641.5,1457.5 L643.2,1457.4 L644.9,1457.2 L646.7,1457.0 L648.4,1456.6 L650.1,1456.1 L651.9,1455.4 L653.6,1454.5 L655.3,1453.2 L657.1,1451.4 L658.8,1449.1 L660.5,1446.0 L662.3,1442.1 L664.0,1437.2 L665.7,1431.0 L667.5,1423.4 L669.2,1414.3 L670.9,1403.5 L672.7,1390.9 L674.4,1376.4 L676.1,1360.1 L677.9,1342.0 L679.6,1322.3 L681.3,1301.4 L683.1,1279.6 L684.8,1257.3 L686.5,1235.3 L688.2,1214.0 L690.0,1194.2 L691.7,1176.4 L693.4,1161.4 L695.2,1149.7 L696.9,1141.6 L698.6,1137.6 L700.4,1137.7 L702.1,1142.0 L703.8,1150.3 L705.6,1162.3 L707.3,1177.5 L709.0,1195.4 L710.8,1215.4 L712.5,1236.7 L714.2,1258.8 L716.0,1281.0 L717.7,1302.8 L719.4,1323.7 L721.2,1343.2 L722.9,1361.2 L724.6,1377.4 L726.4,1391.8 L728.1,1404.3 L729.8,1415.0 L731.6,1424.0 L733.3,1431.4 L735.0,1437.5 L736.8,1442.4 L738.5,1446.2 L740.2,1449.2 L742.0,1451.5 L743.7,1453.3 L745.4,1454.6 L747.2,1455.5 L748.9,1456.2 L750.6,1456.7 L752.4,1457.0 L754.1,1457.3 L755.8,1457.4 L757.5,1457.5 L759.3,1457.6 L761.0,1457.6 L762.7,1457.7 L764.5,1457.7 L766.2,1457.7 L767.9,1457.7 L769.7,1457.7 L771.4,1457.7 L773.1,1457.7 L774.9,1457.7 L776.6,1457.7 L778.3,1457.7 L780.1,1457.7 L781.8,1457.7 L783.5,1457.7 L785.3,1457.7 L787.0,1457.7 L788.7,1457.7 L790.5,1457.7 L792.2,1457.7 L793.9,1457.7 L795.7,1457.7 L797.4,1457.7 L799.1,1457.7 L800.9,1457.7 L802.6,1457.7 L804.3,1457.7 L806.1,1457.7 L807.8,1457.7 L809.5,1457.7 L811.3,1457.7 L813.0,1457.7 L814.7,1457.7 L816.5,1457.7 L818.2,1457.7 L819.9,1457.7 L821.7,1457.7 L823.4,1457.7 L825.1,1457.7 L826.9,1457.7 L828.6,1457.7 L830.3,1457.7 L832.0,1457.7 L833.8,1457.7 L835.5,1457.7 L837.2,1457.7 L839.0,1457.7 L840.7,1457.7 L842.4,1457.7 L844.2,1457.7 L845.9,1457.7 L847.6,1457.7 L849.4,1457.7 L851.1,1457.7 L852.8,1457.7 L854.6,1457.7 L856.3,1457.7 L858.0,1457.7 L859.8,1457.7 L861.5,1457.7 L863.2,1457.7 L865.0,1457.7 L866.7,1457.7 L868.4,1457.7" stroke="#4a9e1c" stroke-width="2.4"/>
<path d="M516.4,1459.7 L524.8,1459.7 L533.2,1459.7 L541.6,1459.7 L550.0,1459.7 L558.4,1459.7 L566.8,1459.7 L575.2,1459.7 L583.6,1459.7 L592.0,1459.7 L600.4,1459.7 L608.8,1459.6 L617.1,1459.6 L625.5,1459.2 L633.9,1457.8 L642.3,1454.6 L650.7,1449.7 L659.1,1442.3 L667.5,1421.3 L675.9,1365.2 L684.3,1266.9 L692.7,1167.6 L701.1,1137.9 L709.5,1202.8 L717.9,1311.1 L726.3,1397.4 L734.7,1440.8 L743.1,1455.5 L751.5,1459.0 L759.9,1459.6 L768.3,1459.6 L776.7,1459.7 L785.1,1459.7 L793.5,1459.7 L801.9,1459.7 L810.3,1459.7 L818.7,1459.7 L827.1,1459.7 L835.5,1459.7 L843.9,1459.7 L852.3,1459.7 L860.7,1459.7 L869.1,1459.7" stroke="#6ed321" stroke-width="2.4"/>
</g>
<line x1="699.0" y1="1109.0" x2="699.0" y2="1465.5" stroke="#7a7a7a" stroke-width="1.4" />
<rect x="515.0" y="1110.0" width="405.5" height="354.5" fill="none" stroke="#d9d9d9" stroke-width="2.6"/>
<line x1="508.5" y1="1110.0" x2="508.5" y2="1464.5" stroke="#c8c8c8" stroke-width="1.6" />
<line x1="498.7" y1="1463.5" x2="509.0" y2="1463.5" stroke="#d8d8d8" stroke-width="2.2" />
<line x1="503.5" y1="1447.5" x2="509.0" y2="1447.5" stroke="#bdbdbd" stroke-width="1.6" />
<line x1="503.5" y1="1431.4" x2="509.0" y2="1431.4" stroke="#bdbdbd" stroke-width="1.6" />
<line x1="503.5" y1="1415.4" x2="509.0" y2="1415.4" stroke="#bdbdbd" stroke-width="1.6" />
<line x1="498.7" y1="1399.4" x2="509.0" y2="1399.4" stroke="#d8d8d8" stroke-width="2.2" />
<line x1="503.5" y1="1383.3" x2="509.0" y2="1383.3" stroke="#bdbdbd" stroke-width="1.6" />
<line x1="503.5" y1="1367.3" x2="509.0" y2="1367.3" stroke="#bdbdbd" stroke-width="1.6" />
<line x1="503.5" y1="1351.3" x2="509.0" y2="1351.3" stroke="#bdbdbd" stroke-width="1.6" />
<line x1="498.7" y1="1335.3" x2="509.0" y2="1335.3" stroke="#d8d8d8" stroke-width="2.2" />
<line x1="503.5" y1="1319.2" x2="509.0" y2="1319.2" stroke="#bdbdbd" stroke-width="1.6" />
<line x1="503.5" y1="1303.2" x2="509.0" y2="1303.2" stroke="#bdbdbd" stroke-width="1.6" />
<line x1="503.5" y1="1287.2" x2="509.0" y2="1287.2" stroke="#bdbdbd" stroke-width="1.6" />
<line x1="498.7" y1="1271.1" x2="509.0" y2="1271.1" stroke="#d8d8d8" stroke-width="2.2" />
<line x1="503.5" y1="1255.1" x2="509.0" y2="1255.1" stroke="#bdbdbd" stroke-width="1.6" />
<line x1="503.5" y1="1239.1" x2="509.0" y2="1239.1" stroke="#bdbdbd" stroke-width="1.6" />
<line x1="503.5" y1="1223.0" x2="509.0" y2="1223.0" stroke="#bdbdbd" stroke-width="1.6" />
<line x1="498.7" y1="1207.0" x2="509.0" y2="1207.0" stroke="#d8d8d8" stroke-width="2.2" />
<line x1="503.5" y1="1191.0" x2="509.0" y2="1191.0" stroke="#bdbdbd" stroke-width="1.6" />
<line x1="503.5" y1="1175.0" x2="509.0" y2="1175.0" stroke="#bdbdbd" stroke-width="1.6" />
<line x1="503.5" y1="1158.9" x2="509.0" y2="1158.9" stroke="#bdbdbd" stroke-width="1.6" />
<line x1="498.7" y1="1142.9" x2="509.0" y2="1142.9" stroke="#d8d8d8" stroke-width="2.2" />
<line x1="503.5" y1="1126.9" x2="509.0" y2="1126.9" stroke="#bdbdbd" stroke-width="1.6" />
<line x1="503.5" y1="1110.8" x2="509.0" y2="1110.8" stroke="#bdbdbd" stroke-width="1.6" />
<text x="491.5" y="1469.1" font-size="17" text-anchor="end" fill="#d6d6d6"  stroke="#d6d6d6" stroke-width="0.3">0</text>
<text x="491.5" y="1405.0" font-size="17" text-anchor="end" fill="#d6d6d6"  stroke="#d6d6d6" stroke-width="0.3">0.2</text>
<text x="491.5" y="1340.9" font-size="17" text-anchor="end" fill="#d6d6d6"  stroke="#d6d6d6" stroke-width="0.3">0.4</text>
<text x="491.5" y="1276.7" font-size="17" text-anchor="end" fill="#d6d6d6"  stroke="#d6d6d6" stroke-width="0.3">0.6</text>
<text x="491.5" y="1212.6" font-size="17" text-anchor="end" fill="#d6d6d6"  stroke="#d6d6d6" stroke-width="0.3">0.8</text>
<text x="491.5" y="1148.5" font-size="17" text-anchor="end" fill="#d6d6d6"  stroke="#d6d6d6" stroke-width="0.3">1</text>
<text transform="translate(461.9,1289.0) rotate(-90)" font-size="21" font-weight="bold" text-anchor="middle" textLength="95" lengthAdjust="spacingAndGlyphs" fill="#f2f2f2">Intensity</text>
<line x1="514.5" y1="1472.0" x2="920.2" y2="1472.0" stroke="#d8d8d8" stroke-width="2" />
<line x1="515.0" y1="1472.0" x2="515.0" y2="1480.5" stroke="#d8d8d8" stroke-width="2" />
<text x="515.0" y="1500.6" font-size="17" text-anchor="middle" fill="#d6d6d6"  stroke="#d6d6d6" stroke-width="0.3">0</text>
<line x1="526.5" y1="1472.0" x2="526.5" y2="1475.5" stroke="#c0c0c0" stroke-width="1.5" />
<line x1="538.1" y1="1472.0" x2="538.1" y2="1475.5" stroke="#c0c0c0" stroke-width="1.5" />
<line x1="549.6" y1="1472.0" x2="549.6" y2="1475.5" stroke="#c0c0c0" stroke-width="1.5" />
<line x1="561.2" y1="1472.0" x2="561.2" y2="1475.5" stroke="#c0c0c0" stroke-width="1.5" />
<line x1="572.8" y1="1472.0" x2="572.8" y2="1480.5" stroke="#d8d8d8" stroke-width="2" />
<text x="572.8" y="1500.6" font-size="17" text-anchor="middle" fill="#d6d6d6"  stroke="#d6d6d6" stroke-width="0.3">500</text>
<line x1="584.3" y1="1472.0" x2="584.3" y2="1475.5" stroke="#c0c0c0" stroke-width="1.5" />
<line x1="595.9" y1="1472.0" x2="595.9" y2="1475.5" stroke="#c0c0c0" stroke-width="1.5" />
<line x1="607.4" y1="1472.0" x2="607.4" y2="1475.5" stroke="#c0c0c0" stroke-width="1.5" />
<line x1="619.0" y1="1472.0" x2="619.0" y2="1475.5" stroke="#c0c0c0" stroke-width="1.5" />
<line x1="630.5" y1="1472.0" x2="630.5" y2="1480.5" stroke="#d8d8d8" stroke-width="2" />
<text x="630.5" y="1500.6" font-size="17" text-anchor="middle" fill="#d6d6d6"  stroke="#d6d6d6" stroke-width="0.3">1,000</text>
<line x1="642.0" y1="1472.0" x2="642.0" y2="1475.5" stroke="#c0c0c0" stroke-width="1.5" />
<line x1="653.6" y1="1472.0" x2="653.6" y2="1475.5" stroke="#c0c0c0" stroke-width="1.5" />
<line x1="665.1" y1="1472.0" x2="665.1" y2="1475.5" stroke="#c0c0c0" stroke-width="1.5" />
<line x1="676.7" y1="1472.0" x2="676.7" y2="1475.5" stroke="#c0c0c0" stroke-width="1.5" />
<line x1="688.2" y1="1472.0" x2="688.2" y2="1480.5" stroke="#d8d8d8" stroke-width="2" />
<text x="688.2" y="1500.6" font-size="17" text-anchor="middle" fill="#d6d6d6"  stroke="#d6d6d6" stroke-width="0.3">1,500</text>
<line x1="699.8" y1="1472.0" x2="699.8" y2="1475.5" stroke="#c0c0c0" stroke-width="1.5" />
<line x1="711.4" y1="1472.0" x2="711.4" y2="1475.5" stroke="#c0c0c0" stroke-width="1.5" />
<line x1="722.9" y1="1472.0" x2="722.9" y2="1475.5" stroke="#c0c0c0" stroke-width="1.5" />
<line x1="734.5" y1="1472.0" x2="734.5" y2="1475.5" stroke="#c0c0c0" stroke-width="1.5" />
<line x1="746.0" y1="1472.0" x2="746.0" y2="1480.5" stroke="#d8d8d8" stroke-width="2" />
<text x="746.0" y="1500.6" font-size="17" text-anchor="middle" fill="#d6d6d6"  stroke="#d6d6d6" stroke-width="0.3">2,000</text>
<line x1="757.5" y1="1472.0" x2="757.5" y2="1475.5" stroke="#c0c0c0" stroke-width="1.5" />
<line x1="769.1" y1="1472.0" x2="769.1" y2="1475.5" stroke="#c0c0c0" stroke-width="1.5" />
<line x1="780.7" y1="1472.0" x2="780.7" y2="1475.5" stroke="#c0c0c0" stroke-width="1.5" />
<line x1="792.2" y1="1472.0" x2="792.2" y2="1475.5" stroke="#c0c0c0" stroke-width="1.5" />
<line x1="803.8" y1="1472.0" x2="803.8" y2="1480.5" stroke="#d8d8d8" stroke-width="2" />
<text x="803.8" y="1500.6" font-size="17" text-anchor="middle" fill="#d6d6d6"  stroke="#d6d6d6" stroke-width="0.3">2,500</text>
<line x1="815.3" y1="1472.0" x2="815.3" y2="1475.5" stroke="#c0c0c0" stroke-width="1.5" />
<line x1="826.9" y1="1472.0" x2="826.9" y2="1475.5" stroke="#c0c0c0" stroke-width="1.5" />
<line x1="838.4" y1="1472.0" x2="838.4" y2="1475.5" stroke="#c0c0c0" stroke-width="1.5" />
<line x1="850.0" y1="1472.0" x2="850.0" y2="1475.5" stroke="#c0c0c0" stroke-width="1.5" />
<line x1="861.5" y1="1472.0" x2="861.5" y2="1480.5" stroke="#d8d8d8" stroke-width="2" />
<text x="861.5" y="1500.6" font-size="17" text-anchor="middle" fill="#d6d6d6"  stroke="#d6d6d6" stroke-width="0.3">3,000</text>
<line x1="873.0" y1="1472.0" x2="873.0" y2="1475.5" stroke="#c0c0c0" stroke-width="1.5" />
<line x1="884.6" y1="1472.0" x2="884.6" y2="1475.5" stroke="#c0c0c0" stroke-width="1.5" />
<line x1="896.2" y1="1472.0" x2="896.2" y2="1475.5" stroke="#c0c0c0" stroke-width="1.5" />
<line x1="907.7" y1="1472.0" x2="907.7" y2="1475.5" stroke="#c0c0c0" stroke-width="1.5" />
<line x1="919.2" y1="1472.0" x2="919.2" y2="1480.5" stroke="#d8d8d8" stroke-width="2" />
<text x="919.2" y="1500.6" font-size="17" text-anchor="middle" fill="#d6d6d6"  stroke="#d6d6d6" stroke-width="0.3">3,500</text>
<text x="633.8" y="1525.6" font-size="23" font-weight="bold" textLength="167.2" lengthAdjust="spacingAndGlyphs" fill="#f2f2f2" >X-Position (nm)</text>
<rect x="949.0" y="1115.5" width="11.0" height="11.0" fill="#3b74d6" />
<text x="967.0" y="1127.1" font-size="17" textLength="54.0" lengthAdjust="spacingAndGlyphs" fill="#d6d6d6"  stroke="#d6d6d6" stroke-width="0.3">Plane 1</text>
<rect x="949.0" y="1149.9" width="11.0" height="11.0" fill="#1f3f7c" />
<text x="967.0" y="1161.5" font-size="17" textLength="78.5" lengthAdjust="spacingAndGlyphs" fill="#d6d6d6"  stroke="#d6d6d6" stroke-width="0.3">Plane 1 Fit</text>
<rect x="949.0" y="1184.3" width="11.0" height="11.0" fill="#7df02c" />
<text x="967.0" y="1195.9" font-size="17" textLength="54.0" lengthAdjust="spacingAndGlyphs" fill="#d6d6d6"  stroke="#d6d6d6" stroke-width="0.3">Plane 2</text>
<rect x="949.0" y="1218.7" width="11.0" height="11.0" fill="#4b9c1c" />
<text x="967.0" y="1230.3" font-size="17" textLength="78.5" lengthAdjust="spacingAndGlyphs" fill="#d6d6d6"  stroke="#d6d6d6" stroke-width="0.3">Plane 2 Fit</text>
<rect x="440.6" y="1537.0" width="299.4" height="429.0" fill="#242428" />
<rect x="749.0" y="1537.0" width="299.0" height="429.0" fill="#242428" />
<rect x="443.0" y="1565.0" width="292.7" height="373.6" fill="#060606" />
<rect x="752.0" y="1565.0" width="291.0" height="373.6" fill="#060606" />
<clipPath id="ci1"><rect x="443" y="1565" width="292.7" height="373.6"/></clipPath><clipPath id="ci2"><rect x="752" y="1565" width="291" height="373.6"/></clipPath><g clip-path="url(#ci1)" filter="url(#b9)" stroke="#ffffff" stroke-opacity="0.022" stroke-width="46" fill="none"><path d="M597 1770 L407 2070"/><path d="M597 1770 L787 2070"/><path d="M597 1700 L600 1635" stroke-width="26"/></g><g clip-path="url(#ci2)" filter="url(#b9)" stroke="#ffffff" stroke-opacity="0.022" stroke-width="46" fill="none"><path d="M904 1830 L714 2130"/><path d="M904 1830 L1094 2130"/><path d="M904 1760 L907 1695" stroke-width="26"/></g><g filter="url(#b1)"><rect x="596.7" y="1609.0" width="7.6" height="7.6" fill="#0a0a0a"/><rect x="589.4" y="1616.3" width="7.6" height="7.6" fill="#0a0a0a"/><rect x="596.7" y="1616.3" width="7.6" height="7.6" fill="#0c0c0c"/><rect x="589.4" y="1623.6" width="7.6" height="7.6" fill="#0b0b0b"/><rect x="596.7" y="1623.6" width="7.6" height="7.6" fill="#0e0e0e"/><rect x="604.0" y="1623.6" width="7.6" height="7.6" fill="#0b0b0b"/><rect x="589.4" y="1630.9" width="7.6" height="7.6" fill="#0d0d0d"/><rect x="596.7" y="1630.9" width="7.6" height="7.6" fill="#101010"/><rect x="604.0" y="1630.9" width="7.6" height="7.6" fill="#0c0c0c"/><rect x="589.4" y="1638.3" width="7.6" height="7.6" fill="#0f0f0f"/><rect x="596.7" y="1638.3" width="7.6" height="7.6" fill="#131313"/><rect x="604.0" y="1638.3" width="7.6" height="7.6" fill="#0e0e0e"/><rect x="589.4" y="1645.6" width="7.6" height="7.6" fill="#101010"/><rect x="596.7" y="1645.6" width="7.6" height="7.6" fill="#151515"/><rect x="604.0" y="1645.6" width="7.6" height="7.6" fill="#0f0f0f"/><rect x="582.0" y="1652.9" width="7.6" height="7.6" fill="#0a0a0a"/><rect x="589.4" y="1652.9" width="7.6" height="7.6" fill="#121212"/><rect x="596.7" y="1652.9" width="7.6" height="7.6" fill="#171717"/><rect x="604.0" y="1652.9" width="7.6" height="7.6" fill="#101010"/><rect x="582.0" y="1660.2" width="7.6" height="7.6" fill="#0b0b0b"/><rect x="589.4" y="1660.2" width="7.6" height="7.6" fill="#141414"/><rect x="596.7" y="1660.2" width="7.6" height="7.6" fill="#191919"/><rect x="604.0" y="1660.2" width="7.6" height="7.6" fill="#111111"/><rect x="582.0" y="1667.6" width="7.6" height="7.6" fill="#0d0d0d"/><rect x="589.4" y="1667.6" width="7.6" height="7.6" fill="#191919"/><rect x="596.7" y="1667.6" width="7.6" height="7.6" fill="#1e1e1e"/><rect x="604.0" y="1667.6" width="7.6" height="7.6" fill="#131313"/><rect x="611.3" y="1667.6" width="7.6" height="7.6" fill="#0a0a0a"/><rect x="582.0" y="1674.9" width="7.6" height="7.6" fill="#101010"/><rect x="589.4" y="1674.9" width="7.6" height="7.6" fill="#222222"/><rect x="596.7" y="1674.9" width="7.6" height="7.6" fill="#282828"/><rect x="604.0" y="1674.9" width="7.6" height="7.6" fill="#171717"/><rect x="611.3" y="1674.9" width="7.6" height="7.6" fill="#0b0b0b"/><rect x="574.7" y="1682.2" width="7.6" height="7.6" fill="#0a0a0a"/><rect x="582.0" y="1682.2" width="7.6" height="7.6" fill="#141414"/><rect x="589.4" y="1682.2" width="7.6" height="7.6" fill="#313131"/><rect x="596.7" y="1682.2" width="7.6" height="7.6" fill="#393939"/><rect x="604.0" y="1682.2" width="7.6" height="7.6" fill="#1d1d1d"/><rect x="611.3" y="1682.2" width="7.6" height="7.6" fill="#0c0c0c"/><rect x="574.7" y="1689.5" width="7.6" height="7.6" fill="#0b0b0b"/><rect x="582.0" y="1689.5" width="7.6" height="7.6" fill="#1a1a1a"/><rect x="589.4" y="1689.5" width="7.6" height="7.6" fill="#484848"/><rect x="596.7" y="1689.5" width="7.6" height="7.6" fill="#545454"/><rect x="604.0" y="1689.5" width="7.6" height="7.6" fill="#262626"/><rect x="611.3" y="1689.5" width="7.6" height="7.6" fill="#0e0e0e"/><rect x="574.7" y="1696.9" width="7.6" height="7.6" fill="#0c0c0c"/><rect x="582.0" y="1696.9" width="7.6" height="7.6" fill="#222222"/><rect x="589.4" y="1696.9" width="7.6" height="7.6" fill="#666666"/><rect x="596.7" y="1696.9" width="7.6" height="7.6" fill="#787878"/><rect x="604.0" y="1696.9" width="7.6" height="7.6" fill="#323232"/><rect x="611.3" y="1696.9" width="7.6" height="7.6" fill="#101010"/><rect x="574.7" y="1704.2" width="7.6" height="7.6" fill="#0e0e0e"/><rect x="582.0" y="1704.2" width="7.6" height="7.6" fill="#2a2a2a"/><rect x="589.4" y="1704.2" width="7.6" height="7.6" fill="#888888"/><rect x="596.7" y="1704.2" width="7.6" height="7.6" fill="#a1a1a1"/><rect x="604.0" y="1704.2" width="7.6" height="7.6" fill="#3f3f3f"/><rect x="611.3" y="1704.2" width="7.6" height="7.6" fill="#121212"/><rect x="574.7" y="1711.5" width="7.6" height="7.6" fill="#0f0f0f"/><rect x="582.0" y="1711.5" width="7.6" height="7.6" fill="#323232"/><rect x="589.4" y="1711.5" width="7.6" height="7.6" fill="#a7a7a7"/><rect x="596.7" y="1711.5" width="7.6" height="7.6" fill="#c5c5c5"/><rect x="604.0" y="1711.5" width="7.6" height="7.6" fill="#4c4c4c"/><rect x="611.3" y="1711.5" width="7.6" height="7.6" fill="#131313"/><rect x="618.6" y="1711.5" width="7.6" height="7.6" fill="#0a0a0a"/><rect x="574.7" y="1718.8" width="7.6" height="7.6" fill="#0f0f0f"/><rect x="582.0" y="1718.8" width="7.6" height="7.6" fill="#363636"/><rect x="589.4" y="1718.8" width="7.6" height="7.6" fill="#bababa"/><rect x="596.7" y="1718.8" width="7.6" height="7.6" fill="#dcdcdc"/><rect x="604.0" y="1718.8" width="7.6" height="7.6" fill="#535353"/><rect x="611.3" y="1718.8" width="7.6" height="7.6" fill="#141414"/><rect x="618.6" y="1718.8" width="7.6" height="7.6" fill="#0a0a0a"/><rect x="574.7" y="1726.2" width="7.6" height="7.6" fill="#0f0f0f"/><rect x="582.0" y="1726.2" width="7.6" height="7.6" fill="#373737"/><rect x="589.4" y="1726.2" width="7.6" height="7.6" fill="#bcbcbc"/><rect x="596.7" y="1726.2" width="7.6" height="7.6" fill="#dedede"/><rect x="604.0" y="1726.2" width="7.6" height="7.6" fill="#545454"/><rect x="611.3" y="1726.2" width="7.6" height="7.6" fill="#141414"/><rect x="618.6" y="1726.2" width="7.6" height="7.6" fill="#0a0a0a"/><rect x="574.7" y="1733.5" width="7.6" height="7.6" fill="#0f0f0f"/><rect x="582.0" y="1733.5" width="7.6" height="7.6" fill="#333333"/><rect x="589.4" y="1733.5" width="7.6" height="7.6" fill="#acacac"/><rect x="596.7" y="1733.5" width="7.6" height="7.6" fill="#cbcbcb"/><rect x="604.0" y="1733.5" width="7.6" height="7.6" fill="#4d4d4d"/><rect x="611.3" y="1733.5" width="7.6" height="7.6" fill="#131313"/><rect x="618.6" y="1733.5" width="7.6" height="7.6" fill="#0a0a0a"/><rect x="574.7" y="1740.8" width="7.6" height="7.6" fill="#0e0e0e"/><rect x="582.0" y="1740.8" width="7.6" height="7.6" fill="#2c2c2c"/><rect x="589.4" y="1740.8" width="7.6" height="7.6" fill="#8e8e8e"/><rect x="596.7" y="1740.8" width="7.6" height="7.6" fill="#a8a8a8"/><rect x="604.0" y="1740.8" width="7.6" height="7.6" fill="#414141"/><rect x="611.3" y="1740.8" width="7.6" height="7.6" fill="#121212"/><rect x="574.7" y="1748.1" width="7.6" height="7.6" fill="#0d0d0d"/><rect x="582.0" y="1748.1" width="7.6" height="7.6" fill="#232323"/><rect x="589.4" y="1748.1" width="7.6" height="7.6" fill="#6b6b6b"/><rect x="596.7" y="1748.1" width="7.6" height="7.6" fill="#7e7e7e"/><rect x="604.0" y="1748.1" width="7.6" height="7.6" fill="#333333"/><rect x="611.3" y="1748.1" width="7.6" height="7.6" fill="#101010"/><rect x="574.7" y="1755.5" width="7.6" height="7.6" fill="#0b0b0b"/><rect x="582.0" y="1755.5" width="7.6" height="7.6" fill="#1b1b1b"/><rect x="589.4" y="1755.5" width="7.6" height="7.6" fill="#4a4a4a"/><rect x="596.7" y="1755.5" width="7.6" height="7.6" fill="#575757"/><rect x="604.0" y="1755.5" width="7.6" height="7.6" fill="#252525"/><rect x="611.3" y="1755.5" width="7.6" height="7.6" fill="#0d0d0d"/><rect x="574.7" y="1762.8" width="7.6" height="7.6" fill="#0a0a0a"/><rect x="582.0" y="1762.8" width="7.6" height="7.6" fill="#141414"/><rect x="589.4" y="1762.8" width="7.6" height="7.6" fill="#303030"/><rect x="596.7" y="1762.8" width="7.6" height="7.6" fill="#383838"/><rect x="604.0" y="1762.8" width="7.6" height="7.6" fill="#1a1a1a"/><rect x="611.3" y="1762.8" width="7.6" height="7.6" fill="#0b0b0b"/><rect x="582.0" y="1770.1" width="7.6" height="7.6" fill="#0f0f0f"/><rect x="589.4" y="1770.1" width="7.6" height="7.6" fill="#1e1e1e"/><rect x="596.7" y="1770.1" width="7.6" height="7.6" fill="#222222"/><rect x="604.0" y="1770.1" width="7.6" height="7.6" fill="#121212"/><rect x="611.3" y="1770.1" width="7.6" height="7.6" fill="#0a0a0a"/><rect x="582.0" y="1777.4" width="7.6" height="7.6" fill="#0b0b0b"/><rect x="589.4" y="1777.4" width="7.6" height="7.6" fill="#131313"/><rect x="596.7" y="1777.4" width="7.6" height="7.6" fill="#151515"/><rect x="604.0" y="1777.4" width="7.6" height="7.6" fill="#0d0d0d"/><rect x="589.4" y="1784.8" width="7.6" height="7.6" fill="#0c0c0c"/><rect x="596.7" y="1784.8" width="7.6" height="7.6" fill="#0d0d0d"/><rect x="604.0" y="1784.8" width="7.6" height="7.6" fill="#0a0a0a"/><rect x="904.8" y="1667.6" width="7.6" height="7.6" fill="#0b0b0b"/><rect x="897.5" y="1674.9" width="7.6" height="7.6" fill="#0b0b0b"/><rect x="904.8" y="1674.9" width="7.6" height="7.6" fill="#0d0d0d"/><rect x="912.0" y="1674.9" width="7.6" height="7.6" fill="#0a0a0a"/><rect x="897.5" y="1682.2" width="7.6" height="7.6" fill="#0c0c0c"/><rect x="904.8" y="1682.2" width="7.6" height="7.6" fill="#0f0f0f"/><rect x="912.0" y="1682.2" width="7.6" height="7.6" fill="#0b0b0b"/><rect x="897.5" y="1689.5" width="7.6" height="7.6" fill="#0e0e0e"/><rect x="904.8" y="1689.5" width="7.6" height="7.6" fill="#111111"/><rect x="912.0" y="1689.5" width="7.6" height="7.6" fill="#0d0d0d"/><rect x="897.5" y="1696.9" width="7.6" height="7.6" fill="#0f0f0f"/><rect x="904.8" y="1696.9" width="7.6" height="7.6" fill="#131313"/><rect x="912.0" y="1696.9" width="7.6" height="7.6" fill="#0e0e0e"/><rect x="890.2" y="1704.2" width="7.6" height="7.6" fill="#0b0b0b"/><rect x="897.5" y="1704.2" width="7.6" height="7.6" fill="#111111"/><rect x="904.8" y="1704.2" width="7.6" height="7.6" fill="#151515"/><rect x="912.0" y="1704.2" width="7.6" height="7.6" fill="#0f0f0f"/><rect x="890.2" y="1711.5" width="7.6" height="7.6" fill="#0d0d0d"/><rect x="897.5" y="1711.5" width="7.6" height="7.6" fill="#151515"/><rect x="904.8" y="1711.5" width="7.6" height="7.6" fill="#181818"/><rect x="912.0" y="1711.5" width="7.6" height="7.6" fill="#111111"/><rect x="919.3" y="1711.5" width="7.6" height="7.6" fill="#0a0a0a"/><rect x="883.0" y="1718.8" width="7.6" height="7.6" fill="#0a0a0a"/><rect x="890.2" y="1718.8" width="7.6" height="7.6" fill="#111111"/><rect x="897.5" y="1718.8" width="7.6" height="7.6" fill="#1b1b1b"/><rect x="904.8" y="1718.8" width="7.6" height="7.6" fill="#1d1d1d"/><rect x="912.0" y="1718.8" width="7.6" height="7.6" fill="#141414"/><rect x="919.3" y="1718.8" width="7.6" height="7.6" fill="#0b0b0b"/><rect x="883.0" y="1726.2" width="7.6" height="7.6" fill="#0d0d0d"/><rect x="890.2" y="1726.2" width="7.6" height="7.6" fill="#181818"/><rect x="897.5" y="1726.2" width="7.6" height="7.6" fill="#272727"/><rect x="904.8" y="1726.2" width="7.6" height="7.6" fill="#282828"/><rect x="912.0" y="1726.2" width="7.6" height="7.6" fill="#191919"/><rect x="919.3" y="1726.2" width="7.6" height="7.6" fill="#0d0d0d"/><rect x="883.0" y="1733.5" width="7.6" height="7.6" fill="#101010"/><rect x="890.2" y="1733.5" width="7.6" height="7.6" fill="#232323"/><rect x="897.5" y="1733.5" width="7.6" height="7.6" fill="#3b3b3b"/><rect x="904.8" y="1733.5" width="7.6" height="7.6" fill="#3b3b3b"/><rect x="912.0" y="1733.5" width="7.6" height="7.6" fill="#222222"/><rect x="919.3" y="1733.5" width="7.6" height="7.6" fill="#101010"/><rect x="875.7" y="1740.8" width="7.6" height="7.6" fill="#0b0b0b"/><rect x="883.0" y="1740.8" width="7.6" height="7.6" fill="#151515"/><rect x="890.2" y="1740.8" width="7.6" height="7.6" fill="#333333"/><rect x="897.5" y="1740.8" width="7.6" height="7.6" fill="#5b5b5b"/><rect x="904.8" y="1740.8" width="7.6" height="7.6" fill="#595959"/><rect x="912.0" y="1740.8" width="7.6" height="7.6" fill="#303030"/><rect x="919.3" y="1740.8" width="7.6" height="7.6" fill="#141414"/><rect x="926.6" y="1740.8" width="7.6" height="7.6" fill="#0a0a0a"/><rect x="875.7" y="1748.1" width="7.6" height="7.6" fill="#0c0c0c"/><rect x="883.0" y="1748.1" width="7.6" height="7.6" fill="#1b1b1b"/><rect x="890.2" y="1748.1" width="7.6" height="7.6" fill="#4a4a4a"/><rect x="897.5" y="1748.1" width="7.6" height="7.6" fill="#878787"/><rect x="904.8" y="1748.1" width="7.6" height="7.6" fill="#838383"/><rect x="912.0" y="1748.1" width="7.6" height="7.6" fill="#434343"/><rect x="919.3" y="1748.1" width="7.6" height="7.6" fill="#181818"/><rect x="926.6" y="1748.1" width="7.6" height="7.6" fill="#0b0b0b"/><rect x="875.7" y="1755.5" width="7.6" height="7.6" fill="#0e0e0e"/><rect x="883.0" y="1755.5" width="7.6" height="7.6" fill="#222222"/><rect x="890.2" y="1755.5" width="7.6" height="7.6" fill="#656565"/><rect x="897.5" y="1755.5" width="7.6" height="7.6" fill="#bdbdbd"/><rect x="904.8" y="1755.5" width="7.6" height="7.6" fill="#b5b5b5"/><rect x="912.0" y="1755.5" width="7.6" height="7.6" fill="#5a5a5a"/><rect x="919.3" y="1755.5" width="7.6" height="7.6" fill="#1e1e1e"/><rect x="926.6" y="1755.5" width="7.6" height="7.6" fill="#0d0d0d"/><rect x="875.7" y="1762.8" width="7.6" height="7.6" fill="#0f0f0f"/><rect x="883.0" y="1762.8" width="7.6" height="7.6" fill="#292929"/><rect x="890.2" y="1762.8" width="7.6" height="7.6" fill="#808080"/><rect x="897.5" y="1762.8" width="7.6" height="7.6" fill="#f3f3f3"/><rect x="904.8" y="1762.8" width="7.6" height="7.6" fill="#e8e8e8"/><rect x="912.0" y="1762.8" width="7.6" height="7.6" fill="#727272"/><rect x="919.3" y="1762.8" width="7.6" height="7.6" fill="#242424"/><rect x="926.6" y="1762.8" width="7.6" height="7.6" fill="#0e0e0e"/><rect x="875.7" y="1770.1" width="7.6" height="7.6" fill="#101010"/><rect x="883.0" y="1770.1" width="7.6" height="7.6" fill="#2f2f2f"/><rect x="890.2" y="1770.1" width="7.6" height="7.6" fill="#969696"/><rect x="897.5" y="1770.1" width="7.6" height="7.6" fill="#ffffff"/><rect x="904.8" y="1770.1" width="7.6" height="7.6" fill="#ffffff"/><rect x="912.0" y="1770.1" width="7.6" height="7.6" fill="#848484"/><rect x="919.3" y="1770.1" width="7.6" height="7.6" fill="#282828"/><rect x="926.6" y="1770.1" width="7.6" height="7.6" fill="#0e0e0e"/><rect x="875.7" y="1777.4" width="7.6" height="7.6" fill="#101010"/><rect x="883.0" y="1777.4" width="7.6" height="7.6" fill="#323232"/><rect x="890.2" y="1777.4" width="7.6" height="7.6" fill="#a1a1a1"/><rect x="897.5" y="1777.4" width="7.6" height="7.6" fill="#ffffff"/><rect x="904.8" y="1777.4" width="7.6" height="7.6" fill="#ffffff"/><rect x="912.0" y="1777.4" width="7.6" height="7.6" fill="#8d8d8d"/><rect x="919.3" y="1777.4" width="7.6" height="7.6" fill="#2a2a2a"/><rect x="926.6" y="1777.4" width="7.6" height="7.6" fill="#0f0f0f"/><rect x="875.7" y="1784.8" width="7.6" height="7.6" fill="#101010"/><rect x="883.0" y="1784.8" width="7.6" height="7.6" fill="#313131"/><rect x="890.2" y="1784.8" width="7.6" height="7.6" fill="#9d9d9d"/><rect x="897.5" y="1784.8" width="7.6" height="7.6" fill="#ffffff"/><rect x="904.8" y="1784.8" width="7.6" height="7.6" fill="#ffffff"/><rect x="912.0" y="1784.8" width="7.6" height="7.6" fill="#8a8a8a"/><rect x="919.3" y="1784.8" width="7.6" height="7.6" fill="#292929"/><rect x="926.6" y="1784.8" width="7.6" height="7.6" fill="#0f0f0f"/><rect x="875.7" y="1792.1" width="7.6" height="7.6" fill="#0f0f0f"/><rect x="883.0" y="1792.1" width="7.6" height="7.6" fill="#2d2d2d"/><rect x="890.2" y="1792.1" width="7.6" height="7.6" fill="#8c8c8c"/><rect x="897.5" y="1792.1" width="7.6" height="7.6" fill="#ffffff"/><rect x="904.8" y="1792.1" width="7.6" height="7.6" fill="#ffffff"/><rect x="912.0" y="1792.1" width="7.6" height="7.6" fill="#7c7c7c"/><rect x="919.3" y="1792.1" width="7.6" height="7.6" fill="#262626"/><rect x="926.6" y="1792.1" width="7.6" height="7.6" fill="#0e0e0e"/><rect x="875.7" y="1799.4" width="7.6" height="7.6" fill="#0e0e0e"/><rect x="883.0" y="1799.4" width="7.6" height="7.6" fill="#262626"/><rect x="890.2" y="1799.4" width="7.6" height="7.6" fill="#737373"/><rect x="897.5" y="1799.4" width="7.6" height="7.6" fill="#d8d8d8"/><rect x="904.8" y="1799.4" width="7.6" height="7.6" fill="#cfcfcf"/><rect x="912.0" y="1799.4" width="7.6" height="7.6" fill="#666666"/><rect x="919.3" y="1799.4" width="7.6" height="7.6" fill="#212121"/><rect x="926.6" y="1799.4" width="7.6" height="7.6" fill="#0d0d0d"/><rect x="875.7" y="1806.7" width="7.6" height="7.6" fill="#0d0d0d"/><rect x="883.0" y="1806.7" width="7.6" height="7.6" fill="#1f1f1f"/><rect x="890.2" y="1806.7" width="7.6" height="7.6" fill="#575757"/><rect x="897.5" y="1806.7" width="7.6" height="7.6" fill="#a0a0a0"/><rect x="904.8" y="1806.7" width="7.6" height="7.6" fill="#999999"/><rect x="912.0" y="1806.7" width="7.6" height="7.6" fill="#4d4d4d"/><rect x="919.3" y="1806.7" width="7.6" height="7.6" fill="#1b1b1b"/><rect x="926.6" y="1806.7" width="7.6" height="7.6" fill="#0c0c0c"/><rect x="875.7" y="1814.1" width="7.6" height="7.6" fill="#0b0b0b"/><rect x="883.0" y="1814.1" width="7.6" height="7.6" fill="#181818"/><rect x="890.2" y="1814.1" width="7.6" height="7.6" fill="#3e3e3e"/><rect x="897.5" y="1814.1" width="7.6" height="7.6" fill="#6e6e6e"/><rect x="904.8" y="1814.1" width="7.6" height="7.6" fill="#696969"/><rect x="912.0" y="1814.1" width="7.6" height="7.6" fill="#373737"/><rect x="919.3" y="1814.1" width="7.6" height="7.6" fill="#151515"/><rect x="926.6" y="1814.1" width="7.6" height="7.6" fill="#0b0b0b"/><rect x="875.7" y="1821.4" width="7.6" height="7.6" fill="#0a0a0a"/><rect x="883.0" y="1821.4" width="7.6" height="7.6" fill="#121212"/><rect x="890.2" y="1821.4" width="7.6" height="7.6" fill="#292929"/><rect x="897.5" y="1821.4" width="7.6" height="7.6" fill="#464646"/><rect x="904.8" y="1821.4" width="7.6" height="7.6" fill="#444444"/><rect x="912.0" y="1821.4" width="7.6" height="7.6" fill="#252525"/><rect x="919.3" y="1821.4" width="7.6" height="7.6" fill="#111111"/><rect x="883.0" y="1828.7" width="7.6" height="7.6" fill="#0e0e0e"/><rect x="890.2" y="1828.7" width="7.6" height="7.6" fill="#1b1b1b"/><rect x="897.5" y="1828.7" width="7.6" height="7.6" fill="#2b2b2b"/><rect x="904.8" y="1828.7" width="7.6" height="7.6" fill="#292929"/><rect x="912.0" y="1828.7" width="7.6" height="7.6" fill="#191919"/><rect x="919.3" y="1828.7" width="7.6" height="7.6" fill="#0d0d0d"/><rect x="883.0" y="1836.0" width="7.6" height="7.6" fill="#0b0b0b"/><rect x="890.2" y="1836.0" width="7.6" height="7.6" fill="#121212"/><rect x="897.5" y="1836.0" width="7.6" height="7.6" fill="#1a1a1a"/><rect x="904.8" y="1836.0" width="7.6" height="7.6" fill="#191919"/><rect x="912.0" y="1836.0" width="7.6" height="7.6" fill="#111111"/><rect x="919.3" y="1836.0" width="7.6" height="7.6" fill="#0a0a0a"/><rect x="890.2" y="1843.4" width="7.6" height="7.6" fill="#0d0d0d"/><rect x="897.5" y="1843.4" width="7.6" height="7.6" fill="#101010"/><rect x="904.8" y="1843.4" width="7.6" height="7.6" fill="#101010"/><rect x="912.0" y="1843.4" width="7.6" height="7.6" fill="#0c0c0c"/><rect x="890.2" y="1850.7" width="7.6" height="7.6" fill="#0a0a0a"/><rect x="897.5" y="1850.7" width="7.6" height="7.6" fill="#0b0b0b"/><rect x="904.8" y="1850.7" width="7.6" height="7.6" fill="#0b0b0b"/></g>
<text x="540.0" y="1991.4" font-size="18" font-weight="bold" textLength="103.0" lengthAdjust="spacingAndGlyphs" fill="#ececec" >Plane 1 (YZ)</text>
<text x="847.8" y="1991.4" font-size="18" font-weight="bold" textLength="103.0" lengthAdjust="spacingAndGlyphs" fill="#ececec" >Plane 2 (YZ)</text>
<rect x="1128.0" y="54.5" width="2230.5" height="1607.5" fill="#222226" />
<rect x="1129" y="55.5" width="2228.5" height="1605.5" fill="none" stroke="#101012" stroke-width="2"/>
<rect x="1156.6" y="69.1" width="1092.3" height="1495.1" fill="#171717" stroke="#3f68ca" stroke-width="4.4"/>
<rect x="1160.6" y="274.5" width="1079.6" height="1080.2" fill="#000000" />
<g filter="url(#b1)">
<circle cx="1193" cy="319.2" r="1.94" fill="#a4c0f4" fill-opacity="0.9"/>
<circle cx="1190.4" cy="398.5" r="1.76" fill="#b4e6cf" fill-opacity="0.9"/>
<circle cx="1216.8" cy="453.2" r="1.76" fill="#b4e6cf" fill-opacity="0.9"/>
<circle cx="1229.6" cy="477" r="1.94" fill="#2a12e8" fill-opacity="0.9"/>
<circle cx="1240.6" cy="519.6" r="1.94" fill="#2a12e8" fill-opacity="0.9"/>
<ellipse cx="1252.6" cy="523.4" rx="2" ry="4" fill="#d2ffff" transform="rotate(-40 1252.6 523.4)"/>
<circle cx="1256" cy="584" r="1.58" fill="#4a5a50" fill-opacity="0.9"/>
<circle cx="1301" cy="631.3" r="1.76" fill="#b4e6cf" fill-opacity="0.9"/>
<circle cx="1301" cy="654" r="1.94" fill="#2a12e8" fill-opacity="0.9"/>
<circle cx="1322" cy="689" r="1.76" fill="#b4e6cf" fill-opacity="0.9"/>
<circle cx="1318.3" cy="692" r="1.94" fill="#2a12e8" fill-opacity="0.9"/>
<circle cx="1308.9" cy="720" r="1.94" fill="#140a70" fill-opacity="0.9"/>
<circle cx="1347" cy="748.7" r="1.94" fill="#140a70" fill-opacity="0.9"/>
<circle cx="1376.4" cy="780" r="1.94" fill="#2a12e8" fill-opacity="0.9"/>
<circle cx="1324.3" cy="785.7" r="1.94" fill="#140a70" fill-opacity="0.9"/>
<circle cx="1518.7" cy="487.2" r="1.76" fill="#b4e6cf" fill-opacity="0.9"/>
<circle cx="1652.3" cy="376.2" r="1.94" fill="#140a70" fill-opacity="0.9"/>
<circle cx="1628.9" cy="469.8" r="1.94" fill="#2a12e8" fill-opacity="0.9"/>
<circle cx="1692.3" cy="470.6" r="1.58" fill="#4a5a50" fill-opacity="0.9"/>
<circle cx="1707.4" cy="469.4" r="1.58" fill="#4a5a50" fill-opacity="0.9"/>
<circle cx="1644" cy="572.8" r="1.94" fill="#2a12e8" fill-opacity="0.9"/>
<circle cx="1636" cy="669.4" r="1.94" fill="#140a70" fill-opacity="0.9"/>
<circle cx="1631.5" cy="716.6" r="1.58" fill="#4a5a50" fill-opacity="0.9"/>
<circle cx="1636" cy="774" r="1.94" fill="#140a70" fill-opacity="0.9"/>
<circle cx="1824" cy="456.2" r="1.94" fill="#2a12e8" fill-opacity="0.9"/>
<circle cx="1827" cy="457.7" r="1.76" fill="#b4e6cf" fill-opacity="0.9"/>
<circle cx="1990" cy="435.5" r="1.94" fill="#140a70" fill-opacity="0.9"/>
<circle cx="2079" cy="422.6" r="1.76" fill="#b4e6cf" fill-opacity="0.9"/>
<circle cx="2118.3" cy="418.5" r="1.94" fill="#2a12e8" fill-opacity="0.9"/>
<circle cx="2178.3" cy="408.7" r="1.58" fill="#4a5a50" fill-opacity="0.9"/>
<circle cx="2197.2" cy="778" r="1.94" fill="#a4c0f4" fill-opacity="0.9"/>
<circle cx="1375.7" cy="848.3" r="1.58" fill="#4a5a50" fill-opacity="0.9"/>
<circle cx="1406.2" cy="846.8" r="1.94" fill="#2a12e8" fill-opacity="0.9"/>
<circle cx="1399.4" cy="867.2" r="1.76" fill="#b4e6cf" fill-opacity="0.9"/>
<circle cx="1365" cy="871.7" r="1.94" fill="#140a70" fill-opacity="0.9"/>
<circle cx="1415.7" cy="887.5" r="1.94" fill="#2a12e8" fill-opacity="0.9"/>
<circle cx="1420.2" cy="902.6" r="1.76" fill="#b4e6cf" fill-opacity="0.9"/>
<circle cx="1432.6" cy="940.4" r="1.94" fill="#2a12e8" fill-opacity="0.9"/>
<circle cx="1441.7" cy="937" r="1.76" fill="#b4e6cf" fill-opacity="0.9"/>
<circle cx="1447.7" cy="970.6" r="1.94" fill="#140a70" fill-opacity="0.9"/>
<circle cx="1471.9" cy="986" r="1.94" fill="#a4c0f4" fill-opacity="0.9"/>
<ellipse cx="1485" cy="1023.4" rx="1.6" ry="7" fill="#a8f0e8" transform="rotate(-27 1485 1023.4)"/>
<ellipse cx="1493.4" cy="1040.4" rx="1.6" ry="7" fill="#a8f0e8" transform="rotate(-27 1493.4 1040.4)"/>
<circle cx="1507.7" cy="1051.7" r="1.94" fill="#2a12e8" fill-opacity="0.9"/>
<circle cx="1439.4" cy="1074" r="1.58" fill="#4a5a50" fill-opacity="0.9"/>
<circle cx="1521.7" cy="1089.8" r="1.76" fill="#b4e6cf" fill-opacity="0.9"/>
<ellipse cx="1482.5" cy="1117" rx="2" ry="4" fill="#d2ffff" transform="rotate(-40 1482.5 1117)"/>
<circle cx="1533.8" cy="1118.9" r="1.94" fill="#140a70" fill-opacity="0.9"/>
<ellipse cx="1542.5" cy="1131.3" rx="1.6" ry="7" fill="#a8f0e8" transform="rotate(-27 1542.5 1131.3)"/>
<circle cx="1547" cy="1143.4" r="1.58" fill="#4a5a50" fill-opacity="0.9"/>
<circle cx="1573" cy="1174.7" r="1.94" fill="#2a12e8" fill-opacity="0.9"/>
<circle cx="1562.8" cy="1209.8" r="1.94" fill="#2a12e8" fill-opacity="0.9"/>
<circle cx="1593.4" cy="1209" r="1.94" fill="#2a12e8" fill-opacity="0.9"/>
<circle cx="1598.3" cy="1272.5" r="1.94" fill="#140a70" fill-opacity="0.9"/>
<circle cx="1686.2" cy="1272.8" r="1.94" fill="#2a12e8" fill-opacity="0.9"/>
<circle cx="1683" cy="1268" r="1.58" fill="#4a5a50" fill-opacity="0.9"/>
<circle cx="1600.6" cy="1306" r="1.76" fill="#b4e6cf" fill-opacity="0.9"/>
<circle cx="1655" cy="1309.8" r="1.76" fill="#b4e6cf" fill-opacity="0.9"/>
<circle cx="1633" cy="1317" r="1.94" fill="#2a12e8" fill-opacity="0.9"/>
<circle cx="1655" cy="1318.9" r="1.94" fill="#2a12e8" fill-opacity="0.9"/>
<circle cx="1645" cy="1098" r="1.58" fill="#4a5a50" fill-opacity="0.9"/>
<circle cx="1636" cy="824.5" r="1.94" fill="#140a70" fill-opacity="0.9"/>
<circle cx="2184.7" cy="882.6" r="1.94" fill="#2a12e8" fill-opacity="0.9"/>
<circle cx="2123.6" cy="921.5" r="1.58" fill="#4a5a50" fill-opacity="0.9"/>
<circle cx="2160.2" cy="932.5" r="1.94" fill="#2a12e8" fill-opacity="0.9"/>
<circle cx="2166.2" cy="932.5" r="1.94" fill="#2a12e8" fill-opacity="0.9"/>
<circle cx="2113.8" cy="946.4" r="1.94" fill="#2a12e8" fill-opacity="0.9"/>
<circle cx="2164" cy="946.4" r="1.76" fill="#b4e6cf" fill-opacity="0.9"/>
<circle cx="2090.8" cy="974.7" r="1.94" fill="#2a12e8" fill-opacity="0.9"/>
<circle cx="2063.2" cy="983.4" r="1.94" fill="#2a12e8" fill-opacity="0.9"/>
<circle cx="2081.7" cy="985" r="1.58" fill="#4a5a50" fill-opacity="0.9"/>
<circle cx="2136.4" cy="986.4" r="1.94" fill="#2a12e8" fill-opacity="0.9"/>
<circle cx="2149.2" cy="998.9" r="1.76" fill="#b4e6cf" fill-opacity="0.9"/>
<ellipse cx="2041.7" cy="1018.9" rx="2" ry="4" fill="#d2ffff" transform="rotate(-40 2041.7 1018.9)"/>
<circle cx="2106.6" cy="1019.2" r="1.94" fill="#2a12e8" fill-opacity="0.9"/>
<circle cx="2035" cy="1042.6" r="1.94" fill="#140a70" fill-opacity="0.9"/>
<circle cx="1981.3" cy="1050.2" r="1.94" fill="#2a12e8" fill-opacity="0.9"/>
<circle cx="1988.9" cy="1053.2" r="1.76" fill="#b4e6cf" fill-opacity="0.9"/>
<circle cx="1971.5" cy="1071.7" r="1.94" fill="#2a12e8" fill-opacity="0.9"/>
<circle cx="1957.2" cy="1086" r="1.58" fill="#4a5a50" fill-opacity="0.9"/>
<circle cx="1931.5" cy="1098" r="1.94" fill="#2a12e8" fill-opacity="0.9"/>
<circle cx="1927.4" cy="1109.4" r="1.76" fill="#b4e6cf" fill-opacity="0.9"/>
<circle cx="1943.2" cy="1115.5" r="1.94" fill="#140a70" fill-opacity="0.9"/>
<circle cx="1887.7" cy="1118" r="1.94" fill="#2a12e8" fill-opacity="0.9"/>
<circle cx="1882.8" cy="1134.3" r="1.94" fill="#140a70" fill-opacity="0.9"/>
<circle cx="1851.5" cy="1151.3" r="1.76" fill="#b4e6cf" fill-opacity="0.9"/>
<circle cx="1848" cy="1152.5" r="1.94" fill="#2a12e8" fill-opacity="0.9"/>
<circle cx="1827" cy="1163.4" r="1.94" fill="#7a68d0" fill-opacity="0.9"/>
<circle cx="1905.8" cy="1167.2" r="1.94" fill="#7a68d0" fill-opacity="0.9"/>
<circle cx="1809.2" cy="1177.4" r="1.94" fill="#2a12e8" fill-opacity="0.9"/>
<circle cx="1814.2" cy="1184.5" r="1.94" fill="#140a70" fill-opacity="0.9"/>
<circle cx="1786.2" cy="1194.3" r="1.76" fill="#b4e6cf" fill-opacity="0.9"/>
<circle cx="1837.5" cy="1225.3" r="1.94" fill="#2a12e8" fill-opacity="0.9"/>
<circle cx="1835.3" cy="1229" r="1.76" fill="#b4e6cf" fill-opacity="0.9"/>
<circle cx="1742" cy="1247.2" r="1.94" fill="#140a70" fill-opacity="0.9"/>
<circle cx="1818.3" cy="1253.2" r="1.94" fill="#7a68d0" fill-opacity="0.9"/>
<circle cx="1752.3" cy="1267.2" r="1.94" fill="#140a70" fill-opacity="0.9"/>
<circle cx="1732.6" cy="1303.8" r="1.94" fill="#140a70" fill-opacity="0.9"/>
<circle cx="1744.3" cy="1308.7" r="1.76" fill="#b4e6cf" fill-opacity="0.9"/>
<circle cx="2148" cy="1088" r="1.58" fill="#4a5a50" fill-opacity="0.9"/>
<circle cx="2156.8" cy="1130.6" r="1.58" fill="#4a5a50" fill-opacity="0.9"/>
<circle cx="2155.7" cy="1137" r="1.94" fill="#2a12e8" fill-opacity="0.9"/>
<circle cx="2173.4" cy="1192.5" r="1.94" fill="#a4c0f4" fill-opacity="0.9"/>
<circle cx="2183.6" cy="1235.8" r="1.94" fill="#2a12e8" fill-opacity="0.9"/>
<circle cx="2178.7" cy="1265.3" r="1.94" fill="#140a70" fill-opacity="0.9"/>
<circle cx="2181.7" cy="1280" r="1.94" fill="#2a12e8" fill-opacity="0.9"/>
<circle cx="2183.2" cy="1301" r="1.94" fill="#140a70" fill-opacity="0.9"/>
</g>
<text transform="translate(1586.6 1515.8) scale(1.13 1)" x="0" y="0" font-size="20" textLength="203.9" lengthAdjust="spacing" fill="#f2f2f2" stroke="#f2f2f2" stroke-width="0.35">Particle Accumulation</text>
<rect x="1154.5" y="1581.0" width="18.0" height="18.0" fill="#1f1f22" stroke="#38383c" stroke-width="1.3"/>
<path d="M1156.7 1590.0 L1161.7 1597.2 L1171.6 1581.9" fill="none" stroke="#d8d8d8" stroke-width="1.8"/>
<text x="1179.5" y="1596.1" font-size="17" textLength="56.5" lengthAdjust="spacingAndGlyphs" fill="#d6d6d6"  stroke="#d6d6d6" stroke-width="0.3">Probe 1</text>
<rect x="1248.0" y="1576.0" width="60.7" height="28.0" fill="#1b1b1e" />
<text x="1255.0" y="1596.1" font-size="17" fill="#d6d6d6"  stroke="#d6d6d6" stroke-width="0.3">0</text>
<rect x="1154.5" y="1616.5" width="18.0" height="18.0" fill="#1f1f22" stroke="#38383c" stroke-width="1.3"/>
<path d="M1156.7 1625.5 L1161.7 1632.7 L1171.6 1617.4" fill="none" stroke="#d8d8d8" stroke-width="1.8"/>
<text x="1179.5" y="1631.6" font-size="17" textLength="56.5" lengthAdjust="spacingAndGlyphs" fill="#d6d6d6"  stroke="#d6d6d6" stroke-width="0.3">Probe 2</text>
<rect x="1248.0" y="1611.5" width="60.7" height="28.0" fill="#1b1b1e" />
<text x="1255.0" y="1631.6" font-size="17" fill="#d6d6d6"  stroke="#d6d6d6" stroke-width="0.3">0</text>
<linearGradient id="gb1" x1="0" x2="1" y1="0" y2="0"><stop offset="0" stop-color="#000000"/><stop offset="0.45" stop-color="#0a0060"/><stop offset="0.8" stop-color="#1500c8"/><stop offset="1" stop-color="#1a00f2"/></linearGradient>
<linearGradient id="gb2" x1="0" x2="1" y1="0" y2="0"><stop offset="0" stop-color="#020404"/><stop offset="0.5" stop-color="#477c7c"/><stop offset="1" stop-color="#92f6f6"/></linearGradient>
<rect x="1327.0" y="1577.5" width="1766.0" height="21.3" fill="url(#gb1)" />
<line x1="1327.0" y1="1600.0" x2="3093.0" y2="1600.0" stroke="#e8e8f8" stroke-width="1.6" />
<rect x="1327.0" y="1613.0" width="1766.0" height="20.8" fill="url(#gb2)" />
<line x1="1327.0" y1="1635.0" x2="3093.0" y2="1635.0" stroke="#e8f8f8" stroke-width="1.6" />
<rect x="1315.0" y="1577.0" width="12.0" height="23.6" fill="#ffffff" rx="1.5"/>
<rect x="3092.7" y="1577.0" width="12.9" height="23.6" fill="#ffffff" rx="1.5"/>
<rect x="1315.0" y="1612.0" width="12.0" height="23.6" fill="#ffffff" rx="1.5"/>
<rect x="3092.7" y="1612.0" width="12.9" height="23.6" fill="#ffffff" rx="1.5"/>
<rect x="3115.0" y="1576.5" width="58.7" height="27.5" fill="#1b1b1e" />
<rect x="3115.0" y="1611.5" width="58.7" height="27.5" fill="#1b1b1e" />
<text x="3121.0" y="1596.1" font-size="17" textLength="45.6" lengthAdjust="spacingAndGlyphs" fill="#d6d6d6"  stroke="#d6d6d6" stroke-width="0.3">26256</text>
<text x="3121.0" y="1631.2" font-size="17" textLength="45.6" lengthAdjust="spacingAndGlyphs" fill="#d6d6d6"  stroke="#d6d6d6" stroke-width="0.3">34309</text>
<rect x="3178.4" y="1574.6" width="31.8" height="30.2" fill="#38383d" />
<rect x="3214.4" y="1574.6" width="31.3" height="30.2" fill="#38383d" />
<rect x="3249.6" y="1574.6" width="31.0" height="30.2" fill="#38383d" />
<g fill="#d0d0d0" stroke="none">
<rect x="3192.6" y="1579.1" width="2.2" height="20"/>
<path d="M3183.2 1589.1 l5 -5 l4 3.6 v2.8 l-4 3.6z M3204.2 1589.1 l-5 -5 l-4 3.6 v2.8 l4 3.6z"/>
<path d="M3202.2 1597.6 h5 l-2.5 3z"/>
</g>
<rect x="3218.8" y="1578.8" width="20.6" height="20.8" fill="none" stroke="#d0d0d0" stroke-width="2"/>
<path d="M3222.0 1597.1 L3226.8 1585.3 L3230.3 1590.1 Q3233.8 1590.6 3237.2 1594.7 V1597.1z" fill="#1c1c1f"/>
<path d="M3222.3 1595.6 L3226.8 1585.3 L3230.3 1590.1 Q3233.8 1590.6 3237.2 1594.7" fill="none" stroke="#d0d0d0" stroke-width="1.9"/>
<circle cx="3264.9" cy="1589.1" r="9.8" fill="none" stroke="#d0d0d0" stroke-width="2"/>
<circle cx="3264.9" cy="1589.1" r="6.2" fill="none" stroke="#d0d0d0" stroke-width="2" stroke-dasharray="2.2 2.6"/>
<rect x="3262.1" y="1586.3" width="5.6" height="5.6" fill="#ffffff" transform="rotate(45 3264.9 1589.1)"/>
<path d="M3272.9 1598.1 h5 l-2.5 3z" fill="#d0d0d0"/>
<rect x="3178.4" y="1609.4" width="31.8" height="31.0" fill="#38383d" />
<rect x="3214.4" y="1609.4" width="31.3" height="31.0" fill="#38383d" />
<rect x="3249.6" y="1609.4" width="31.0" height="31.0" fill="#38383d" />
<rect x="3283.2" y="1609.4" width="29.8" height="31.0" fill="#38383d" />
<rect x="3316.1" y="1609.4" width="30.6" height="31.0" fill="#38383d" />
<g fill="#d0d0d0" stroke="none">
<rect x="3192.6" y="1614.3" width="2.2" height="20"/>
<path d="M3183.2 1624.3 l5 -5 l4 3.6 v2.8 l-4 3.6z M3204.2 1624.3 l-5 -5 l-4 3.6 v2.8 l4 3.6z"/>
<path d="M3202.2 1632.8 h5 l-2.5 3z"/>
</g>
<rect x="3218.8" y="1614.0" width="20.6" height="20.8" fill="none" stroke="#d0d0d0" stroke-width="2"/>
<path d="M3222.0 1632.3 L3226.8 1620.5 L3230.3 1625.3 Q3233.8 1625.8 3237.2 1629.9 V1632.3z" fill="#1c1c1f"/>
<path d="M3222.3 1630.8 L3226.8 1620.5 L3230.3 1625.3 Q3233.8 1625.8 3237.2 1629.9" fill="none" stroke="#d0d0d0" stroke-width="1.9"/>
<circle cx="3264.9" cy="1624.3" r="9.8" fill="none" stroke="#d0d0d0" stroke-width="2"/>
<circle cx="3264.9" cy="1624.3" r="6.2" fill="none" stroke="#d0d0d0" stroke-width="2" stroke-dasharray="2.2 2.6"/>
<rect x="3262.1" y="1621.5" width="5.6" height="5.6" fill="#ffffff" transform="rotate(45 3264.9 1624.3)"/>
<path d="M3272.9 1633.3 h5 l-2.5 3z" fill="#d0d0d0"/>
<path d="M3287.6 1621.1 h3.8 v-6 h12.4 v6 h3.8 v13.6 h-20z" fill="none" stroke="#d0d0d0" stroke-width="2"/>
<circle cx="3297.6" cy="1627.5" r="4.2" fill="none" stroke="#d0d0d0" stroke-width="1.9"/>
<path d="M3334.6 1620.3 v-5.4 h-14.6 v20 h14.6 v-5.4" fill="none" stroke="#d0d0d0" stroke-width="2"/>
<path d="M3326.5 1624.3 h10" fill="none" stroke="#d0d0d0" stroke-width="2.4"/>
<path d="M3335.5 1619.7 l6 4.6 l-6 4.6z" fill="#d0d0d0"/>
<clipPath id="cmx"><rect x="3200" y="1640" width="158" height="21.7"/></clipPath>
<g clip-path="url(#cmx)">
<text x="3268.7" y="1669.1" font-size="17" textLength="35.0" lengthAdjust="spacingAndGlyphs" fill="#d6d6d6"  stroke="#d6d6d6" stroke-width="0.3">Max:</text>
<rect x="3327.6" y="1659.3" width="3.6" height="2.4" fill="#b8b8b8" />
<rect x="3332.6" y="1659.3" width="3.6" height="2.4" fill="#b8b8b8" />
<rect x="3337.6" y="1659.3" width="3.6" height="2.4" fill="#b8b8b8" />
<rect x="3342.6" y="1659.3" width="3.6" height="2.4" fill="#b8b8b8" />
</g>
<rect x="2254.6" y="70.2" width="1090.4" height="743" fill="#171717" stroke="#ffffff" stroke-width="5"/>
<rect x="2433.5" y="72.7" width="733.2" height="737.8" fill="#03050c" />
<clipPath id="cp1"><rect x="2433.5" y="72.7" width="733.2" height="737.8"/></clipPath>
<g clip-path="url(#cp1)">
<g >
<g filter="url(#b9)" fill="none" stroke-linecap="round">
<path d="M2436.0 120.0 C2438.7 126.7 2443.2 140.7 2452.0 160.0 C2460.8 179.3 2476.7 208.8 2489.0 236.0 C2501.3 263.2 2514.2 297.2 2526.0 323.0 C2537.8 348.8 2546.5 364.0 2560.0 391.0 C2573.5 418.0 2592.3 454.7 2607.0 485.0 C2621.7 515.3 2632.2 542.7 2648.0 573.0 C2663.8 603.3 2688.5 643.5 2702.0 667.0 C2715.5 690.5 2719.0 697.2 2729.0 714.0 C2739.0 730.8 2754.8 752.7 2762.0 768.0 C2769.2 783.3 2770.3 799.7 2772.0 806.0" stroke="#2b4aa6" stroke-width="32" stroke-opacity="0.14"/>
<path d="M2690.0 217.0 C2700.2 215.2 2718.7 209.7 2751.0 206.0 C2783.3 202.3 2843.3 199.2 2884.0 195.0 C2924.7 190.8 2962.0 185.4 2995.0 181.0 C3028.0 176.6 3053.5 172.5 3082.0 168.5 C3110.5 164.5 3152.0 158.9 3166.0 157.0" stroke="#2b4aa6" stroke-width="20" stroke-opacity="0.10"/>
<path d="M2768.0 80.0 C2766.2 100.0 2759.0 138.3 2757.0 200.0 C2755.0 261.7 2755.8 383.3 2756.0 450.0 C2756.2 516.7 2756.5 558.3 2758.0 600.0 C2759.5 641.7 2763.0 665.7 2765.0 700.0 C2767.0 734.3 2769.2 788.3 2770.0 806.0" stroke="#2b4aa6" stroke-width="16" stroke-opacity="0.04"/>
<path d="M2772.0 806.0 C2780.5 795.2 2805.5 759.7 2823.0 741.0 C2840.5 722.3 2858.0 709.7 2877.0 694.0 C2896.0 678.3 2918.0 662.7 2937.0 647.0 C2956.0 631.3 2969.7 616.8 2991.0 600.0 C3012.3 583.2 3044.7 562.8 3065.0 546.0 C3085.3 529.2 3100.5 517.0 3113.0 499.0 C3125.5 481.0 3131.2 466.2 3140.0 438.0 C3148.8 409.8 3161.7 348.0 3166.0 330.0" stroke="#2b4aa6" stroke-width="36" stroke-opacity="0.25"/>
<path d="M3078.0 560.0 C3081.7 571.7 3093.7 606.7 3100.0 630.0 C3106.3 653.3 3111.5 673.3 3116.0 700.0 C3120.5 726.7 3125.2 775.0 3127.0 790.0" stroke="#2b4aa6" stroke-width="20" stroke-opacity="0.10"/>
</g>
<g filter="url(#b2)">
<circle cx="2433.3" cy="125.4" r="3.9" fill="#4468d8" fill-opacity="0.07"/>
<circle cx="2433.7" cy="136.5" r="2.0" fill="#4468d8" fill-opacity="0.17"/>
<circle cx="2461.9" cy="160.0" r="2.0" fill="#4468d8" fill-opacity="0.08"/>
<circle cx="2442.0" cy="184.6" r="2.2" fill="#4468d8" fill-opacity="0.11"/>
<circle cx="2450.6" cy="175.3" r="3.6" fill="#4468d8" fill-opacity="0.15"/>
<circle cx="2480.5" cy="211.3" r="4.5" fill="#4468d8" fill-opacity="0.12"/>
<circle cx="2489.3" cy="234.1" r="2.8" fill="#4468d8" fill-opacity="0.24"/>
<circle cx="2500.1" cy="261.0" r="3.8" fill="#4468d8" fill-opacity="0.14"/>
<circle cx="2498.5" cy="265.8" r="2.0" fill="#4468d8" fill-opacity="0.10"/>
<circle cx="2505.3" cy="275.3" r="2.8" fill="#4468d8" fill-opacity="0.19"/>
<circle cx="2509.4" cy="306.5" r="4.3" fill="#4468d8" fill-opacity="0.21"/>
<circle cx="2526.3" cy="336.3" r="3.5" fill="#4468d8" fill-opacity="0.25"/>
<circle cx="2533.6" cy="331.9" r="4.9" fill="#4468d8" fill-opacity="0.08"/>
<circle cx="2528.3" cy="367.3" r="2.3" fill="#4468d8" fill-opacity="0.17"/>
<circle cx="2568.0" cy="380.4" r="4.2" fill="#4468d8" fill-opacity="0.18"/>
<circle cx="2568.3" cy="388.1" r="4.0" fill="#4468d8" fill-opacity="0.19"/>
<circle cx="2560.6" cy="407.0" r="4.5" fill="#4468d8" fill-opacity="0.27"/>
<circle cx="2564.4" cy="433.2" r="2.0" fill="#4468d8" fill-opacity="0.21"/>
<circle cx="2568.8" cy="422.1" r="4.4" fill="#4468d8" fill-opacity="0.12"/>
<circle cx="2586.0" cy="477.0" r="1.9" fill="#4468d8" fill-opacity="0.16"/>
<circle cx="2609.4" cy="489.3" r="2.0" fill="#4468d8" fill-opacity="0.23"/>
<circle cx="2620.8" cy="508.7" r="3.1" fill="#4468d8" fill-opacity="0.25"/>
<circle cx="2634.0" cy="526.8" r="3.6" fill="#4468d8" fill-opacity="0.25"/>
<circle cx="2641.3" cy="520.3" r="2.7" fill="#4468d8" fill-opacity="0.15"/>
<circle cx="2627.0" cy="574.7" r="4.9" fill="#4468d8" fill-opacity="0.09"/>
<circle cx="2653.1" cy="582.7" r="2.5" fill="#4468d8" fill-opacity="0.17"/>
<circle cx="2652.7" cy="588.9" r="1.8" fill="#4468d8" fill-opacity="0.15"/>
<circle cx="2660.4" cy="620.8" r="4.8" fill="#4468d8" fill-opacity="0.21"/>
<circle cx="2665.2" cy="626.8" r="4.0" fill="#4468d8" fill-opacity="0.07"/>
<circle cx="2704.6" cy="634.9" r="4.6" fill="#4468d8" fill-opacity="0.24"/>
<circle cx="2691.5" cy="669.9" r="2.1" fill="#4468d8" fill-opacity="0.20"/>
<circle cx="2713.5" cy="682.2" r="2.5" fill="#4468d8" fill-opacity="0.09"/>
<circle cx="2718.0" cy="701.1" r="1.8" fill="#4468d8" fill-opacity="0.09"/>
<circle cx="2738.0" cy="721.6" r="1.9" fill="#4468d8" fill-opacity="0.25"/>
<circle cx="2736.0" cy="728.8" r="2.6" fill="#4468d8" fill-opacity="0.13"/>
<circle cx="2747.4" cy="754.0" r="4.5" fill="#4468d8" fill-opacity="0.28"/>
<circle cx="2749.6" cy="769.7" r="2.1" fill="#4468d8" fill-opacity="0.08"/>
<circle cx="2762.3" cy="793.4" r="4.5" fill="#4468d8" fill-opacity="0.09"/>
<circle cx="2797.7" cy="809.8" r="3.5" fill="#4468d8" fill-opacity="0.09"/>
<circle cx="2688.5" cy="216.6" r="3.5" fill="#4468d8" fill-opacity="0.18"/>
<circle cx="2715.6" cy="205.9" r="2.6" fill="#4468d8" fill-opacity="0.09"/>
<circle cx="2733.4" cy="220.0" r="3.5" fill="#4468d8" fill-opacity="0.15"/>
<circle cx="2744.4" cy="210.9" r="4.4" fill="#4468d8" fill-opacity="0.18"/>
<circle cx="2773.0" cy="195.2" r="4.4" fill="#4468d8" fill-opacity="0.15"/>
<circle cx="2786.1" cy="211.1" r="2.9" fill="#4468d8" fill-opacity="0.04"/>
<circle cx="2809.3" cy="202.5" r="2.6" fill="#4468d8" fill-opacity="0.14"/>
<circle cx="2830.1" cy="198.1" r="4.8" fill="#4468d8" fill-opacity="0.19"/>
<circle cx="2848.3" cy="196.7" r="2.5" fill="#4468d8" fill-opacity="0.07"/>
<circle cx="2862.9" cy="201.1" r="3.8" fill="#4468d8" fill-opacity="0.17"/>
<circle cx="2884.6" cy="188.9" r="3.9" fill="#4468d8" fill-opacity="0.16"/>
<circle cx="2908.0" cy="198.0" r="4.7" fill="#4468d8" fill-opacity="0.15"/>
<circle cx="2918.7" cy="183.1" r="2.4" fill="#4468d8" fill-opacity="0.16"/>
<circle cx="2931.9" cy="198.5" r="4.9" fill="#4468d8" fill-opacity="0.10"/>
<circle cx="2943.8" cy="195.1" r="4.1" fill="#4468d8" fill-opacity="0.06"/>
<circle cx="2978.5" cy="186.1" r="4.7" fill="#4468d8" fill-opacity="0.16"/>
<circle cx="3002.4" cy="190.8" r="4.9" fill="#4468d8" fill-opacity="0.14"/>
<circle cx="3009.0" cy="185.0" r="2.2" fill="#4468d8" fill-opacity="0.04"/>
<circle cx="3042.3" cy="173.8" r="3.5" fill="#4468d8" fill-opacity="0.18"/>
<circle cx="3039.7" cy="178.2" r="4.4" fill="#4468d8" fill-opacity="0.07"/>
<circle cx="3070.8" cy="175.6" r="2.6" fill="#4468d8" fill-opacity="0.13"/>
<circle cx="3089.5" cy="174.3" r="2.2" fill="#4468d8" fill-opacity="0.17"/>
<circle cx="3104.5" cy="170.6" r="3.7" fill="#4468d8" fill-opacity="0.17"/>
<circle cx="3115.0" cy="169.3" r="3.4" fill="#4468d8" fill-opacity="0.12"/>
<circle cx="3145.7" cy="159.4" r="3.2" fill="#4468d8" fill-opacity="0.06"/>
<circle cx="3177.8" cy="157.3" r="2.4" fill="#4468d8" fill-opacity="0.11"/>
<circle cx="2767.0" cy="73.3" r="2.8" fill="#4468d8" fill-opacity="0.05"/>
<circle cx="2752.7" cy="149.2" r="2.1" fill="#4468d8" fill-opacity="0.05"/>
<circle cx="2756.9" cy="229.1" r="4.3" fill="#4468d8" fill-opacity="0.05"/>
<circle cx="2748.4" cy="294.2" r="4.7" fill="#4468d8" fill-opacity="0.04"/>
<circle cx="2751.6" cy="366.2" r="3.4" fill="#4468d8" fill-opacity="0.06"/>
<circle cx="2749.8" cy="444.9" r="3.3" fill="#4468d8" fill-opacity="0.07"/>
<circle cx="2753.5" cy="505.4" r="4.8" fill="#4468d8" fill-opacity="0.03"/>
<circle cx="2746.1" cy="583.7" r="4.5" fill="#4468d8" fill-opacity="0.02"/>
<circle cx="2766.4" cy="664.8" r="2.0" fill="#4468d8" fill-opacity="0.03"/>
<circle cx="2773.6" cy="736.9" r="4.3" fill="#4468d8" fill-opacity="0.07"/>
<circle cx="2774.7" cy="812.9" r="3.9" fill="#4468d8" fill-opacity="0.02"/>
<circle cx="2795.1" cy="785.1" r="2.5" fill="#4468d8" fill-opacity="0.47"/>
<circle cx="2766.9" cy="806.7" r="5.0" fill="#4468d8" fill-opacity="0.42"/>
<circle cx="2790.4" cy="801.7" r="3.4" fill="#4468d8" fill-opacity="0.23"/>
<circle cx="2793.1" cy="793.3" r="4.1" fill="#4468d8" fill-opacity="0.10"/>
<circle cx="2783.5" cy="771.7" r="1.9" fill="#4468d8" fill-opacity="0.22"/>
<circle cx="2791.3" cy="758.5" r="2.0" fill="#4468d8" fill-opacity="0.48"/>
<circle cx="2814.9" cy="730.2" r="2.1" fill="#4468d8" fill-opacity="0.20"/>
<circle cx="2833.2" cy="758.6" r="2.7" fill="#4468d8" fill-opacity="0.15"/>
<circle cx="2796.0" cy="758.3" r="4.4" fill="#4468d8" fill-opacity="0.20"/>
<circle cx="2841.1" cy="760.4" r="3.6" fill="#4468d8" fill-opacity="0.37"/>
<circle cx="2836.0" cy="734.8" r="4.0" fill="#4468d8" fill-opacity="0.26"/>
<circle cx="2865.0" cy="738.7" r="3.8" fill="#4468d8" fill-opacity="0.41"/>
<circle cx="2867.2" cy="731.9" r="2.0" fill="#4468d8" fill-opacity="0.43"/>
<circle cx="2843.8" cy="717.0" r="3.6" fill="#4468d8" fill-opacity="0.46"/>
<circle cx="2860.6" cy="713.8" r="3.5" fill="#4468d8" fill-opacity="0.19"/>
<circle cx="2874.0" cy="705.9" r="2.0" fill="#4468d8" fill-opacity="0.17"/>
<circle cx="2871.9" cy="704.5" r="4.2" fill="#4468d8" fill-opacity="0.21"/>
<circle cx="2875.7" cy="689.2" r="2.9" fill="#4468d8" fill-opacity="0.10"/>
<circle cx="2890.7" cy="685.4" r="4.1" fill="#4468d8" fill-opacity="0.31"/>
<circle cx="2903.2" cy="689.9" r="4.8" fill="#4468d8" fill-opacity="0.14"/>
<circle cx="2911.0" cy="660.1" r="3.4" fill="#4468d8" fill-opacity="0.42"/>
<circle cx="2902.1" cy="674.5" r="4.0" fill="#4468d8" fill-opacity="0.48"/>
<circle cx="2908.3" cy="678.5" r="4.1" fill="#4468d8" fill-opacity="0.34"/>
<circle cx="2919.1" cy="660.1" r="2.0" fill="#4468d8" fill-opacity="0.15"/>
<circle cx="2953.3" cy="656.4" r="2.6" fill="#4468d8" fill-opacity="0.16"/>
<circle cx="2962.6" cy="653.4" r="4.6" fill="#4468d8" fill-opacity="0.36"/>
<circle cx="2948.4" cy="644.3" r="2.7" fill="#4468d8" fill-opacity="0.27"/>
<circle cx="2964.4" cy="640.1" r="2.6" fill="#4468d8" fill-opacity="0.47"/>
<circle cx="2979.2" cy="620.5" r="2.6" fill="#4468d8" fill-opacity="0.47"/>
<circle cx="2967.6" cy="627.2" r="1.8" fill="#4468d8" fill-opacity="0.24"/>
<circle cx="2965.0" cy="612.8" r="2.4" fill="#4468d8" fill-opacity="0.29"/>
<circle cx="2995.4" cy="604.6" r="2.1" fill="#4468d8" fill-opacity="0.25"/>
<circle cx="2995.9" cy="598.9" r="2.8" fill="#4468d8" fill-opacity="0.19"/>
<circle cx="2988.6" cy="585.2" r="4.2" fill="#4468d8" fill-opacity="0.35"/>
<circle cx="3003.6" cy="563.1" r="3.0" fill="#4468d8" fill-opacity="0.22"/>
<circle cx="3023.2" cy="580.7" r="4.1" fill="#4468d8" fill-opacity="0.35"/>
<circle cx="3045.9" cy="581.9" r="4.7" fill="#4468d8" fill-opacity="0.34"/>
<circle cx="3029.7" cy="548.5" r="2.2" fill="#4468d8" fill-opacity="0.30"/>
<circle cx="3017.1" cy="563.9" r="4.4" fill="#4468d8" fill-opacity="0.42"/>
<circle cx="3025.6" cy="546.3" r="4.0" fill="#4468d8" fill-opacity="0.36"/>
<circle cx="3055.4" cy="556.3" r="2.2" fill="#4468d8" fill-opacity="0.24"/>
<circle cx="3080.6" cy="561.5" r="3.6" fill="#4468d8" fill-opacity="0.34"/>
<circle cx="3057.2" cy="528.5" r="3.4" fill="#4468d8" fill-opacity="0.10"/>
<circle cx="3082.4" cy="515.8" r="3.4" fill="#4468d8" fill-opacity="0.30"/>
<circle cx="3081.0" cy="524.3" r="4.2" fill="#4468d8" fill-opacity="0.19"/>
<circle cx="3098.5" cy="525.5" r="4.1" fill="#4468d8" fill-opacity="0.18"/>
<circle cx="3095.0" cy="482.3" r="3.4" fill="#4468d8" fill-opacity="0.24"/>
<circle cx="3086.0" cy="510.3" r="4.3" fill="#4468d8" fill-opacity="0.34"/>
<circle cx="3107.7" cy="497.6" r="2.3" fill="#4468d8" fill-opacity="0.19"/>
<circle cx="3115.1" cy="483.2" r="3.6" fill="#4468d8" fill-opacity="0.10"/>
<circle cx="3128.1" cy="488.1" r="4.0" fill="#4468d8" fill-opacity="0.36"/>
<circle cx="3118.8" cy="467.1" r="3.5" fill="#4468d8" fill-opacity="0.28"/>
<circle cx="3121.3" cy="468.4" r="4.7" fill="#4468d8" fill-opacity="0.17"/>
<circle cx="3158.6" cy="454.6" r="1.9" fill="#4468d8" fill-opacity="0.27"/>
<circle cx="3148.1" cy="421.5" r="3.2" fill="#4468d8" fill-opacity="0.20"/>
<circle cx="3145.8" cy="468.8" r="2.5" fill="#4468d8" fill-opacity="0.32"/>
<circle cx="3150.6" cy="443.2" r="4.8" fill="#4468d8" fill-opacity="0.15"/>
<circle cx="3149.7" cy="409.9" r="4.6" fill="#4468d8" fill-opacity="0.37"/>
<circle cx="3148.9" cy="438.6" r="3.4" fill="#4468d8" fill-opacity="0.11"/>
<circle cx="3162.0" cy="404.4" r="3.2" fill="#4468d8" fill-opacity="0.21"/>
<circle cx="3157.3" cy="403.3" r="2.8" fill="#4468d8" fill-opacity="0.42"/>
<circle cx="3172.4" cy="385.8" r="4.5" fill="#4468d8" fill-opacity="0.14"/>
<circle cx="3171.6" cy="368.0" r="4.7" fill="#4468d8" fill-opacity="0.21"/>
<circle cx="3148.8" cy="375.6" r="5.0" fill="#4468d8" fill-opacity="0.32"/>
<circle cx="3151.3" cy="367.4" r="2.7" fill="#4468d8" fill-opacity="0.12"/>
<circle cx="3179.6" cy="362.0" r="2.7" fill="#4468d8" fill-opacity="0.46"/>
<circle cx="3163.8" cy="348.6" r="3.4" fill="#4468d8" fill-opacity="0.17"/>
<circle cx="3145.2" cy="351.2" r="4.6" fill="#4468d8" fill-opacity="0.41"/>
<circle cx="3068.1" cy="549.3" r="4.8" fill="#4468d8" fill-opacity="0.12"/>
<circle cx="3080.4" cy="566.9" r="4.1" fill="#4468d8" fill-opacity="0.10"/>
<circle cx="3083.8" cy="568.5" r="2.7" fill="#4468d8" fill-opacity="0.04"/>
<circle cx="3089.6" cy="585.5" r="3.3" fill="#4468d8" fill-opacity="0.09"/>
<circle cx="3086.1" cy="606.3" r="4.9" fill="#4468d8" fill-opacity="0.08"/>
<circle cx="3089.0" cy="600.4" r="3.6" fill="#4468d8" fill-opacity="0.10"/>
<circle cx="3096.9" cy="617.4" r="2.5" fill="#4468d8" fill-opacity="0.17"/>
<circle cx="3093.1" cy="623.1" r="4.7" fill="#4468d8" fill-opacity="0.19"/>
<circle cx="3097.0" cy="633.2" r="2.4" fill="#4468d8" fill-opacity="0.05"/>
<circle cx="3101.0" cy="643.7" r="2.6" fill="#4468d8" fill-opacity="0.08"/>
<circle cx="3092.2" cy="644.6" r="4.2" fill="#4468d8" fill-opacity="0.10"/>
<circle cx="3099.9" cy="663.8" r="3.0" fill="#4468d8" fill-opacity="0.09"/>
<circle cx="3113.8" cy="670.9" r="4.9" fill="#4468d8" fill-opacity="0.06"/>
<circle cx="3101.7" cy="677.8" r="4.6" fill="#4468d8" fill-opacity="0.07"/>
<circle cx="3112.4" cy="692.2" r="3.1" fill="#4468d8" fill-opacity="0.10"/>
<circle cx="3127.5" cy="692.8" r="4.6" fill="#4468d8" fill-opacity="0.04"/>
<circle cx="3126.9" cy="707.8" r="4.7" fill="#4468d8" fill-opacity="0.11"/>
<circle cx="3117.7" cy="715.0" r="3.1" fill="#4468d8" fill-opacity="0.18"/>
<circle cx="3124.9" cy="712.9" r="4.9" fill="#4468d8" fill-opacity="0.07"/>
<circle cx="3123.1" cy="736.2" r="3.5" fill="#4468d8" fill-opacity="0.14"/>
<circle cx="3131.1" cy="739.4" r="3.9" fill="#4468d8" fill-opacity="0.15"/>
<circle cx="3114.4" cy="754.8" r="1.9" fill="#4468d8" fill-opacity="0.15"/>
<circle cx="3125.2" cy="776.6" r="3.9" fill="#4468d8" fill-opacity="0.08"/>
<circle cx="3128.2" cy="774.9" r="3.8" fill="#4468d8" fill-opacity="0.14"/>
<circle cx="3127.8" cy="782.3" r="3.5" fill="#4468d8" fill-opacity="0.12"/>
<circle cx="3123.4" cy="793.0" r="3.7" fill="#4468d8" fill-opacity="0.04"/>
</g>
</g>
<g filter="url(#b2)">
<ellipse cx="2488.5" cy="239.3" rx="7" ry="5.4" fill="#3a78f0" fill-opacity="0.55" transform="rotate(0 2488.5 239.3)"/>
<ellipse cx="2752.2" cy="205.7" rx="7.4" ry="5.6" fill="#3a78f0" fill-opacity="0.55" transform="rotate(0 2752.2 205.7)"/>
<ellipse cx="2560.7" cy="394.7" rx="7" ry="5.6" fill="#3a78f0" fill-opacity="0.55" transform="rotate(0 2560.7 394.7)"/>
<ellipse cx="3128.7" cy="485" rx="7" ry="7" fill="#3a78f0" fill-opacity="0.55" transform="rotate(0 3128.7 485)"/>
<ellipse cx="3113" cy="520" rx="6.6" ry="5.6" fill="#3a78f0" fill-opacity="0.55" transform="rotate(0 3113 520)"/>
<ellipse cx="3115.5" cy="529" rx="6" ry="6" fill="#3a78f0" fill-opacity="0.55" transform="rotate(0 3115.5 529)"/>
<ellipse cx="3064.7" cy="548" rx="7" ry="5.4" fill="#3a78f0" fill-opacity="0.55" transform="rotate(0 3064.7 548)"/>
<ellipse cx="3077" cy="578.2" rx="7" ry="5.8" fill="#3a78f0" fill-opacity="0.55" transform="rotate(0 3077 578.2)"/>
<ellipse cx="2991.5" cy="596.4" rx="8.6" ry="5.4" fill="#3a78f0" fill-opacity="0.55" transform="rotate(-30 2991.5 596.4)"/>
<ellipse cx="2965.4" cy="643.5" rx="8.4" ry="5.2" fill="#3a78f0" fill-opacity="0.55" transform="rotate(-30 2965.4 643.5)"/>
<ellipse cx="2880" cy="737.4" rx="9" ry="5.4" fill="#3a78f0" fill-opacity="0.55" transform="rotate(-55 2880 737.4)"/>
<ellipse cx="3097" cy="555" rx="5.6" ry="7" fill="#3a70e0" fill-opacity="0.5" transform="rotate(20 3097 555)"/>
<ellipse cx="2769.5" cy="782.3" rx="5" ry="6" fill="#3a70e0" fill-opacity="0.5" transform="rotate(0 2769.5 782.3)"/>
<ellipse cx="2535.2" cy="375" rx="5" ry="5" fill="#3a70e0" fill-opacity="0.5" transform="rotate(0 2535.2 375)"/>
</g>
<g filter="url(#b07)">
<ellipse cx="2488.5" cy="239.3" rx="3" ry="2.4" fill="#b4f41c" transform="rotate(0 2488.5 239.3)"/>
<ellipse cx="2752.2" cy="205.7" rx="3.4" ry="2.6" fill="#b4f41c" transform="rotate(0 2752.2 205.7)"/>
<ellipse cx="2560.7" cy="394.7" rx="3" ry="2.6" fill="#b4f41c" transform="rotate(0 2560.7 394.7)"/>
<ellipse cx="3128.7" cy="485" rx="3" ry="4" fill="#b4f41c" transform="rotate(0 3128.7 485)"/>
<ellipse cx="3113" cy="520" rx="2.6" ry="2.6" fill="#b4f41c" transform="rotate(0 3113 520)"/>
<ellipse cx="3115.5" cy="529" rx="2" ry="3" fill="#b4f41c" transform="rotate(0 3115.5 529)"/>
<ellipse cx="3064.7" cy="548" rx="3" ry="2.4" fill="#b4f41c" transform="rotate(0 3064.7 548)"/>
<ellipse cx="3077" cy="578.2" rx="3" ry="2.8" fill="#b4f41c" transform="rotate(0 3077 578.2)"/>
<ellipse cx="2991.5" cy="596.4" rx="4.6" ry="2.4" fill="#b4f41c" transform="rotate(-30 2991.5 596.4)"/>
<ellipse cx="2965.4" cy="643.5" rx="4.4" ry="2.2" fill="#b4f41c" transform="rotate(-30 2965.4 643.5)"/>
<ellipse cx="2880" cy="737.4" rx="5" ry="2.4" fill="#b4f41c" transform="rotate(-55 2880 737.4)"/>
<ellipse cx="3097" cy="555" rx="2.6" ry="4" fill="#58a6c4" fill-opacity="0.85" transform="rotate(20 3097 555)"/>
<ellipse cx="2769.5" cy="782.3" rx="2" ry="3" fill="#58a6c4" fill-opacity="0.85" transform="rotate(0 2769.5 782.3)"/>
<ellipse cx="2535.2" cy="375" rx="2" ry="2" fill="#58a6c4" fill-opacity="0.85" transform="rotate(0 2535.2 375)"/>
</g>
</g>
<g fill="none" stroke="#d41a70" stroke-width="2.4">
<rect x="2445.4" y="91.7" width="22" height="22"/>
<rect x="2436.0" y="129.0" width="22" height="22"/>
<rect x="2440.0" y="145.4" width="22" height="22"/>
<rect x="2583.3" y="147.6" width="22" height="22"/>
<rect x="2757.0" y="129.0" width="22" height="22"/>
<rect x="2470.0" y="199.4" width="22" height="22"/>
<rect x="2741.2" y="194.7" width="22" height="22"/>
<rect x="2873.0" y="185.0" width="22" height="22"/>
<rect x="2985.2" y="169.0" width="22" height="22"/>
<rect x="3073.0" y="157.3" width="22" height="22"/>
<rect x="3109.2" y="150.0" width="22" height="22"/>
<rect x="2751.3" y="265.0" width="22" height="22"/>
<rect x="2516.7" y="316.5" width="22" height="22"/>
<rect x="2529.3" y="343.5" width="22" height="22"/>
<rect x="2524.2" y="364.0" width="22" height="22"/>
<rect x="2481.2" y="387.2" width="22" height="22"/>
<rect x="2549.7" y="383.7" width="22" height="22"/>
<rect x="2534.0" y="409.2" width="22" height="22"/>
<rect x="2571.0" y="405.4" width="22" height="22"/>
<rect x="2747.2" y="328.2" width="22" height="22"/>
<rect x="2742.8" y="386.6" width="22" height="22"/>
<rect x="2744.7" y="403.2" width="22" height="22"/>
<rect x="2745.0" y="436.6" width="22" height="22"/>
<rect x="2590.5" y="449.5" width="22" height="22"/>
<rect x="2562.2" y="468.0" width="22" height="22"/>
<rect x="2596.8" y="478.7" width="22" height="22"/>
<rect x="2722.4" y="490.6" width="22" height="22"/>
<rect x="2607.5" y="514.8" width="22" height="22"/>
<rect x="2644.2" y="572.6" width="22" height="22"/>
<rect x="2747.5" y="584.2" width="22" height="22"/>
<rect x="2751.3" y="623.1" width="22" height="22"/>
<rect x="2641.4" y="634.4" width="22" height="22"/>
<rect x="2675.6" y="634.4" width="22" height="22"/>
<rect x="2703.0" y="672.7" width="22" height="22"/>
<rect x="2716.7" y="697.0" width="22" height="22"/>
<rect x="3117.7" y="474.0" width="22" height="22"/>
<rect x="3068.4" y="518.0" width="22" height="22"/>
<rect x="3053.7" y="537.0" width="22" height="22"/>
<rect x="3016.6" y="583.2" width="22" height="22"/>
<rect x="2977.0" y="625.6" width="22" height="22"/>
<rect x="2890.4" y="656.7" width="22" height="22"/>
<rect x="2876.2" y="665.5" width="22" height="22"/>
<rect x="2863.0" y="675.5" width="22" height="22"/>
<rect x="2899.8" y="675.5" width="22" height="22"/>
<rect x="2930.3" y="668.6" width="22" height="22"/>
<rect x="2883.5" y="708.5" width="22" height="22"/>
<rect x="2869.0" y="727.4" width="22" height="22"/>
<rect x="2951.3" y="734.0" width="22" height="22"/>
<rect x="3097.3" y="645.7" width="22" height="22"/>
<rect x="3099.2" y="664.6" width="22" height="22"/>
<rect x="3109.0" y="681.2" width="22" height="22"/>
<rect x="3116.2" y="744.0" width="22" height="22"/>
<rect x="3117.7" y="759.7" width="22" height="22"/>
<rect x="2780.5" y="740.9" width="22" height="22"/>
<rect x="2810.3" y="759.7" width="22" height="22"/>
<rect x="2758.5" y="771.3" width="22" height="22"/>
</g>
<text transform="translate(2761.6 766.1) scale(1.13 1)" x="0" y="0" font-size="20" textLength="68.6" lengthAdjust="spacing" fill="#f2f2f2" stroke="#f2f2f2" stroke-width="0.35">Plane-1</text>
<rect x="2254.6" y="821.9" width="1090.4" height="741.5" fill="#171717" stroke="#ffffff" stroke-width="5"/>
<rect x="2435.7" y="824.5" width="727.8" height="736.5" fill="#03050c" />
<clipPath id="cp2"><rect x="2435.7" y="824.5" width="727.8" height="736.5"/></clipPath>
<g clip-path="url(#cp2)">
<g transform="translate(20.32 753.14) scale(0.9925 0.9938)">
<g filter="url(#b9)" fill="none" stroke-linecap="round">
<path d="M2436.0 120.0 C2438.7 126.7 2443.2 140.7 2452.0 160.0 C2460.8 179.3 2476.7 208.8 2489.0 236.0 C2501.3 263.2 2514.2 297.2 2526.0 323.0 C2537.8 348.8 2546.5 364.0 2560.0 391.0 C2573.5 418.0 2592.3 454.7 2607.0 485.0 C2621.7 515.3 2632.2 542.7 2648.0 573.0 C2663.8 603.3 2688.5 643.5 2702.0 667.0 C2715.5 690.5 2719.0 697.2 2729.0 714.0 C2739.0 730.8 2754.8 752.7 2762.0 768.0 C2769.2 783.3 2770.3 799.7 2772.0 806.0" stroke="#2b4aa6" stroke-width="32" stroke-opacity="0.09"/>
<path d="M2690.0 217.0 C2700.2 215.2 2718.7 209.7 2751.0 206.0 C2783.3 202.3 2843.3 199.2 2884.0 195.0 C2924.7 190.8 2962.0 185.4 2995.0 181.0 C3028.0 176.6 3053.5 172.5 3082.0 168.5 C3110.5 164.5 3152.0 158.9 3166.0 157.0" stroke="#2b4aa6" stroke-width="20" stroke-opacity="0.06"/>
<path d="M2768.0 80.0 C2766.2 100.0 2759.0 138.3 2757.0 200.0 C2755.0 261.7 2755.8 383.3 2756.0 450.0 C2756.2 516.7 2756.5 558.3 2758.0 600.0 C2759.5 641.7 2763.0 665.7 2765.0 700.0 C2767.0 734.3 2769.2 788.3 2770.0 806.0" stroke="#2b4aa6" stroke-width="16" stroke-opacity="0.02"/>
<path d="M2772.0 806.0 C2780.5 795.2 2805.5 759.7 2823.0 741.0 C2840.5 722.3 2858.0 709.7 2877.0 694.0 C2896.0 678.3 2918.0 662.7 2937.0 647.0 C2956.0 631.3 2969.7 616.8 2991.0 600.0 C3012.3 583.2 3044.7 562.8 3065.0 546.0 C3085.3 529.2 3100.5 517.0 3113.0 499.0 C3125.5 481.0 3131.2 466.2 3140.0 438.0 C3148.8 409.8 3161.7 348.0 3166.0 330.0" stroke="#2b4aa6" stroke-width="36" stroke-opacity="0.15"/>
<path d="M3078.0 560.0 C3081.7 571.7 3093.7 606.7 3100.0 630.0 C3106.3 653.3 3111.5 673.3 3116.0 700.0 C3120.5 726.7 3125.2 775.0 3127.0 790.0" stroke="#2b4aa6" stroke-width="20" stroke-opacity="0.06"/>
</g>
<g filter="url(#b2)">
<circle cx="2433.3" cy="125.4" r="3.9" fill="#4468d8" fill-opacity="0.04"/>
<circle cx="2433.7" cy="136.5" r="2.0" fill="#4468d8" fill-opacity="0.11"/>
<circle cx="2461.9" cy="160.0" r="2.0" fill="#4468d8" fill-opacity="0.05"/>
<circle cx="2442.0" cy="184.6" r="2.2" fill="#4468d8" fill-opacity="0.07"/>
<circle cx="2450.6" cy="175.3" r="3.6" fill="#4468d8" fill-opacity="0.09"/>
<circle cx="2480.5" cy="211.3" r="4.5" fill="#4468d8" fill-opacity="0.08"/>
<circle cx="2489.3" cy="234.1" r="2.8" fill="#4468d8" fill-opacity="0.15"/>
<circle cx="2500.1" cy="261.0" r="3.8" fill="#4468d8" fill-opacity="0.09"/>
<circle cx="2498.5" cy="265.8" r="2.0" fill="#4468d8" fill-opacity="0.06"/>
<circle cx="2505.3" cy="275.3" r="2.8" fill="#4468d8" fill-opacity="0.12"/>
<circle cx="2509.4" cy="306.5" r="4.3" fill="#4468d8" fill-opacity="0.13"/>
<circle cx="2526.3" cy="336.3" r="3.5" fill="#4468d8" fill-opacity="0.16"/>
<circle cx="2533.6" cy="331.9" r="4.9" fill="#4468d8" fill-opacity="0.05"/>
<circle cx="2528.3" cy="367.3" r="2.3" fill="#4468d8" fill-opacity="0.10"/>
<circle cx="2568.0" cy="380.4" r="4.2" fill="#4468d8" fill-opacity="0.11"/>
<circle cx="2568.3" cy="388.1" r="4.0" fill="#4468d8" fill-opacity="0.12"/>
<circle cx="2560.6" cy="407.0" r="4.5" fill="#4468d8" fill-opacity="0.17"/>
<circle cx="2564.4" cy="433.2" r="2.0" fill="#4468d8" fill-opacity="0.13"/>
<circle cx="2568.8" cy="422.1" r="4.4" fill="#4468d8" fill-opacity="0.07"/>
<circle cx="2586.0" cy="477.0" r="1.9" fill="#4468d8" fill-opacity="0.10"/>
<circle cx="2609.4" cy="489.3" r="2.0" fill="#4468d8" fill-opacity="0.14"/>
<circle cx="2620.8" cy="508.7" r="3.1" fill="#4468d8" fill-opacity="0.16"/>
<circle cx="2634.0" cy="526.8" r="3.6" fill="#4468d8" fill-opacity="0.16"/>
<circle cx="2641.3" cy="520.3" r="2.7" fill="#4468d8" fill-opacity="0.09"/>
<circle cx="2627.0" cy="574.7" r="4.9" fill="#4468d8" fill-opacity="0.06"/>
<circle cx="2653.1" cy="582.7" r="2.5" fill="#4468d8" fill-opacity="0.10"/>
<circle cx="2652.7" cy="588.9" r="1.8" fill="#4468d8" fill-opacity="0.09"/>
<circle cx="2660.4" cy="620.8" r="4.8" fill="#4468d8" fill-opacity="0.13"/>
<circle cx="2665.2" cy="626.8" r="4.0" fill="#4468d8" fill-opacity="0.04"/>
<circle cx="2704.6" cy="634.9" r="4.6" fill="#4468d8" fill-opacity="0.15"/>
<circle cx="2691.5" cy="669.9" r="2.1" fill="#4468d8" fill-opacity="0.12"/>
<circle cx="2713.5" cy="682.2" r="2.5" fill="#4468d8" fill-opacity="0.06"/>
<circle cx="2718.0" cy="701.1" r="1.8" fill="#4468d8" fill-opacity="0.06"/>
<circle cx="2738.0" cy="721.6" r="1.9" fill="#4468d8" fill-opacity="0.16"/>
<circle cx="2736.0" cy="728.8" r="2.6" fill="#4468d8" fill-opacity="0.08"/>
<circle cx="2747.4" cy="754.0" r="4.5" fill="#4468d8" fill-opacity="0.17"/>
<circle cx="2749.6" cy="769.7" r="2.1" fill="#4468d8" fill-opacity="0.05"/>
<circle cx="2762.3" cy="793.4" r="4.5" fill="#4468d8" fill-opacity="0.06"/>
<circle cx="2797.7" cy="809.8" r="3.5" fill="#4468d8" fill-opacity="0.06"/>
<circle cx="2688.5" cy="216.6" r="3.5" fill="#4468d8" fill-opacity="0.11"/>
<circle cx="2715.6" cy="205.9" r="2.6" fill="#4468d8" fill-opacity="0.06"/>
<circle cx="2733.4" cy="220.0" r="3.5" fill="#4468d8" fill-opacity="0.10"/>
<circle cx="2744.4" cy="210.9" r="4.4" fill="#4468d8" fill-opacity="0.11"/>
<circle cx="2773.0" cy="195.2" r="4.4" fill="#4468d8" fill-opacity="0.09"/>
<circle cx="2786.1" cy="211.1" r="2.9" fill="#4468d8" fill-opacity="0.03"/>
<circle cx="2809.3" cy="202.5" r="2.6" fill="#4468d8" fill-opacity="0.09"/>
<circle cx="2830.1" cy="198.1" r="4.8" fill="#4468d8" fill-opacity="0.11"/>
<circle cx="2848.3" cy="196.7" r="2.5" fill="#4468d8" fill-opacity="0.04"/>
<circle cx="2862.9" cy="201.1" r="3.8" fill="#4468d8" fill-opacity="0.11"/>
<circle cx="2884.6" cy="188.9" r="3.9" fill="#4468d8" fill-opacity="0.10"/>
<circle cx="2908.0" cy="198.0" r="4.7" fill="#4468d8" fill-opacity="0.10"/>
<circle cx="2918.7" cy="183.1" r="2.4" fill="#4468d8" fill-opacity="0.10"/>
<circle cx="2931.9" cy="198.5" r="4.9" fill="#4468d8" fill-opacity="0.06"/>
<circle cx="2943.8" cy="195.1" r="4.1" fill="#4468d8" fill-opacity="0.04"/>
<circle cx="2978.5" cy="186.1" r="4.7" fill="#4468d8" fill-opacity="0.10"/>
<circle cx="3002.4" cy="190.8" r="4.9" fill="#4468d8" fill-opacity="0.08"/>
<circle cx="3009.0" cy="185.0" r="2.2" fill="#4468d8" fill-opacity="0.02"/>
<circle cx="3042.3" cy="173.8" r="3.5" fill="#4468d8" fill-opacity="0.11"/>
<circle cx="3039.7" cy="178.2" r="4.4" fill="#4468d8" fill-opacity="0.04"/>
<circle cx="3070.8" cy="175.6" r="2.6" fill="#4468d8" fill-opacity="0.08"/>
<circle cx="3089.5" cy="174.3" r="2.2" fill="#4468d8" fill-opacity="0.11"/>
<circle cx="3104.5" cy="170.6" r="3.7" fill="#4468d8" fill-opacity="0.11"/>
<circle cx="3115.0" cy="169.3" r="3.4" fill="#4468d8" fill-opacity="0.07"/>
<circle cx="3145.7" cy="159.4" r="3.2" fill="#4468d8" fill-opacity="0.04"/>
<circle cx="3177.8" cy="157.3" r="2.4" fill="#4468d8" fill-opacity="0.07"/>
<circle cx="2767.0" cy="73.3" r="2.8" fill="#4468d8" fill-opacity="0.03"/>
<circle cx="2752.7" cy="149.2" r="2.1" fill="#4468d8" fill-opacity="0.03"/>
<circle cx="2756.9" cy="229.1" r="4.3" fill="#4468d8" fill-opacity="0.03"/>
<circle cx="2748.4" cy="294.2" r="4.7" fill="#4468d8" fill-opacity="0.03"/>
<circle cx="2751.6" cy="366.2" r="3.4" fill="#4468d8" fill-opacity="0.04"/>
<circle cx="2749.8" cy="444.9" r="3.3" fill="#4468d8" fill-opacity="0.05"/>
<circle cx="2753.5" cy="505.4" r="4.8" fill="#4468d8" fill-opacity="0.02"/>
<circle cx="2746.1" cy="583.7" r="4.5" fill="#4468d8" fill-opacity="0.01"/>
<circle cx="2766.4" cy="664.8" r="2.0" fill="#4468d8" fill-opacity="0.02"/>
<circle cx="2773.6" cy="736.9" r="4.3" fill="#4468d8" fill-opacity="0.04"/>
<circle cx="2774.7" cy="812.9" r="3.9" fill="#4468d8" fill-opacity="0.02"/>
<circle cx="2795.1" cy="785.1" r="2.5" fill="#4468d8" fill-opacity="0.29"/>
<circle cx="2766.9" cy="806.7" r="5.0" fill="#4468d8" fill-opacity="0.26"/>
<circle cx="2790.4" cy="801.7" r="3.4" fill="#4468d8" fill-opacity="0.14"/>
<circle cx="2793.1" cy="793.3" r="4.1" fill="#4468d8" fill-opacity="0.06"/>
<circle cx="2783.5" cy="771.7" r="1.9" fill="#4468d8" fill-opacity="0.14"/>
<circle cx="2791.3" cy="758.5" r="2.0" fill="#4468d8" fill-opacity="0.30"/>
<circle cx="2814.9" cy="730.2" r="2.1" fill="#4468d8" fill-opacity="0.12"/>
<circle cx="2833.2" cy="758.6" r="2.7" fill="#4468d8" fill-opacity="0.09"/>
<circle cx="2796.0" cy="758.3" r="4.4" fill="#4468d8" fill-opacity="0.12"/>
<circle cx="2841.1" cy="760.4" r="3.6" fill="#4468d8" fill-opacity="0.23"/>
<circle cx="2836.0" cy="734.8" r="4.0" fill="#4468d8" fill-opacity="0.16"/>
<circle cx="2865.0" cy="738.7" r="3.8" fill="#4468d8" fill-opacity="0.25"/>
<circle cx="2867.2" cy="731.9" r="2.0" fill="#4468d8" fill-opacity="0.27"/>
<circle cx="2843.8" cy="717.0" r="3.6" fill="#4468d8" fill-opacity="0.28"/>
<circle cx="2860.6" cy="713.8" r="3.5" fill="#4468d8" fill-opacity="0.12"/>
<circle cx="2874.0" cy="705.9" r="2.0" fill="#4468d8" fill-opacity="0.11"/>
<circle cx="2871.9" cy="704.5" r="4.2" fill="#4468d8" fill-opacity="0.13"/>
<circle cx="2875.7" cy="689.2" r="2.9" fill="#4468d8" fill-opacity="0.06"/>
<circle cx="2890.7" cy="685.4" r="4.1" fill="#4468d8" fill-opacity="0.19"/>
<circle cx="2903.2" cy="689.9" r="4.8" fill="#4468d8" fill-opacity="0.09"/>
<circle cx="2911.0" cy="660.1" r="3.4" fill="#4468d8" fill-opacity="0.26"/>
<circle cx="2902.1" cy="674.5" r="4.0" fill="#4468d8" fill-opacity="0.30"/>
<circle cx="2908.3" cy="678.5" r="4.1" fill="#4468d8" fill-opacity="0.21"/>
<circle cx="2919.1" cy="660.1" r="2.0" fill="#4468d8" fill-opacity="0.09"/>
<circle cx="2953.3" cy="656.4" r="2.6" fill="#4468d8" fill-opacity="0.10"/>
<circle cx="2962.6" cy="653.4" r="4.6" fill="#4468d8" fill-opacity="0.22"/>
<circle cx="2948.4" cy="644.3" r="2.7" fill="#4468d8" fill-opacity="0.17"/>
<circle cx="2964.4" cy="640.1" r="2.6" fill="#4468d8" fill-opacity="0.29"/>
<circle cx="2979.2" cy="620.5" r="2.6" fill="#4468d8" fill-opacity="0.29"/>
<circle cx="2967.6" cy="627.2" r="1.8" fill="#4468d8" fill-opacity="0.15"/>
<circle cx="2965.0" cy="612.8" r="2.4" fill="#4468d8" fill-opacity="0.18"/>
<circle cx="2995.4" cy="604.6" r="2.1" fill="#4468d8" fill-opacity="0.16"/>
<circle cx="2995.9" cy="598.9" r="2.8" fill="#4468d8" fill-opacity="0.12"/>
<circle cx="2988.6" cy="585.2" r="4.2" fill="#4468d8" fill-opacity="0.22"/>
<circle cx="3003.6" cy="563.1" r="3.0" fill="#4468d8" fill-opacity="0.14"/>
<circle cx="3023.2" cy="580.7" r="4.1" fill="#4468d8" fill-opacity="0.21"/>
<circle cx="3045.9" cy="581.9" r="4.7" fill="#4468d8" fill-opacity="0.21"/>
<circle cx="3029.7" cy="548.5" r="2.2" fill="#4468d8" fill-opacity="0.19"/>
<circle cx="3017.1" cy="563.9" r="4.4" fill="#4468d8" fill-opacity="0.26"/>
<circle cx="3025.6" cy="546.3" r="4.0" fill="#4468d8" fill-opacity="0.23"/>
<circle cx="3055.4" cy="556.3" r="2.2" fill="#4468d8" fill-opacity="0.15"/>
<circle cx="3080.6" cy="561.5" r="3.6" fill="#4468d8" fill-opacity="0.21"/>
<circle cx="3057.2" cy="528.5" r="3.4" fill="#4468d8" fill-opacity="0.06"/>
<circle cx="3082.4" cy="515.8" r="3.4" fill="#4468d8" fill-opacity="0.19"/>
<circle cx="3081.0" cy="524.3" r="4.2" fill="#4468d8" fill-opacity="0.12"/>
<circle cx="3098.5" cy="525.5" r="4.1" fill="#4468d8" fill-opacity="0.11"/>
<circle cx="3095.0" cy="482.3" r="3.4" fill="#4468d8" fill-opacity="0.15"/>
<circle cx="3086.0" cy="510.3" r="4.3" fill="#4468d8" fill-opacity="0.21"/>
<circle cx="3107.7" cy="497.6" r="2.3" fill="#4468d8" fill-opacity="0.12"/>
<circle cx="3115.1" cy="483.2" r="3.6" fill="#4468d8" fill-opacity="0.06"/>
<circle cx="3128.1" cy="488.1" r="4.0" fill="#4468d8" fill-opacity="0.23"/>
<circle cx="3118.8" cy="467.1" r="3.5" fill="#4468d8" fill-opacity="0.17"/>
<circle cx="3121.3" cy="468.4" r="4.7" fill="#4468d8" fill-opacity="0.11"/>
<circle cx="3158.6" cy="454.6" r="1.9" fill="#4468d8" fill-opacity="0.17"/>
<circle cx="3148.1" cy="421.5" r="3.2" fill="#4468d8" fill-opacity="0.12"/>
<circle cx="3145.8" cy="468.8" r="2.5" fill="#4468d8" fill-opacity="0.20"/>
<circle cx="3150.6" cy="443.2" r="4.8" fill="#4468d8" fill-opacity="0.09"/>
<circle cx="3149.7" cy="409.9" r="4.6" fill="#4468d8" fill-opacity="0.23"/>
<circle cx="3148.9" cy="438.6" r="3.4" fill="#4468d8" fill-opacity="0.07"/>
<circle cx="3162.0" cy="404.4" r="3.2" fill="#4468d8" fill-opacity="0.13"/>
<circle cx="3157.3" cy="403.3" r="2.8" fill="#4468d8" fill-opacity="0.26"/>
<circle cx="3172.4" cy="385.8" r="4.5" fill="#4468d8" fill-opacity="0.09"/>
<circle cx="3171.6" cy="368.0" r="4.7" fill="#4468d8" fill-opacity="0.13"/>
<circle cx="3148.8" cy="375.6" r="5.0" fill="#4468d8" fill-opacity="0.20"/>
<circle cx="3151.3" cy="367.4" r="2.7" fill="#4468d8" fill-opacity="0.07"/>
<circle cx="3179.6" cy="362.0" r="2.7" fill="#4468d8" fill-opacity="0.28"/>
<circle cx="3163.8" cy="348.6" r="3.4" fill="#4468d8" fill-opacity="0.11"/>
<circle cx="3145.2" cy="351.2" r="4.6" fill="#4468d8" fill-opacity="0.25"/>
<circle cx="3068.1" cy="549.3" r="4.8" fill="#4468d8" fill-opacity="0.07"/>
<circle cx="3080.4" cy="566.9" r="4.1" fill="#4468d8" fill-opacity="0.07"/>
<circle cx="3083.8" cy="568.5" r="2.7" fill="#4468d8" fill-opacity="0.03"/>
<circle cx="3089.6" cy="585.5" r="3.3" fill="#4468d8" fill-opacity="0.06"/>
<circle cx="3086.1" cy="606.3" r="4.9" fill="#4468d8" fill-opacity="0.05"/>
<circle cx="3089.0" cy="600.4" r="3.6" fill="#4468d8" fill-opacity="0.06"/>
<circle cx="3096.9" cy="617.4" r="2.5" fill="#4468d8" fill-opacity="0.11"/>
<circle cx="3093.1" cy="623.1" r="4.7" fill="#4468d8" fill-opacity="0.12"/>
<circle cx="3097.0" cy="633.2" r="2.4" fill="#4468d8" fill-opacity="0.03"/>
<circle cx="3101.0" cy="643.7" r="2.6" fill="#4468d8" fill-opacity="0.05"/>
<circle cx="3092.2" cy="644.6" r="4.2" fill="#4468d8" fill-opacity="0.06"/>
<circle cx="3099.9" cy="663.8" r="3.0" fill="#4468d8" fill-opacity="0.05"/>
<circle cx="3113.8" cy="670.9" r="4.9" fill="#4468d8" fill-opacity="0.03"/>
<circle cx="3101.7" cy="677.8" r="4.6" fill="#4468d8" fill-opacity="0.04"/>
<circle cx="3112.4" cy="692.2" r="3.1" fill="#4468d8" fill-opacity="0.06"/>
<circle cx="3127.5" cy="692.8" r="4.6" fill="#4468d8" fill-opacity="0.03"/>
<circle cx="3126.9" cy="707.8" r="4.7" fill="#4468d8" fill-opacity="0.07"/>
<circle cx="3117.7" cy="715.0" r="3.1" fill="#4468d8" fill-opacity="0.11"/>
<circle cx="3124.9" cy="712.9" r="4.9" fill="#4468d8" fill-opacity="0.05"/>
<circle cx="3123.1" cy="736.2" r="3.5" fill="#4468d8" fill-opacity="0.09"/>
<circle cx="3131.1" cy="739.4" r="3.9" fill="#4468d8" fill-opacity="0.09"/>
<circle cx="3114.4" cy="754.8" r="1.9" fill="#4468d8" fill-opacity="0.10"/>
<circle cx="3125.2" cy="776.6" r="3.9" fill="#4468d8" fill-opacity="0.05"/>
<circle cx="3128.2" cy="774.9" r="3.8" fill="#4468d8" fill-opacity="0.09"/>
<circle cx="3127.8" cy="782.3" r="3.5" fill="#4468d8" fill-opacity="0.08"/>
<circle cx="3123.4" cy="793.0" r="3.7" fill="#4468d8" fill-opacity="0.02"/>
</g>
</g>
<g filter="url(#b2)">
<ellipse cx="3137.5" cy="1165.8" rx="6.6" ry="7.4" fill="#3a78f0" fill-opacity="0.55" transform="rotate(15 3137.5 1165.8)"/>
<ellipse cx="3116.5" cy="1270" rx="7" ry="6" fill="#3a78f0" fill-opacity="0.55" transform="rotate(0 3116.5 1270)"/>
<ellipse cx="3045.8" cy="1304" rx="8" ry="5.6" fill="#3a78f0" fill-opacity="0.55" transform="rotate(-30 3045.8 1304)"/>
<ellipse cx="3063.7" cy="1298.7" rx="7" ry="5.4" fill="#3a78f0" fill-opacity="0.55" transform="rotate(0 3063.7 1298.7)"/>
<ellipse cx="2990.9" cy="1348.6" rx="8.4" ry="5.4" fill="#3a78f0" fill-opacity="0.55" transform="rotate(-35 2990.9 1348.6)"/>
<ellipse cx="2729.3" cy="1457" rx="5" ry="5" fill="#3a70e0" fill-opacity="0.5" transform="rotate(0 2729.3 1457)"/>
<ellipse cx="2953.8" cy="1387" rx="5.2" ry="5.2" fill="#3a70e0" fill-opacity="0.5" transform="rotate(0 2953.8 1387)"/>
<ellipse cx="2964.8" cy="1394" rx="6.2" ry="6.2" fill="#3a70e0" fill-opacity="0.5" transform="rotate(0 2964.8 1394)"/>
<ellipse cx="2880" cy="1487" rx="6.4" ry="5.4" fill="#3a70e0" fill-opacity="0.5" transform="rotate(-45 2880 1487)"/>
<ellipse cx="3127.5" cy="1235.6" rx="6" ry="8" fill="#3a70e0" fill-opacity="0.5" transform="rotate(0 3127.5 1235.6)"/>
<ellipse cx="2984" cy="1365" rx="5.4" ry="5.4" fill="#3a70e0" fill-opacity="0.5" transform="rotate(0 2984 1365)"/>
</g>
<g filter="url(#b07)">
<ellipse cx="3137.5" cy="1165.8" rx="2.6" ry="4.4" fill="#b4f41c" transform="rotate(15 3137.5 1165.8)"/>
<ellipse cx="3116.5" cy="1270" rx="3" ry="3" fill="#b4f41c" transform="rotate(0 3116.5 1270)"/>
<ellipse cx="3045.8" cy="1304" rx="4" ry="2.6" fill="#b4f41c" transform="rotate(-30 3045.8 1304)"/>
<ellipse cx="3063.7" cy="1298.7" rx="3" ry="2.4" fill="#b4f41c" transform="rotate(0 3063.7 1298.7)"/>
<ellipse cx="2990.9" cy="1348.6" rx="4.4" ry="2.4" fill="#b4f41c" transform="rotate(-35 2990.9 1348.6)"/>
<ellipse cx="2729.3" cy="1457" rx="2" ry="2" fill="#58a6c4" fill-opacity="0.85" transform="rotate(0 2729.3 1457)"/>
<ellipse cx="2953.8" cy="1387" rx="2.2" ry="2.2" fill="#58a6c4" fill-opacity="0.85" transform="rotate(0 2953.8 1387)"/>
<ellipse cx="2964.8" cy="1394" rx="3.2" ry="3.2" fill="#58a6c4" fill-opacity="0.85" transform="rotate(0 2964.8 1394)"/>
<ellipse cx="2880" cy="1487" rx="3.4" ry="2.4" fill="#58a6c4" fill-opacity="0.85" transform="rotate(-45 2880 1487)"/>
<ellipse cx="3127.5" cy="1235.6" rx="3" ry="5" fill="#58a6c4" fill-opacity="0.85" transform="rotate(0 3127.5 1235.6)"/>
<ellipse cx="2984" cy="1365" rx="2.4" ry="2.4" fill="#58a6c4" fill-opacity="0.85" transform="rotate(0 2984 1365)"/>
</g>
</g>
<g fill="none" stroke="#d41a70" stroke-width="2.4">
<rect x="2447.3" y="844.2" width="22" height="22"/>
<rect x="2438.0" y="881.3" width="22" height="22"/>
<rect x="2441.9" y="897.6" width="22" height="22"/>
<rect x="2584.2" y="899.8" width="22" height="22"/>
<rect x="2756.6" y="881.3" width="22" height="22"/>
<rect x="2471.7" y="951.2" width="22" height="22"/>
<rect x="2740.9" y="946.6" width="22" height="22"/>
<rect x="2871.7" y="936.9" width="22" height="22"/>
<rect x="2983.1" y="921.0" width="22" height="22"/>
<rect x="3070.2" y="909.4" width="22" height="22"/>
<rect x="3106.1" y="902.1" width="22" height="22"/>
<rect x="2750.9" y="1016.4" width="22" height="22"/>
<rect x="2518.1" y="1067.6" width="22" height="22"/>
<rect x="2530.6" y="1094.4" width="22" height="22"/>
<rect x="2525.5" y="1114.8" width="22" height="22"/>
<rect x="2482.8" y="1137.9" width="22" height="22"/>
<rect x="2550.8" y="1134.4" width="22" height="22"/>
<rect x="2535.2" y="1159.7" width="22" height="22"/>
<rect x="2572.0" y="1156.0" width="22" height="22"/>
<rect x="2746.8" y="1079.2" width="22" height="22"/>
<rect x="2742.5" y="1137.3" width="22" height="22"/>
<rect x="2744.4" y="1153.8" width="22" height="22"/>
<rect x="2744.7" y="1187.0" width="22" height="22"/>
<rect x="2591.3" y="1199.8" width="22" height="22"/>
<rect x="2563.2" y="1218.2" width="22" height="22"/>
<rect x="2597.6" y="1228.8" width="22" height="22"/>
<rect x="2722.2" y="1240.6" width="22" height="22"/>
<rect x="2608.2" y="1264.7" width="22" height="22"/>
<rect x="2644.6" y="1322.1" width="22" height="22"/>
<rect x="2747.1" y="1333.6" width="22" height="22"/>
<rect x="2750.9" y="1372.3" width="22" height="22"/>
<rect x="2641.8" y="1383.5" width="22" height="22"/>
<rect x="2675.8" y="1383.5" width="22" height="22"/>
<rect x="2703.0" y="1421.6" width="22" height="22"/>
<rect x="2716.6" y="1445.7" width="22" height="22"/>
<rect x="3114.6" y="1224.1" width="22" height="22"/>
<rect x="3065.6" y="1267.9" width="22" height="22"/>
<rect x="3051.0" y="1286.7" width="22" height="22"/>
<rect x="3014.2" y="1332.7" width="22" height="22"/>
<rect x="2974.9" y="1374.8" width="22" height="22"/>
<rect x="2889.0" y="1405.7" width="22" height="22"/>
<rect x="2874.9" y="1414.4" width="22" height="22"/>
<rect x="2861.8" y="1424.4" width="22" height="22"/>
<rect x="2898.3" y="1424.4" width="22" height="22"/>
<rect x="2928.6" y="1417.5" width="22" height="22"/>
<rect x="2882.1" y="1457.2" width="22" height="22"/>
<rect x="2867.7" y="1476.0" width="22" height="22"/>
<rect x="2949.4" y="1482.5" width="22" height="22"/>
<rect x="3094.3" y="1394.8" width="22" height="22"/>
<rect x="3096.2" y="1413.5" width="22" height="22"/>
<rect x="3105.9" y="1430.0" width="22" height="22"/>
<rect x="3113.1" y="1492.5" width="22" height="22"/>
<rect x="3114.6" y="1508.1" width="22" height="22"/>
<rect x="2779.9" y="1489.4" width="22" height="22"/>
<rect x="2809.5" y="1508.1" width="22" height="22"/>
<rect x="2758.1" y="1519.6" width="22" height="22"/>
</g>
<text transform="translate(2760.7 1516.1) scale(1.13 1)" x="0" y="0" font-size="20" textLength="68.6" lengthAdjust="spacing" fill="#f2f2f2" stroke="#f2f2f2" stroke-width="0.35">Plane-2</text>
<rect x="1128.0" y="1683.0" width="936.2" height="278.8" fill="#222226" />
<rect x="1129" y="1684" width="934.2" height="276.8" fill="none" stroke="#101012" stroke-width="2"/>
<rect x="1128.0" y="1683.0" width="13.0" height="278.8" fill="#1e1e22" />
<text x="1168.0" y="1705.1" font-size="17" textLength="170.7" lengthAdjust="spacingAndGlyphs" fill="#d6d6d6"  stroke="#d6d6d6" stroke-width="0.3">Calibrated biplane moc</text>
<text x="1346.0" y="1705.1" font-size="17" textLength="106.5" lengthAdjust="spacingAndGlyphs" fill="#d6d6d6"  stroke="#d6d6d6" stroke-width="0.3">50 µm Biplane</text>
<text x="1168.0" y="1728.6" font-size="17" textLength="64.5" lengthAdjust="spacingAndGlyphs" fill="#d6d6d6"  stroke="#d6d6d6" stroke-width="0.3">EM gain:</text>
<text x="1168.0" y="1751.6" font-size="17" textLength="160.0" lengthAdjust="spacingAndGlyphs" fill="#d6d6d6"  stroke="#d6d6d6" stroke-width="0.3">Recorded color chann</text>
<text x="1346.0" y="1751.6" font-size="17" textLength="132.0" lengthAdjust="spacingAndGlyphs" fill="#d6d6d6"  stroke="#d6d6d6" stroke-width="0.3">First channel only</text>
<text x="1168.0" y="1775.6" font-size="17" textLength="96.5" lengthAdjust="spacingAndGlyphs" fill="#d6d6d6"  stroke="#d6d6d6" stroke-width="0.3">Probe mode:</text>
<text x="1346.0" y="1775.6" font-size="17" textLength="154.0" lengthAdjust="spacingAndGlyphs" fill="#d6d6d6"  stroke="#d6d6d6" stroke-width="0.3">2 probes interleaved</text>
<text x="1168.0" y="1805.1" font-size="17" textLength="88.0" lengthAdjust="spacingAndGlyphs" fill="#d6d6d6"  stroke="#d6d6d6" stroke-width="0.3">PSF quality:</text>
<text x="1346.0" y="1805.1" font-size="17" textLength="38.5" lengthAdjust="spacingAndGlyphs" fill="#63c41f"  stroke="#63c41f" stroke-width="0.3">Good</text>
<clipPath id="cch"><rect x="1328" y="1735" width="6.8" height="22"/></clipPath>
<g clip-path="url(#cch)">
<text x="1329.5" y="1751.6" font-size="17" fill="#d6d6d6"  stroke="#d6d6d6" stroke-width="0.3">e</text>
</g>
<text x="1168.0" y="1841.1" font-size="17" textLength="64.0" lengthAdjust="spacingAndGlyphs" fill="#d6d6d6"  stroke="#d6d6d6" stroke-width="0.3">Probe 1:</text>
<text x="1347.0" y="1841.1" font-size="17" textLength="74.0" lengthAdjust="spacingAndGlyphs" fill="#d6d6d6"  stroke="#d6d6d6" stroke-width="0.3">Alexa 647</text>
<text x="1188.7" y="1872.6" font-size="17" textLength="100.8" lengthAdjust="spacingAndGlyphs" fill="#d6d6d6"  stroke="#d6d6d6" stroke-width="0.3">BG threshold:</text>
<rect x="1348.0" y="1852.5" width="683.0" height="28.5" fill="#161618" />
<text x="1354.5" y="1872.6" font-size="17" textLength="41.5" lengthAdjust="spacingAndGlyphs" fill="#d6d6d6"  stroke="#d6d6d6" stroke-width="0.3">50.00</text>
<text x="1168.0" y="1909.3" font-size="17" textLength="64.0" lengthAdjust="spacingAndGlyphs" fill="#d6d6d6"  stroke="#d6d6d6" stroke-width="0.3">Probe 2:</text>
<text x="1347.0" y="1909.3" font-size="17" textLength="52.5" lengthAdjust="spacingAndGlyphs" fill="#d6d6d6"  stroke="#d6d6d6" stroke-width="0.3">CF 568</text>
<text x="1188.7" y="1940.2" font-size="17" textLength="100.8" lengthAdjust="spacingAndGlyphs" fill="#d6d6d6"  stroke="#d6d6d6" stroke-width="0.3">BG threshold:</text>
<rect x="1348.0" y="1921.0" width="683.0" height="27.5" fill="#161618" />
<text x="1354.5" y="1940.2" font-size="17" textLength="50.5" lengthAdjust="spacingAndGlyphs" fill="#d6d6d6"  stroke="#d6d6d6" stroke-width="0.3">200.00</text>
<rect x="2025.2" y="1783.6" width="28.8" height="28.2" fill="#3c3c41" />
<radialGradient id="wd"><stop offset="0" stop-color="#ffffff"/><stop offset="0.55" stop-color="#f4f4f4"/><stop offset="1" stop-color="#f4f4f4" stop-opacity="0"/></radialGradient>
<circle cx="2039.2" cy="1797.3" r="7.5" fill="url(#wd)"/>
<rect x="2026.0" y="1820.3" width="26.2" height="26.4" fill="#d3146f" />
<rect x="2026.0" y="1889.2" width="26.2" height="25.4" fill="#8ff5f6" />
<rect x="2033.4" y="1854.0" width="15.6" height="24.2" fill="#36363a" />
<path d="M2036.7 1862.9 l4.5 -4.6 l4.5 4.6z M2036.7 1869.3 l4.5 4.6 l4.5 -4.6z" fill="#e4e4e4"/>
<rect x="2033.4" y="1922.0" width="15.6" height="24.6" fill="#36363a" />
<path d="M2036.7 1931.1 l4.5 -4.6 l4.5 4.6z M2036.7 1937.5 l4.5 4.6 l4.5 -4.6z" fill="#e4e4e4"/>
<rect x="2129.0" y="1683.0" width="946.4" height="278.8" fill="#222226" />
<rect x="2130" y="1684" width="944.4" height="276.8" fill="none" stroke="#101012" stroke-width="2"/>
<rect x="2129.0" y="1683.0" width="11.7" height="278.8" fill="#1e1e22" />
<text x="2159.5" y="1703.9" font-size="19.5" font-weight="bold" font-family="'Liberation Serif', serif" textLength="155.2" lengthAdjust="spacingAndGlyphs" fill="#f0f0f0" >Region of Interest</text>
<line x1="2159.0" y1="1711.5" x2="3065.4" y2="1711.5" stroke="#2d2d32" stroke-width="1.3" />
<text x="2168.2" y="1744.3" font-size="17" textLength="142.3" lengthAdjust="spacingAndGlyphs" fill="#d6d6d6"  stroke="#d6d6d6" stroke-width="0.3">Number of images:</text>
<text x="2319.7" y="1744.3" font-size="17" textLength="46.5" lengthAdjust="spacingAndGlyphs" fill="#d6d6d6"  stroke="#d6d6d6" stroke-width="0.3">30000</text>
<rect x="2169.0" y="1763.0" width="16.7" height="16.3" fill="#1f1f22" stroke="#38383c" stroke-width="1.3"/>
<path d="M2171.0 1771.2 L2175.7 1777.7 L2184.9 1763.8" fill="none" stroke="#d8d8d8" stroke-width="1.8"/>
<text x="2193.2" y="1777.6" font-size="17" textLength="57.4" lengthAdjust="spacingAndGlyphs" fill="#d6d6d6"  stroke="#d6d6d6" stroke-width="0.3">Probe 1</text>
<rect x="2261.8" y="1763.0" width="17.0" height="16.3" fill="#1f1f22" stroke="#38383c" stroke-width="1.3"/>
<path d="M2263.8 1771.2 L2268.6 1777.7 L2278.0 1763.8" fill="none" stroke="#d8d8d8" stroke-width="1.8"/>
<text x="2286.8" y="1777.6" font-size="17" textLength="57.4" lengthAdjust="spacingAndGlyphs" fill="#d6d6d6"  stroke="#d6d6d6" stroke-width="0.3">Probe 2</text>
<rect x="3024.7" y="1722.0" width="30.0" height="30.0" fill="#2f2f33" stroke="#3b3b40" stroke-width="1.2"/>
<rect x="3029.2" y="1728.5" width="21" height="16" fill="none" stroke="#e0e0e0" stroke-width="1.8" stroke-dasharray="3.4 2"/>
<text x="2168.2" y="1809.9" font-size="17" textLength="124.8" lengthAdjust="spacingAndGlyphs" fill="#d6d6d6"  stroke="#d6d6d6" stroke-width="0.3">Frame (Probe 1)</text>
<rect x="2296.8" y="1790.0" width="58.6" height="28.5" fill="#1a1a1d" />
<rect x="2996.2" y="1790.0" width="58.5" height="27.5" fill="#1a1a1d" />
<text x="2303.0" y="1809.9" font-size="17" fill="#d6d6d6"  stroke="#d6d6d6" stroke-width="0.3">1</text>
<text x="3001.2" y="1809.9" font-size="17" textLength="45.0" lengthAdjust="spacingAndGlyphs" fill="#d6d6d6"  stroke="#d6d6d6" stroke-width="0.3">20000</text>
<line x1="2376.0" y1="1802.4" x2="2975.5" y2="1802.4" stroke="#3b72d3" stroke-width="4.4" />
<rect x="2975.5" y="1795.4" width="13.2" height="14.0" fill="#5c5c62" rx="2"/>
<rect x="2363.0" y="1795.4" width="13.7" height="14.0" fill="#55555b" rx="2"/>
<text x="2168.2" y="1840.9" font-size="17" textLength="124.8" lengthAdjust="spacingAndGlyphs" fill="#d6d6d6"  stroke="#d6d6d6" stroke-width="0.3">Frame (Probe 2)</text>
<rect x="2296.8" y="1821.0" width="58.6" height="28.5" fill="#1a1a1d" />
<rect x="2996.2" y="1821.0" width="58.5" height="27.5" fill="#1a1a1d" />
<text x="2303.0" y="1840.9" font-size="17" fill="#d6d6d6"  stroke="#d6d6d6" stroke-width="0.3">1</text>
<text x="3001.2" y="1840.9" font-size="17" textLength="45.0" lengthAdjust="spacingAndGlyphs" fill="#d6d6d6"  stroke="#d6d6d6" stroke-width="0.3">10000</text>
<line x1="2376.0" y1="1833.4" x2="2975.5" y2="1833.4" stroke="#3b72d3" stroke-width="4.4" />
<rect x="2975.5" y="1826.4" width="13.2" height="14.0" fill="#5c5c62" rx="2"/>
<rect x="2363.0" y="1826.4" width="13.7" height="14.0" fill="#55555b" rx="2"/>
<text x="2168.2" y="1872.8" font-size="17" textLength="78.1" lengthAdjust="spacingAndGlyphs" fill="#d6d6d6"  stroke="#d6d6d6" stroke-width="0.3">Z Position:</text>
<rect x="2296.8" y="1852.9" width="58.6" height="28.5" fill="#1a1a1d" />
<rect x="2996.2" y="1852.9" width="58.5" height="27.5" fill="#1a1a1d" />
<text x="2303.0" y="1872.8" font-size="17" fill="#505055"  stroke="#505055" stroke-width="0.3">1</text>
<text x="3003.0" y="1872.8" font-size="17" fill="#505055"  stroke="#505055" stroke-width="0.3">1</text>
<line x1="2376.0" y1="1865.3" x2="2988.0" y2="1865.3" stroke="#3a3a3f" stroke-width="2.2" />
<rect x="2363.0" y="1858.3" width="13.7" height="14.0" fill="#47474c" rx="2"/>
<text x="2168.2" y="1903.3" font-size="17" textLength="39.2" lengthAdjust="spacingAndGlyphs" fill="#d6d6d6"  stroke="#d6d6d6" stroke-width="0.3">Cycle</text>
<rect x="2296.8" y="1883.4" width="58.6" height="28.5" fill="#1a1a1d" />
<rect x="2996.2" y="1883.4" width="58.5" height="27.5" fill="#1a1a1d" />
<text x="2303.0" y="1903.3" font-size="17" fill="#505055"  stroke="#505055" stroke-width="0.3">1</text>
<text x="3003.0" y="1903.3" font-size="17" fill="#505055"  stroke="#505055" stroke-width="0.3">1</text>
<line x1="2376.0" y1="1895.8" x2="2988.0" y2="1895.8" stroke="#3a3a3f" stroke-width="2.2" />
<rect x="2363.0" y="1888.8" width="13.7" height="14.0" fill="#47474c" rx="2"/>
<text x="2168.2" y="1935.2" font-size="17" textLength="85.6" lengthAdjust="spacingAndGlyphs" fill="#d6d6d6"  stroke="#d6d6d6" stroke-width="0.3">Time Point:</text>
<rect x="2296.8" y="1915.3" width="58.6" height="28.5" fill="#1a1a1d" />
<rect x="2996.2" y="1915.3" width="58.5" height="27.5" fill="#1a1a1d" />
<text x="2303.0" y="1935.2" font-size="17" fill="#505055"  stroke="#505055" stroke-width="0.3">1</text>
<text x="3003.0" y="1935.2" font-size="17" fill="#505055"  stroke="#505055" stroke-width="0.3">1</text>
<line x1="2376.0" y1="1927.7" x2="2988.0" y2="1927.7" stroke="#3a3a3f" stroke-width="2.2" />
<rect x="2363.0" y="1920.7" width="13.7" height="14.0" fill="#47474c" rx="2"/>
</svg></body></html>
